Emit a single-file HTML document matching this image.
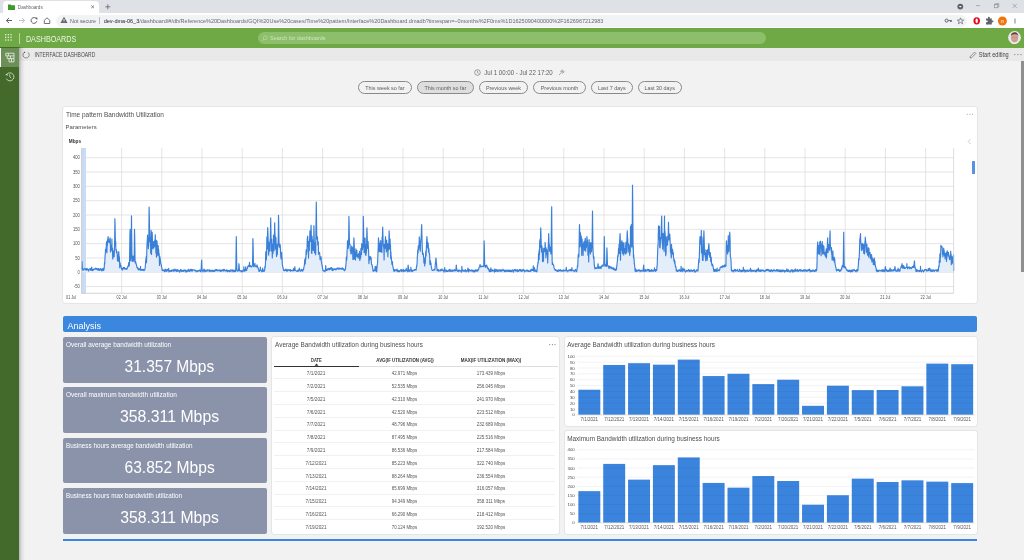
<!DOCTYPE html>
<html><head><meta charset="utf-8">
<style>
*{margin:0;padding:0;box-sizing:border-box}
html,body{width:1024px;height:560px;overflow:hidden;background:#f2f2f2;font-family:"Liberation Sans",sans-serif;color:#333}
.a{position:absolute}
#tabs{left:0;top:0;width:1024px;height:13px;background:#dee1e6}
#tab{left:3px;top:1px;width:96px;height:13px;background:#fff;border-radius:4px 4px 0 0}
#toolbar{left:0;top:13px;width:1024px;height:15px;background:#fff}
#omni{left:56px;top:14.5px;width:911px;height:12px;background:#f1f3f4;border-radius:6px}
#hdr{left:0;top:28px;width:1024px;height:19.6px;background:#6fa945}
#search{left:258px;top:31.5px;width:508px;height:12px;background:#8dbf6b;border-radius:6px}
#side{left:0;top:47.4px;width:19px;height:513px;background:#43692b}
#sel{left:1px;top:47.5px;width:18px;height:19px;background:#6b8f56}
#selbar{left:0;top:47.5px;width:1px;height:19px;background:#fff}
#sub{left:19px;top:47.6px;width:1005px;height:13.4px;background:#e9e9e9}
#shadow{left:19px;top:47.4px;width:6px;height:513px;background:linear-gradient(to right,rgba(0,0,0,.26),rgba(0,0,0,.08) 45%,rgba(0,0,0,0))}
.t{position:absolute;white-space:nowrap;line-height:1}
.btn{position:absolute;top:81px;height:12.7px;border:1px solid #8a8a8a;border-radius:7px;font-size:6px;color:#555;text-align:center;line-height:10.7px;white-space:nowrap}
.card{position:absolute;background:#fff;border-radius:2px;box-shadow:0 0 0 0.5px rgba(0,0,0,.08),0 0 1.5px rgba(0,0,0,.08)}
.gcard{position:absolute;left:63px;width:204px;height:45.6px;background:#8a93aa;border-radius:2px;color:#fff}
.gcard .l{position:absolute;left:2.5px;top:5px;font-size:5.6px;white-space:nowrap;line-height:1}
.gcard .v{position:absolute;left:0;width:204px;top:21px;text-align:center;font-size:15.5px;white-space:nowrap;line-height:1}
.row{position:absolute;left:274px;width:281px;height:12.8px;border-bottom:1px solid #f0f0f0;font-size:4.6px;color:#555}
.row span{position:absolute;top:4px;white-space:nowrap;line-height:1;transform:translateX(-50%)}
</style></head><body>
<div class="a" id="tabs"></div>
<div class="a" id="tab"></div>
<div class="a" id="toolbar"></div>
<div class="a" id="omni"></div>
<div class="a" id="hdr"></div>
<div class="a" id="search"></div>
<div class="a" id="side"></div>
<div class="a" id="sel"></div>
<div class="a" id="selbar"></div>
<div class="a" id="sub"></div>
<div class="a" id="shadow"></div>

<!-- tab contents -->
<svg class="a" style="left:8px;top:4px" width="7" height="6" viewBox="0 0 7 6"><path d="M0 0.5h2.6l0.8 0.8H7V6H0Z" fill="#3f9a2d"/></svg>

<!-- toolbar icons -->
<svg class="a" style="left:0;top:13px" width="60" height="15" viewBox="0 0 60 15">
 <path d="M12 7.5H6.5M9 5L6.3 7.5L9 10" stroke="#5f6368" stroke-width="1" fill="none"/>
 <path d="M19 7.5H24.5M22 5L24.7 7.5L22 10" stroke="#bdc1c6" stroke-width="1" fill="none"/>
 <path d="M36.6 6.2A2.9 2.9 0 1 0 36.8 8.2" stroke="#5f6368" stroke-width="1" fill="none"/><path d="M35 4.6h2.4v2.4z" fill="#5f6368"/>
 <path d="M44.3 7.3L47 4.8L49.8 7.3V10.5H44.3Z" stroke="#5f6368" stroke-width="0.9" fill="none"/>
</svg>
<svg class="a" style="left:60px;top:16px" width="8" height="8" viewBox="0 0 8 8"><path d="M4 0.8L7.5 7H0.5Z" fill="#5f6368"/><rect x="3.6" y="3" width="0.8" height="2" fill="#fff"/><rect x="3.6" y="5.5" width="0.8" height="0.7" fill="#fff"/></svg>
<div class="a" style="left:99px;top:17px;width:0.7px;height:7px;background:#bbb"></div>
<svg class="a" style="left:940px;top:16px" width="84" height="10" viewBox="0 0 84 10">
 <circle cx="6.6" cy="4.6" r="1.5" stroke="#5f6368" stroke-width="1" fill="none"/><path d="M8.1 4.6H11.8M10.6 4.6v1.4M11.6 4.6v1.2" stroke="#5f6368" stroke-width="0.9"/>
 <path d="M20.5 1.9L21.4 4.1H23.7L21.9 5.5L22.6 7.8L20.5 6.4L18.4 7.8L19.1 5.5L17.3 4.1H19.6Z" stroke="#5f6368" stroke-width="0.7" fill="none" stroke-linejoin="round"/>
 <ellipse cx="36.7" cy="4.8" rx="3.3" ry="3.6" fill="#e60a1e"/><ellipse cx="36.7" cy="4.8" rx="1.2" ry="2.4" fill="#fff"/>
 <path d="M46 2.4h2V1.6a0.9 0.9 0 0 1 1.8 0v0.8h2v2h0.8a0.9 0.9 0 0 1 0 1.8h-0.8v2.2h-5.8V6.2h0.8a0.9 0.9 0 0 0 0-1.8h-0.8Z" fill="#5f6368"/>
 <circle cx="62.4" cy="5" r="4.5" fill="#ef7410"/><text x="62.4" y="6.9" font-size="5.2" fill="#fff" text-anchor="middle" font-family="Liberation Sans">n</text>
 <rect x="74.6" y="2.5" width="0.8" height="5" fill="#5f6368"/>
</svg>
<!-- window controls -->
<svg class="a" style="left:950px;top:1px" width="74" height="12" viewBox="0 0 74 12">
 <circle cx="10.3" cy="5.6" r="2.9" fill="#5f6368"/><path d="M8.9 5L10.3 6.6L11.7 5Z" fill="#fff"/>
 <path d="M26 4.6h4" stroke="#888" stroke-width="0.6"/>
 <rect x="44.4" y="3.4" width="3.4" height="3.4" stroke="#888" stroke-width="0.6" fill="none"/><path d="M45.4 3.4V2.6H48.8V5.9H47.8" stroke="#888" stroke-width="0.6" fill="none"/>
 <path d="M62.7 2.9L66.7 6.9M66.7 2.9L62.7 6.9" stroke="#888" stroke-width="0.6"/>
</svg>

<!-- green header -->
<svg class="a" style="left:5px;top:34px" width="7" height="7" viewBox="0 0 7 7" fill="#dfeed3">
 <rect x="0" y="0" width="1.3" height="1.3"/><rect x="2.7" y="0" width="1.3" height="1.3"/><rect x="5.4" y="0" width="1.3" height="1.3"/>
 <rect x="0" y="2.7" width="1.3" height="1.3"/><rect x="2.7" y="2.7" width="1.3" height="1.3"/><rect x="5.4" y="2.7" width="1.3" height="1.3"/>
 <rect x="0" y="5.4" width="1.3" height="1.3"/><rect x="2.7" y="5.4" width="1.3" height="1.3"/><rect x="5.4" y="5.4" width="1.3" height="1.3"/>
</svg>
<div class="a" style="left:19px;top:32.5px;width:0.6px;height:11px;background:#b5d69e"></div>
<svg class="a" style="left:261px;top:34.5px" width="8" height="8" viewBox="0 0 8 8"><circle cx="4.2" cy="2.8" r="1.9" stroke="#c4ddb2" stroke-width="0.6" fill="none"/><path d="M2.85 4.15L0.9 6.1" stroke="#c4ddb2" stroke-width="0.7"/></svg>
<svg class="a" style="left:1008px;top:31.3px" width="13" height="13" viewBox="0 0 13 13">
 <defs><clipPath id="avc"><circle cx="6.5" cy="6.5" r="6.4"/></clipPath></defs>
 <g clip-path="url(#avc)">
 <rect width="13" height="13" fill="#e6e8ec"/>
 <path d="M1.5 13.5C2.5 11 4.5 10.5 6.5 10.5S10.5 11 11.5 13.5Z" fill="#f4f4f6"/>
 <ellipse cx="6.6" cy="6.9" rx="3.7" ry="4.6" fill="#d2a294"/>
 <path d="M2.9 5.6C2.7 2.2 4.6 1.2 6.6 1.2S10.5 2.2 10.3 5.6C9.9 3.9 8.8 3.2 6.6 3.2S3.3 3.9 2.9 5.6Z" fill="#6b4036"/>
 <path d="M4.6 6.6h1.2M7.5 6.6h1.2" stroke="#8a5f55" stroke-width="0.5"/>
 <path d="M5.6 9.4h2" stroke="#b57c70" stroke-width="0.4"/>
 </g>
</svg>

<!-- sidebar icons -->
<svg class="a" style="left:5px;top:52px" width="10" height="11" viewBox="0 0 10 11" fill="none" stroke="#eef3ea" stroke-width="0.8">
 <path d="M0.8 1.2H9V9.9H4V6.6H2.2V3.9H0.8Z M2.2 3.9H9 M4 6.6H9 M3.4 1.2V3.9 M5.5 3.9V6.6 M6.5 6.6V9.9"/>
</svg>
<svg class="a" style="left:5px;top:72px" width="10" height="10" viewBox="0 0 10 10" fill="none" stroke="#e9f0e4" stroke-width="0.75">
 <path d="M1.9 2.2A4 4 0 1 1 1.3 6.6"/><path d="M0.6 2.9L1.9 2.2L2.3 3.6" stroke-width="0.9"/><path d="M4.6 2.3L4.9 4.9L6.2 6.2"/>
</svg>

<!-- sub header -->
<svg class="a" style="left:21.5px;top:50.5px" width="8" height="8" viewBox="0 0 8 8"><path d="M5.65 1.22A3.1 3.1 0 1 1 2.55 1.22" stroke="#555" stroke-width="0.65" fill="none"/><circle cx="2.6" cy="1.3" r="0.65" fill="#444"/></svg>
<svg class="a" style="left:968.5px;top:50.5px" width="8" height="8" viewBox="0 0 8 8"><path d="M1 7L1.4 5.3L5.6 1.1L6.9 2.4L2.7 6.6Z" stroke="#555" stroke-width="0.6" fill="none"/></svg>

<!-- scrollbar -->
<div class="a" style="left:1021px;top:61px;width:3px;height:211px;background:#8f8f8f"></div>

<!-- time range -->
<svg class="a" style="left:473.5px;top:69px" width="7" height="7" viewBox="0 0 7 7"><circle cx="3.5" cy="3.5" r="2.8" stroke="#666" stroke-width="0.6" fill="none"/><path d="M3.5 1.8V3.6L4.7 4.4" stroke="#666" stroke-width="0.6" fill="none"/></svg>
<svg class="a" style="left:558px;top:68.5px" width="7" height="7" viewBox="0 0 7 7"><path d="M1 6L3 4M2.4 2.2L4.8 4.6M3.2 1.8L5.2 3.8M3.6 1.4L5.6 3.4L6.2 2.8L4.2 0.8Z" stroke="#666" stroke-width="0.55" fill="none"/></svg>

<div class="btn" style="left:358px;width:54px"></div>
<div class="btn" style="left:417px;width:57px;background:#dedede"></div>
<div class="btn" style="left:479px;width:49px"></div>
<div class="btn" style="left:533px;width:53px"></div>
<div class="btn" style="left:591px;width:41.5px"></div>
<div class="btn" style="left:638px;width:44px"></div>

<!-- big chart card -->
<div class="card" style="left:63px;top:106.5px;width:913.5px;height:196.5px"></div>
<svg class="a" style="left:967px;top:138px" width="5" height="7" viewBox="0 0 5 7"><path d="M3.5 1L1.2 3.5L3.5 6" stroke="#aaa" stroke-width="0.6" fill="none"/></svg>
<div class="a" style="left:972.2px;top:160.7px;width:2.8px;height:12.9px;background:#5592e2;border-radius:0.5px"></div>

<svg class="a" style="left:0;top:0" width="1024" height="560" viewBox="0 0 1024 560">
 <g stroke="#dcdcdc" stroke-width="0.75">
  <path d="M81.5 286.62H953.7"/>
<path d="M81.5 272.30H953.7"/>
<path d="M81.5 257.98H953.7"/>
<path d="M81.5 243.65H953.7"/>
<path d="M81.5 229.33H953.7"/>
<path d="M81.5 215.00H953.7"/>
<path d="M81.5 200.68H953.7"/>
<path d="M81.5 186.35H953.7"/>
<path d="M81.5 172.03H953.7"/>
<path d="M81.5 157.70H953.7"/>
 </g>
 <g stroke="#dadada" stroke-width="0.7">
  <path d="M121.60 148V293.2"/>
<path d="M161.80 148V293.2"/>
<path d="M202.00 148V293.2"/>
<path d="M242.20 148V293.2"/>
<path d="M282.40 148V293.2"/>
<path d="M322.60 148V293.2"/>
<path d="M362.80 148V293.2"/>
<path d="M403.00 148V293.2"/>
<path d="M443.20 148V293.2"/>
<path d="M483.40 148V293.2"/>
<path d="M523.60 148V293.2"/>
<path d="M563.80 148V293.2"/>
<path d="M604.00 148V293.2"/>
<path d="M644.20 148V293.2"/>
<path d="M684.40 148V293.2"/>
<path d="M724.60 148V293.2"/>
<path d="M764.80 148V293.2"/>
<path d="M805.00 148V293.2"/>
<path d="M845.20 148V293.2"/>
<path d="M885.40 148V293.2"/>
<path d="M925.60 148V293.2"/>
 </g>
 <rect x="81.4" y="148" width="4.6" height="145.5" fill="#c8dcf5"/>
 <path d="M81.3,269.3 L81.5,268.9 L81.7,266.3 L81.9,263.2 L82.1,261.7 L82.3,266.3 L82.5,270.0 L82.7,269.0 L82.9,270.1 L83.1,270.5 L83.3,269.5 L83.5,269.3 L83.7,269.0 L83.9,268.9 L84.1,268.8 L84.3,268.4 L84.5,269.1 L84.7,269.2 L84.9,269.5 L85.1,269.8 L85.3,269.9 L85.5,269.3 L85.7,269.2 L85.9,268.5 L86.1,269.0 L86.3,269.6 L86.5,270.2 L86.7,269.1 L86.9,268.3 L87.1,268.7 L87.3,268.7 L87.5,269.4 L87.7,269.8 L87.9,269.8 L88.1,270.3 L88.3,269.5 L88.5,270.4 L88.7,271.1 L88.9,270.5 L89.1,269.1 L89.3,269.1 L89.5,268.9 L89.7,268.8 L89.9,268.8 L90.1,268.6 L90.3,268.7 L90.5,268.6 L90.7,270.1 L90.9,270.3 L91.1,268.7 L91.3,268.9 L91.5,268.8 L91.7,267.1 L91.9,269.6 L92.1,270.7 L92.3,270.4 L92.5,270.3 L92.7,270.2 L92.9,269.4 L93.1,270.5 L93.3,269.9 L93.5,269.4 L93.7,269.0 L93.9,269.0 L94.1,269.2 L94.3,269.3 L94.5,269.4 L94.7,269.2 L94.9,269.0 L95.1,268.9 L95.3,268.4 L95.5,268.2 L95.7,269.2 L95.9,269.3 L96.1,269.4 L96.3,268.3 L96.5,268.3 L96.7,269.2 L96.9,268.6 L97.1,269.0 L97.3,269.4 L97.5,269.8 L97.7,269.4 L97.9,270.1 L98.1,269.4 L98.3,268.4 L98.5,268.6 L98.7,270.1 L98.9,270.2 L99.1,269.7 L99.3,269.6 L99.5,269.0 L99.7,270.5 L99.9,269.3 L100.1,269.6 L100.3,269.2 L100.5,269.1 L100.7,268.5 L100.9,269.9 L101.1,269.5 L101.3,270.1 L101.5,270.7 L101.7,270.2 L101.9,269.6 L102.1,269.0 L102.3,270.7 L102.5,269.0 L102.7,269.6 L102.9,268.8 L103.1,268.2 L103.3,268.2 L103.5,270.4 L103.7,270.1 L103.9,269.8 L104.1,268.8 L104.3,266.7 L104.5,262.5 L104.7,263.9 L104.9,259.8 L105.1,254.9 L105.3,254.5 L105.5,249.4 L105.7,251.8 L105.9,250.4 L106.1,249.8 L106.3,246.0 L106.5,241.8 L106.7,246.9 L106.9,252.8 L107.1,246.0 L107.3,240.7 L107.5,244.9 L107.7,239.6 L107.9,238.1 L108.1,236.5 L108.3,241.0 L108.5,239.1 L108.7,241.2 L108.9,242.3 L109.1,242.3 L109.3,241.6 L109.5,242.8 L109.7,240.7 L109.9,238.8 L110.1,237.9 L110.3,240.9 L110.5,252.0 L110.7,247.7 L110.9,245.1 L111.1,247.6 L111.3,250.1 L111.5,248.9 L111.7,248.9 L111.9,239.0 L112.1,251.0 L112.3,249.3 L112.5,248.1 L112.7,259.0 L112.9,258.7 L113.1,250.5 L113.3,255.4 L113.5,251.8 L113.7,252.2 L113.9,255.3 L114.1,256.8 L114.3,253.5 L114.5,244.9 L114.7,237.6 L114.9,218.7 L115.1,225.1 L115.3,237.8 L115.5,245.7 L115.7,241.2 L115.9,250.3 L116.1,249.5 L116.3,249.4 L116.5,252.7 L116.7,252.2 L116.9,252.8 L117.1,251.9 L117.3,256.5 L117.5,260.8 L117.7,255.4 L117.9,256.7 L118.1,257.3 L118.3,261.4 L118.5,254.5 L118.7,251.6 L118.9,253.8 L119.1,257.5 L119.3,256.5 L119.5,260.0 L119.7,267.8 L119.9,263.6 L120.1,262.7 L120.3,264.5 L120.5,266.5 L120.7,265.1 L120.9,265.8 L121.1,266.3 L121.3,268.1 L121.5,268.9 L121.7,269.2 L121.9,269.3 L122.1,268.5 L122.3,270.1 L122.5,268.2 L122.7,268.3 L122.9,269.7 L123.1,268.5 L123.3,267.9 L123.5,267.5 L123.7,268.2 L123.9,268.5 L124.1,267.5 L124.3,267.8 L124.5,267.5 L124.7,267.9 L124.9,269.1 L125.1,268.8 L125.3,269.0 L125.5,268.7 L125.7,268.6 L125.9,268.7 L126.1,269.1 L126.3,268.6 L126.5,269.3 L126.7,269.2 L126.9,269.2 L127.1,268.8 L127.3,268.0 L127.5,267.0 L127.7,266.6 L127.9,266.9 L128.1,266.7 L128.3,265.2 L128.5,266.5 L128.7,262.6 L128.9,263.9 L129.1,265.9 L129.3,265.5 L129.5,262.8 L129.7,249.4 L129.9,235.9 L130.1,229.3 L130.3,248.8 L130.5,260.6 L130.7,259.6 L130.9,256.6 L131.1,251.9 L131.3,233.9 L131.5,215.9 L131.7,234.0 L131.9,252.1 L132.1,261.4 L132.3,259.0 L132.5,259.3 L132.7,258.7 L132.9,261.0 L133.1,256.0 L133.3,257.1 L133.5,260.6 L133.7,261.2 L133.9,256.3 L134.1,260.7 L134.3,248.9 L134.5,229.3 L134.7,235.9 L134.9,249.1 L135.1,262.8 L135.3,262.4 L135.5,261.3 L135.7,261.9 L135.9,263.7 L136.1,263.4 L136.3,264.6 L136.5,264.9 L136.7,265.7 L136.9,267.4 L137.1,267.5 L137.3,267.2 L137.5,268.3 L137.7,268.0 L137.9,268.0 L138.1,268.2 L138.3,269.9 L138.5,269.3 L138.7,269.5 L138.9,268.8 L139.1,270.0 L139.3,268.8 L139.5,269.7 L139.7,269.1 L139.9,269.2 L140.1,268.9 L140.3,269.8 L140.5,266.4 L140.7,270.1 L140.9,270.4 L141.1,269.8 L141.3,269.6 L141.5,269.9 L141.7,269.7 L141.9,269.9 L142.1,270.2 L142.3,269.7 L142.5,269.5 L142.7,270.3 L142.9,269.6 L143.1,269.2 L143.3,269.5 L143.5,269.6 L143.7,270.0 L143.9,270.6 L144.1,270.6 L144.3,270.1 L144.5,269.5 L144.7,269.9 L144.9,269.1 L145.1,268.3 L145.3,266.5 L145.5,264.0 L145.7,260.3 L145.9,259.3 L146.1,258.5 L146.3,256.2 L146.5,262.7 L146.7,256.9 L146.9,247.5 L147.1,243.0 L147.3,240.9 L147.5,235.1 L147.7,240.4 L147.9,245.1 L148.1,243.8 L148.3,248.8 L148.5,246.1 L148.7,245.1 L148.9,229.4 L149.1,207.0 L149.3,214.2 L149.5,228.2 L149.7,241.8 L149.9,237.3 L150.1,239.3 L150.3,240.8 L150.5,241.1 L150.7,253.2 L150.9,235.5 L151.1,230.2 L151.3,241.0 L151.5,254.5 L151.7,238.3 L151.9,234.3 L152.1,232.2 L152.3,235.0 L152.5,243.2 L152.7,246.9 L152.9,248.9 L153.1,243.7 L153.3,241.5 L153.5,242.7 L153.7,241.8 L153.9,247.8 L154.1,242.5 L154.3,246.1 L154.5,246.6 L154.7,240.1 L154.9,242.5 L155.1,240.7 L155.3,234.7 L155.5,245.8 L155.7,244.4 L155.9,253.1 L156.1,240.2 L156.3,251.7 L156.5,257.2 L156.7,246.1 L156.9,240.8 L157.1,242.7 L157.3,246.9 L157.5,251.3 L157.7,254.0 L157.9,255.7 L158.1,245.6 L158.3,248.3 L158.5,249.3 L158.7,249.9 L158.9,255.0 L159.1,253.3 L159.3,256.4 L159.5,265.5 L159.7,261.3 L159.9,256.6 L160.1,260.4 L160.3,258.7 L160.5,262.4 L160.7,262.6 L160.9,263.4 L161.1,264.1 L161.3,265.1 L161.5,266.9 L161.7,267.1 L161.9,268.5 L162.1,270.1 L162.3,270.1 L162.5,270.5 L162.7,269.8 L162.9,270.8 L163.1,270.4 L163.3,270.6 L163.5,270.4 L163.7,270.0 L163.9,269.9 L164.1,270.3 L164.3,270.0 L164.5,271.7 L164.7,270.5 L164.9,270.4 L165.1,270.5 L165.3,269.0 L165.5,270.7 L165.7,270.1 L165.9,271.4 L166.1,270.6 L166.3,270.4 L166.5,269.7 L166.7,270.6 L166.9,271.3 L167.1,270.6 L167.3,270.5 L167.5,269.3 L167.7,269.8 L167.9,270.0 L168.1,270.2 L168.3,270.3 L168.5,270.8 L168.7,268.4 L168.9,271.9 L169.1,270.7 L169.3,271.0 L169.5,270.7 L169.7,270.8 L169.9,271.1 L170.1,271.0 L170.3,271.3 L170.5,270.5 L170.7,270.7 L170.9,271.4 L171.1,270.4 L171.3,270.6 L171.5,271.3 L171.7,271.2 L171.9,269.8 L172.1,270.3 L172.3,271.0 L172.5,270.6 L172.7,270.2 L172.9,270.1 L173.1,270.5 L173.3,270.2 L173.5,270.5 L173.7,271.5 L173.9,270.1 L174.1,269.1 L174.3,270.1 L174.5,269.5 L174.7,270.6 L174.9,271.0 L175.1,270.3 L175.3,270.0 L175.5,270.4 L175.7,269.5 L175.9,269.2 L176.1,269.6 L176.3,271.2 L176.5,271.3 L176.7,270.8 L176.9,271.4 L177.1,270.0 L177.3,270.0 L177.5,271.3 L177.7,269.6 L177.9,269.8 L178.1,269.9 L178.3,270.6 L178.5,270.9 L178.7,271.0 L178.9,270.7 L179.1,270.6 L179.3,271.5 L179.5,271.9 L179.7,272.2 L179.9,271.0 L180.1,270.7 L180.3,270.0 L180.5,270.0 L180.7,269.4 L180.9,270.1 L181.1,271.2 L181.3,271.4 L181.5,270.1 L181.7,270.4 L181.9,271.0 L182.1,271.2 L182.3,271.0 L182.5,270.3 L182.7,270.5 L182.9,271.5 L183.1,270.9 L183.3,271.4 L183.5,270.5 L183.7,270.1 L183.9,271.1 L184.1,271.0 L184.3,270.0 L184.5,270.2 L184.7,270.1 L184.9,269.8 L185.1,270.8 L185.3,270.0 L185.5,270.4 L185.7,271.5 L185.9,272.2 L186.1,270.7 L186.3,271.6 L186.5,271.0 L186.7,270.5 L186.9,271.7 L187.1,271.6 L187.3,271.4 L187.5,270.7 L187.7,270.0 L187.9,269.9 L188.1,270.6 L188.3,270.3 L188.5,271.2 L188.7,269.2 L188.9,271.0 L189.1,271.1 L189.3,270.5 L189.5,271.3 L189.7,271.4 L189.9,270.4 L190.1,270.1 L190.3,269.6 L190.5,270.8 L190.7,269.3 L190.9,270.5 L191.1,270.1 L191.3,270.7 L191.5,270.3 L191.7,269.3 L191.9,270.1 L192.1,271.4 L192.3,270.2 L192.5,269.7 L192.7,270.2 L192.9,269.8 L193.1,269.9 L193.3,270.0 L193.5,270.0 L193.7,269.9 L193.9,269.9 L194.1,270.2 L194.3,270.2 L194.5,270.6 L194.7,270.6 L194.9,269.9 L195.1,270.8 L195.3,270.6 L195.5,271.0 L195.7,270.5 L195.9,270.9 L196.1,271.2 L196.3,270.9 L196.5,270.9 L196.7,271.9 L196.9,271.0 L197.1,270.9 L197.3,271.3 L197.5,271.2 L197.7,271.5 L197.9,270.5 L198.1,271.1 L198.3,270.6 L198.5,271.0 L198.7,270.7 L198.9,271.0 L199.1,270.6 L199.3,270.2 L199.5,270.0 L199.7,270.5 L199.9,270.6 L200.1,270.7 L200.3,271.6 L200.5,271.5 L200.7,270.9 L200.9,269.5 L201.1,271.7 L201.3,266.5 L201.5,262.2 L201.7,260.0 L201.9,266.5 L202.1,270.0 L202.3,270.2 L202.5,270.1 L202.7,270.7 L202.9,271.9 L203.1,271.1 L203.3,271.3 L203.5,270.8 L203.7,270.0 L203.9,269.2 L204.1,269.6 L204.3,269.4 L204.5,270.5 L204.7,271.0 L204.9,271.8 L205.1,271.6 L205.3,271.3 L205.5,271.3 L205.7,270.1 L205.9,270.4 L206.1,270.9 L206.3,270.6 L206.5,270.4 L206.7,270.9 L206.9,271.4 L207.1,270.1 L207.3,270.4 L207.5,269.9 L207.7,270.1 L207.9,270.6 L208.1,270.5 L208.3,270.6 L208.5,270.8 L208.7,270.3 L208.9,270.3 L209.1,269.7 L209.3,269.9 L209.5,270.5 L209.7,271.3 L209.9,271.7 L210.1,271.0 L210.3,270.6 L210.5,271.1 L210.7,270.1 L210.9,270.5 L211.1,271.0 L211.3,271.3 L211.5,270.9 L211.7,270.7 L211.9,270.7 L212.1,270.4 L212.3,270.2 L212.5,271.1 L212.7,271.6 L212.9,271.0 L213.1,270.6 L213.3,270.6 L213.5,270.6 L213.7,271.5 L213.9,270.7 L214.1,270.3 L214.3,270.2 L214.5,270.5 L214.7,271.4 L214.9,270.9 L215.1,270.0 L215.3,270.8 L215.5,270.7 L215.7,270.4 L215.9,269.4 L216.1,270.1 L216.3,269.5 L216.5,270.7 L216.7,269.6 L216.9,269.6 L217.1,270.7 L217.3,270.0 L217.5,270.5 L217.7,270.2 L217.9,270.9 L218.1,270.8 L218.3,270.3 L218.5,270.2 L218.7,270.6 L218.9,270.1 L219.1,270.6 L219.3,269.8 L219.5,270.1 L219.7,270.4 L219.9,270.7 L220.1,270.2 L220.3,271.4 L220.5,270.0 L220.7,271.3 L220.9,270.8 L221.1,270.4 L221.3,270.2 L221.5,271.2 L221.7,270.9 L221.9,270.4 L222.1,270.4 L222.3,270.0 L222.5,270.4 L222.7,270.1 L222.9,271.0 L223.1,269.4 L223.3,270.3 L223.5,270.6 L223.7,270.5 L223.9,271.1 L224.1,270.5 L224.3,269.4 L224.5,270.2 L224.7,270.4 L224.9,270.5 L225.1,270.5 L225.3,270.5 L225.5,270.9 L225.7,270.5 L225.9,270.9 L226.1,270.5 L226.3,269.7 L226.5,270.4 L226.7,270.7 L226.9,270.4 L227.1,271.3 L227.3,271.8 L227.5,270.3 L227.7,270.1 L227.9,270.3 L228.1,271.1 L228.3,270.8 L228.5,271.3 L228.7,270.7 L228.9,270.9 L229.1,271.1 L229.3,270.3 L229.5,271.2 L229.7,271.7 L229.9,270.6 L230.1,271.7 L230.3,270.7 L230.5,270.9 L230.7,269.8 L230.9,270.1 L231.1,270.0 L231.3,270.1 L231.5,270.0 L231.7,270.4 L231.9,270.8 L232.1,271.9 L232.3,269.9 L232.5,270.7 L232.7,270.5 L232.9,270.4 L233.1,270.0 L233.3,270.1 L233.5,271.3 L233.7,271.1 L233.9,270.7 L234.1,270.7 L234.3,271.9 L234.5,271.0 L234.7,271.3 L234.9,270.1 L235.1,271.1 L235.3,271.1 L235.5,271.5 L235.7,271.1 L235.9,264.0 L236.1,250.2 L236.3,236.5 L236.5,250.2 L236.7,264.0 L236.9,270.3 L237.1,270.6 L237.3,271.1 L237.5,270.3 L237.7,270.8 L237.9,270.8 L238.1,270.9 L238.3,270.7 L238.5,270.8 L238.7,268.0 L238.9,263.7 L239.1,265.1 L239.3,268.0 L239.5,270.9 L239.7,270.3 L239.9,270.5 L240.1,270.6 L240.3,270.5 L240.5,270.7 L240.7,271.1 L240.9,270.9 L241.1,272.0 L241.3,270.9 L241.5,271.2 L241.7,270.6 L241.9,271.6 L242.1,271.3 L242.3,271.0 L242.5,271.4 L242.7,271.7 L242.9,271.2 L243.1,270.1 L243.3,271.1 L243.5,269.9 L243.7,270.3 L243.9,266.7 L244.1,270.4 L244.3,270.1 L244.5,271.1 L244.7,270.4 L244.9,269.5 L245.1,270.7 L245.3,269.8 L245.5,270.9 L245.7,266.9 L245.9,270.7 L246.1,270.6 L246.3,270.3 L246.5,270.4 L246.7,270.1 L246.9,269.1 L247.1,268.8 L247.3,267.8 L247.5,268.1 L247.7,266.7 L247.9,266.4 L248.1,265.9 L248.3,266.4 L248.5,266.0 L248.7,265.4 L248.9,265.0 L249.1,265.2 L249.3,266.3 L249.5,262.3 L249.7,266.5 L249.9,265.8 L250.1,266.2 L250.3,265.5 L250.5,266.2 L250.7,266.5 L250.9,266.5 L251.1,267.2 L251.3,266.9 L251.5,266.2 L251.7,266.0 L251.9,266.6 L252.1,266.5 L252.3,265.5 L252.5,265.5 L252.7,255.0 L252.9,238.5 L253.1,244.0 L253.3,255.0 L253.5,265.9 L253.7,266.4 L253.9,266.8 L254.1,266.3 L254.3,265.2 L254.5,264.6 L254.7,265.1 L254.9,263.3 L255.1,265.3 L255.3,266.2 L255.5,266.4 L255.7,266.6 L255.9,266.5 L256.1,266.7 L256.3,266.6 L256.5,266.9 L256.7,265.9 L256.9,264.8 L257.1,265.4 L257.3,266.9 L257.5,266.3 L257.7,267.1 L257.9,267.2 L258.1,268.8 L258.3,268.5 L258.5,269.2 L258.7,269.7 L258.9,271.2 L259.1,271.6 L259.3,271.5 L259.5,270.4 L259.7,271.1 L259.9,270.7 L260.1,270.5 L260.3,267.1 L260.5,269.4 L260.7,269.1 L260.9,270.0 L261.1,270.3 L261.3,270.5 L261.5,270.9 L261.7,271.0 L261.9,271.8 L262.1,271.6 L262.3,271.6 L262.5,271.0 L262.7,268.1 L262.9,270.7 L263.1,271.5 L263.3,270.9 L263.5,271.1 L263.7,270.2 L263.9,270.3 L264.1,270.6 L264.3,270.9 L264.5,271.2 L264.7,269.2 L264.9,266.4 L265.1,268.3 L265.3,265.9 L265.5,263.0 L265.7,253.2 L265.9,251.7 L266.1,254.9 L266.3,260.0 L266.5,256.7 L266.7,246.0 L266.9,236.9 L267.1,244.0 L267.3,249.1 L267.5,238.8 L267.7,227.6 L267.9,231.3 L268.1,238.6 L268.3,242.0 L268.5,253.4 L268.7,255.1 L268.9,247.2 L269.1,250.1 L269.3,242.6 L269.5,244.1 L269.7,251.1 L269.9,243.6 L270.1,239.6 L270.3,239.3 L270.5,228.5 L270.7,217.9 L270.9,228.4 L271.1,238.9 L271.3,251.0 L271.5,248.4 L271.7,239.2 L271.9,250.4 L272.1,251.1 L272.3,257.9 L272.5,250.2 L272.7,244.1 L272.9,253.6 L273.1,250.7 L273.3,243.6 L273.5,235.1 L273.7,237.4 L273.9,243.6 L274.1,250.7 L274.3,240.1 L274.5,231.5 L274.7,222.7 L274.9,231.5 L275.1,235.8 L275.3,240.1 L275.5,249.1 L275.7,238.0 L275.9,237.4 L276.1,242.0 L276.3,248.2 L276.5,256.6 L276.7,255.0 L276.9,244.5 L277.1,249.9 L277.3,254.6 L277.5,248.5 L277.7,246.3 L277.9,243.9 L278.1,242.9 L278.3,234.6 L278.5,215.3 L278.7,221.8 L278.9,235.0 L279.1,246.2 L279.3,247.0 L279.5,247.1 L279.7,244.0 L279.9,247.6 L280.1,244.5 L280.3,245.7 L280.5,250.0 L280.7,255.0 L280.9,257.9 L281.1,258.8 L281.3,258.7 L281.5,259.0 L281.7,252.3 L281.9,257.1 L282.1,259.3 L282.3,264.0 L282.5,265.8 L282.7,265.8 L282.9,268.0 L283.1,267.7 L283.3,268.6 L283.5,270.2 L283.7,270.5 L283.9,270.3 L284.1,270.1 L284.3,270.9 L284.5,270.0 L284.7,270.1 L284.9,270.0 L285.1,270.5 L285.3,269.7 L285.5,270.5 L285.7,269.8 L285.9,269.0 L286.1,269.6 L286.3,270.1 L286.5,269.5 L286.7,270.8 L286.9,270.9 L287.1,271.5 L287.3,270.3 L287.5,269.7 L287.7,270.5 L287.9,269.8 L288.1,270.5 L288.3,270.2 L288.5,270.2 L288.7,270.1 L288.9,269.5 L289.1,270.1 L289.3,270.1 L289.5,270.6 L289.7,270.3 L289.9,270.7 L290.1,269.6 L290.3,270.7 L290.5,271.2 L290.7,269.9 L290.9,270.1 L291.1,270.1 L291.3,270.7 L291.5,270.7 L291.7,270.9 L291.9,270.5 L292.1,270.7 L292.3,270.3 L292.5,270.3 L292.7,270.6 L292.9,269.9 L293.1,270.9 L293.3,270.8 L293.5,270.2 L293.7,268.4 L293.9,269.9 L294.1,270.7 L294.3,269.4 L294.5,270.6 L294.7,269.1 L294.9,266.7 L295.1,270.2 L295.3,270.2 L295.5,269.9 L295.7,270.6 L295.9,270.7 L296.1,270.7 L296.3,271.0 L296.5,271.2 L296.7,271.2 L296.9,271.5 L297.1,271.5 L297.3,270.8 L297.5,270.5 L297.7,270.6 L297.9,270.8 L298.1,270.0 L298.3,271.3 L298.5,270.3 L298.7,270.8 L298.9,270.2 L299.1,269.5 L299.3,268.1 L299.5,270.1 L299.7,270.7 L299.9,270.6 L300.1,270.3 L300.3,270.8 L300.5,270.7 L300.7,270.8 L300.9,271.4 L301.1,270.8 L301.3,269.2 L301.5,269.9 L301.7,270.0 L301.9,270.1 L302.1,269.7 L302.3,269.8 L302.5,270.9 L302.7,271.1 L302.9,269.9 L303.1,269.6 L303.3,269.8 L303.5,269.8 L303.7,268.4 L303.9,267.3 L304.1,266.3 L304.3,265.6 L304.5,263.2 L304.7,260.0 L304.9,259.0 L305.1,260.6 L305.3,263.9 L305.5,257.7 L305.7,260.0 L305.9,257.7 L306.1,250.0 L306.3,254.3 L306.5,254.3 L306.7,249.4 L306.9,251.9 L307.1,245.4 L307.3,237.7 L307.5,244.0 L307.7,236.1 L307.9,246.2 L308.1,243.2 L308.3,244.9 L308.5,258.3 L308.7,250.0 L308.9,241.4 L309.1,244.1 L309.3,250.5 L309.5,241.4 L309.7,237.8 L309.9,230.8 L310.1,233.0 L310.3,236.7 L310.5,241.3 L310.7,241.5 L310.9,231.1 L311.1,225.2 L311.3,233.2 L311.5,252.7 L311.7,252.7 L311.9,253.5 L312.1,236.4 L312.3,249.6 L312.5,239.5 L312.7,243.4 L312.9,248.1 L313.1,243.5 L313.3,250.5 L313.5,248.6 L313.7,243.5 L313.9,225.6 L314.1,231.9 L314.3,243.2 L314.5,253.0 L314.7,249.4 L314.9,249.3 L315.1,242.9 L315.3,245.1 L315.5,245.4 L315.7,254.8 L315.9,231.6 L316.1,216.5 L316.3,202.1 L316.5,217.0 L316.7,232.4 L316.9,239.1 L317.1,238.0 L317.3,237.1 L317.5,237.0 L317.7,245.0 L317.9,241.5 L318.1,243.2 L318.3,241.9 L318.5,254.2 L318.7,251.7 L318.9,253.5 L319.1,253.7 L319.3,252.3 L319.5,253.2 L319.7,253.0 L319.9,256.9 L320.1,259.7 L320.3,257.7 L320.5,259.3 L320.7,257.1 L320.9,257.6 L321.1,256.8 L321.3,261.8 L321.5,262.1 L321.7,263.1 L321.9,264.3 L322.1,265.8 L322.3,265.7 L322.5,268.0 L322.7,269.1 L322.9,270.6 L323.1,270.9 L323.3,270.9 L323.5,270.6 L323.7,270.6 L323.9,270.9 L324.1,270.7 L324.3,271.0 L324.5,271.1 L324.7,271.5 L324.9,271.8 L325.1,270.2 L325.3,270.8 L325.5,269.9 L325.7,265.5 L325.9,268.4 L326.1,270.6 L326.3,269.8 L326.5,269.3 L326.7,270.4 L326.9,270.3 L327.1,269.4 L327.3,269.8 L327.5,268.9 L327.7,268.8 L327.9,270.0 L328.1,269.2 L328.3,268.6 L328.5,269.0 L328.7,269.0 L328.9,268.3 L329.1,269.5 L329.3,268.8 L329.5,268.6 L329.7,269.9 L329.9,269.0 L330.1,268.0 L330.3,268.4 L330.5,269.0 L330.7,268.4 L330.9,267.8 L331.1,268.6 L331.3,269.1 L331.5,268.4 L331.7,267.6 L331.9,269.4 L332.1,270.3 L332.3,270.7 L332.5,269.3 L332.7,269.3 L332.9,268.7 L333.1,269.4 L333.3,269.5 L333.5,270.1 L333.7,269.6 L333.9,269.0 L334.1,269.4 L334.3,269.1 L334.5,269.5 L334.7,269.5 L334.9,268.6 L335.1,268.8 L335.3,269.0 L335.5,269.1 L335.7,269.9 L335.9,269.8 L336.1,269.8 L336.3,269.5 L336.5,268.5 L336.7,268.8 L336.9,268.4 L337.1,268.0 L337.3,268.3 L337.5,268.1 L337.7,268.5 L337.9,268.9 L338.1,269.3 L338.3,268.2 L338.5,268.6 L338.7,268.4 L338.9,269.0 L339.1,268.3 L339.3,267.9 L339.5,268.9 L339.7,269.0 L339.9,269.0 L340.1,268.5 L340.3,269.0 L340.5,269.1 L340.7,268.2 L340.9,268.2 L341.1,268.8 L341.3,268.8 L341.5,268.5 L341.7,268.8 L341.9,269.4 L342.1,268.7 L342.3,267.7 L342.5,268.2 L342.7,268.5 L342.9,268.8 L343.1,269.1 L343.3,269.4 L343.5,269.2 L343.7,268.7 L343.9,269.2 L344.1,270.5 L344.3,270.8 L344.5,270.2 L344.7,270.0 L344.9,270.1 L345.1,270.0 L345.3,270.0 L345.5,268.7 L345.7,266.9 L345.9,264.5 L346.1,263.2 L346.3,257.2 L346.5,260.2 L346.7,259.7 L346.9,256.9 L347.1,250.0 L347.3,249.2 L347.5,241.2 L347.7,241.5 L347.9,240.4 L348.1,248.0 L348.3,248.3 L348.5,246.7 L348.7,234.8 L348.9,216.4 L349.1,222.6 L349.3,235.0 L349.5,244.5 L349.7,244.0 L349.9,245.0 L350.1,244.5 L350.3,250.4 L350.5,250.3 L350.7,251.1 L350.9,253.7 L351.1,252.2 L351.3,254.0 L351.5,250.8 L351.7,246.1 L351.9,246.7 L352.1,248.3 L352.3,247.1 L352.5,249.9 L352.7,253.8 L352.9,259.6 L353.1,248.7 L353.3,249.1 L353.5,259.3 L353.7,246.3 L353.9,237.9 L354.1,240.8 L354.3,246.8 L354.5,253.0 L354.7,259.1 L354.9,257.9 L355.1,252.2 L355.3,256.6 L355.5,259.9 L355.7,256.5 L355.9,248.9 L356.1,256.0 L356.3,251.8 L356.5,253.5 L356.7,253.4 L356.9,250.4 L357.1,256.8 L357.3,256.6 L357.5,257.3 L357.7,254.9 L357.9,255.5 L358.1,255.4 L358.3,253.8 L358.5,256.5 L358.7,256.3 L358.9,258.5 L359.1,253.8 L359.3,253.8 L359.5,251.3 L359.7,259.7 L359.9,260.5 L360.1,258.6 L360.3,253.7 L360.5,256.0 L360.7,258.0 L360.9,248.3 L361.1,251.1 L361.3,251.1 L361.5,254.4 L361.7,243.5 L361.9,244.9 L362.1,248.7 L362.3,249.9 L362.5,249.3 L362.7,246.8 L362.9,247.3 L363.1,235.8 L363.3,216.4 L363.5,222.9 L363.7,235.6 L363.9,242.5 L364.1,252.4 L364.3,244.6 L364.5,244.8 L364.7,250.2 L364.9,238.5 L365.1,238.0 L365.3,254.3 L365.5,244.5 L365.7,249.2 L365.9,255.5 L366.1,246.5 L366.3,253.0 L366.5,250.6 L366.7,239.2 L366.9,227.9 L367.1,231.7 L367.3,239.7 L367.5,248.3 L367.7,245.3 L367.9,243.0 L368.1,241.6 L368.3,246.4 L368.5,249.2 L368.7,254.6 L368.9,263.6 L369.1,260.3 L369.3,259.7 L369.5,260.3 L369.7,257.8 L369.9,256.4 L370.1,259.3 L370.3,256.7 L370.5,257.8 L370.7,257.3 L370.9,257.2 L371.1,257.7 L371.3,261.8 L371.5,264.3 L371.7,264.5 L371.9,264.3 L372.1,265.2 L372.3,266.8 L372.5,267.4 L372.7,268.1 L372.9,270.5 L373.1,271.1 L373.3,271.3 L373.5,271.2 L373.7,270.4 L373.9,270.2 L374.1,270.0 L374.3,270.2 L374.5,270.7 L374.7,270.5 L374.9,270.8 L375.1,266.4 L375.3,270.5 L375.5,270.8 L375.7,270.9 L375.9,270.8 L376.1,266.6 L376.3,269.8 L376.5,271.3 L376.7,271.8 L376.9,269.6 L377.1,266.8 L377.3,264.3 L377.5,263.9 L377.7,259.9 L377.9,254.6 L378.1,250.6 L378.3,244.4 L378.5,237.9 L378.7,242.3 L378.9,240.8 L379.1,251.4 L379.3,249.7 L379.5,244.5 L379.7,243.5 L379.9,249.3 L380.1,251.7 L380.3,243.1 L380.5,251.7 L380.7,240.6 L380.9,243.9 L381.1,243.5 L381.3,251.7 L381.5,250.8 L381.7,243.8 L381.9,252.5 L382.1,237.1 L382.3,241.7 L382.5,234.3 L382.7,227.0 L382.9,234.3 L383.1,240.7 L383.3,245.6 L383.5,246.5 L383.7,247.0 L383.9,249.0 L384.1,260.0 L384.3,245.7 L384.5,244.4 L384.7,244.4 L384.9,248.5 L385.1,244.0 L385.3,240.3 L385.5,236.5 L385.7,240.3 L385.9,244.2 L386.1,247.3 L386.3,252.0 L386.5,249.9 L386.7,240.2 L386.9,249.7 L387.1,248.2 L387.3,250.3 L387.5,243.6 L387.7,250.7 L387.9,256.7 L388.1,248.3 L388.3,249.7 L388.5,250.1 L388.7,243.9 L388.9,241.3 L389.1,230.8 L389.3,234.3 L389.5,241.6 L389.7,249.1 L389.9,245.3 L390.1,239.0 L390.3,249.2 L390.5,244.6 L390.7,258.6 L390.9,251.8 L391.1,256.1 L391.3,256.9 L391.5,259.2 L391.7,261.5 L391.9,264.3 L392.1,263.9 L392.3,261.6 L392.5,262.3 L392.7,265.4 L392.9,266.8 L393.1,267.4 L393.3,268.6 L393.5,269.3 L393.7,270.5 L393.9,271.0 L394.1,271.5 L394.3,271.0 L394.5,270.2 L394.7,269.4 L394.9,269.9 L395.1,270.7 L395.3,270.6 L395.5,269.9 L395.7,270.6 L395.9,270.7 L396.1,270.1 L396.3,270.1 L396.5,270.0 L396.7,270.9 L396.9,269.4 L397.1,269.0 L397.3,269.8 L397.5,270.8 L397.7,271.6 L397.9,271.3 L398.1,270.4 L398.3,270.4 L398.5,270.8 L398.7,270.9 L398.9,271.8 L399.1,270.5 L399.3,271.7 L399.5,271.5 L399.7,270.9 L399.9,271.2 L400.1,270.7 L400.3,270.9 L400.5,269.8 L400.7,270.6 L400.9,270.0 L401.1,270.0 L401.3,269.6 L401.5,270.6 L401.7,271.6 L401.9,270.6 L402.1,270.3 L402.3,270.4 L402.5,271.0 L402.7,270.9 L402.9,270.0 L403.1,269.4 L403.3,269.7 L403.5,271.6 L403.7,270.5 L403.9,270.0 L404.1,270.0 L404.3,270.3 L404.5,271.0 L404.7,270.3 L404.9,271.4 L405.1,270.1 L405.3,270.6 L405.5,270.2 L405.7,270.1 L405.9,270.3 L406.1,271.0 L406.3,268.2 L406.5,270.8 L406.7,270.6 L406.9,270.3 L407.1,270.4 L407.3,270.6 L407.5,269.9 L407.7,271.8 L407.9,268.6 L408.1,265.1 L408.3,266.3 L408.5,268.6 L408.7,270.9 L408.9,270.6 L409.1,271.7 L409.3,271.3 L409.5,269.9 L409.7,270.7 L409.9,271.0 L410.1,270.3 L410.3,270.3 L410.5,271.0 L410.7,270.7 L410.9,267.2 L411.1,270.4 L411.3,271.2 L411.5,270.6 L411.7,270.1 L411.9,270.2 L412.1,271.7 L412.3,271.4 L412.5,271.1 L412.7,270.9 L412.9,270.1 L413.1,270.5 L413.3,270.4 L413.5,270.7 L413.7,270.7 L413.9,270.2 L414.1,270.5 L414.3,269.7 L414.5,270.0 L414.7,269.6 L414.9,269.9 L415.1,269.5 L415.3,269.3 L415.5,269.6 L415.7,270.0 L415.9,270.1 L416.1,270.1 L416.3,268.8 L416.5,266.2 L416.7,267.0 L416.9,264.4 L417.1,263.4 L417.3,257.4 L417.5,255.4 L417.7,250.1 L417.9,250.0 L418.1,252.8 L418.3,245.8 L418.5,249.6 L418.7,249.2 L418.9,246.5 L419.1,244.1 L419.3,236.9 L419.5,244.3 L419.7,241.4 L419.9,242.4 L420.1,249.6 L420.3,251.2 L420.5,246.6 L420.7,241.2 L420.9,239.7 L421.1,238.1 L421.3,234.7 L421.5,227.8 L421.7,224.5 L421.9,234.3 L422.1,241.7 L422.3,248.5 L422.5,254.3 L422.7,252.4 L422.9,253.8 L423.1,254.4 L423.3,253.6 L423.5,257.2 L423.7,258.0 L423.9,263.0 L424.1,260.5 L424.3,263.2 L424.5,259.5 L424.7,265.9 L424.9,262.3 L425.1,257.0 L425.3,263.3 L425.5,257.8 L425.7,253.3 L425.9,250.7 L426.1,256.0 L426.3,249.5 L426.5,244.8 L426.7,240.1 L426.9,236.5 L427.1,239.5 L427.3,243.2 L427.5,248.0 L427.7,244.7 L427.9,246.4 L428.1,242.7 L428.3,245.3 L428.5,251.4 L428.7,252.3 L428.9,248.6 L429.1,253.2 L429.3,252.9 L429.5,253.3 L429.7,256.5 L429.9,264.4 L430.1,260.9 L430.3,260.5 L430.5,261.5 L430.7,264.3 L430.9,262.8 L431.1,265.2 L431.3,267.1 L431.5,267.2 L431.7,268.6 L431.9,269.7 L432.1,270.1 L432.3,270.3 L432.5,270.5 L432.7,270.2 L432.9,270.2 L433.1,270.2 L433.3,270.3 L433.5,269.7 L433.7,270.0 L433.9,270.2 L434.1,270.2 L434.3,270.0 L434.5,269.9 L434.7,268.8 L434.9,269.7 L435.1,267.0 L435.3,264.0 L435.5,262.7 L435.7,261.0 L435.9,258.1 L436.1,258.6 L436.3,262.6 L436.5,263.3 L436.7,266.5 L436.9,268.4 L437.1,270.8 L437.3,270.7 L437.5,270.5 L437.7,269.3 L437.9,270.1 L438.1,270.1 L438.3,270.2 L438.5,271.1 L438.7,269.7 L438.9,270.1 L439.1,270.4 L439.3,270.6 L439.5,270.7 L439.7,270.9 L439.9,270.6 L440.1,271.1 L440.3,269.7 L440.5,269.9 L440.7,269.9 L440.9,269.8 L441.1,269.5 L441.3,270.6 L441.5,270.1 L441.7,270.1 L441.9,268.9 L442.1,270.1 L442.3,270.0 L442.5,269.7 L442.7,270.1 L442.9,270.5 L443.1,270.5 L443.3,271.2 L443.5,271.0 L443.7,270.1 L443.9,271.1 L444.1,272.1 L444.3,270.4 L444.5,270.8 L444.7,267.6 L444.9,270.2 L445.1,270.6 L445.3,270.6 L445.5,270.2 L445.7,270.2 L445.9,271.7 L446.1,271.3 L446.3,270.1 L446.5,270.4 L446.7,270.5 L446.9,271.3 L447.1,270.9 L447.3,271.3 L447.5,271.5 L447.7,271.5 L447.9,270.5 L448.1,270.9 L448.3,270.0 L448.5,270.7 L448.7,270.9 L448.9,270.8 L449.1,271.4 L449.3,270.0 L449.5,269.4 L449.7,271.2 L449.9,271.0 L450.1,270.4 L450.3,271.1 L450.5,269.9 L450.7,271.0 L450.9,270.2 L451.1,271.4 L451.3,270.9 L451.5,270.4 L451.7,271.1 L451.9,270.9 L452.1,269.8 L452.3,270.3 L452.5,270.2 L452.7,271.4 L452.9,271.3 L453.1,270.3 L453.3,270.8 L453.5,270.2 L453.7,270.6 L453.9,270.7 L454.1,270.7 L454.3,270.1 L454.5,269.7 L454.7,269.8 L454.9,271.2 L455.1,270.3 L455.3,269.9 L455.5,270.2 L455.7,270.6 L455.9,269.7 L456.1,267.4 L456.3,265.1 L456.5,267.4 L456.7,268.9 L456.9,270.3 L457.1,270.9 L457.3,271.2 L457.5,270.3 L457.7,270.5 L457.9,270.7 L458.1,271.7 L458.3,270.7 L458.5,270.1 L458.7,270.8 L458.9,270.3 L459.1,271.2 L459.3,270.0 L459.5,270.2 L459.7,270.4 L459.9,270.8 L460.1,270.5 L460.3,270.8 L460.5,270.8 L460.7,270.7 L460.9,270.8 L461.1,270.6 L461.3,272.2 L461.5,272.2 L461.7,270.8 L461.9,266.3 L462.1,270.5 L462.3,270.1 L462.5,270.0 L462.7,270.9 L462.9,270.2 L463.1,270.3 L463.3,270.2 L463.5,270.8 L463.7,271.2 L463.9,270.9 L464.1,271.2 L464.3,271.1 L464.5,270.1 L464.7,270.8 L464.9,271.2 L465.1,270.9 L465.3,270.9 L465.5,269.7 L465.7,270.0 L465.9,271.1 L466.1,271.9 L466.3,270.6 L466.5,270.7 L466.7,270.8 L466.9,270.9 L467.1,270.9 L467.3,270.5 L467.5,271.2 L467.7,269.7 L467.9,268.0 L468.1,268.6 L468.3,269.7 L468.5,270.3 L468.7,271.9 L468.9,271.1 L469.1,269.5 L469.3,269.4 L469.5,269.9 L469.7,270.4 L469.9,270.1 L470.1,270.7 L470.3,270.8 L470.5,270.5 L470.7,270.8 L470.9,270.8 L471.1,270.6 L471.3,270.5 L471.5,269.8 L471.7,270.4 L471.9,271.1 L472.1,270.6 L472.3,270.9 L472.5,270.0 L472.7,270.6 L472.9,270.6 L473.1,271.3 L473.3,272.0 L473.5,271.0 L473.7,270.4 L473.9,270.4 L474.1,270.3 L474.3,270.8 L474.5,271.9 L474.7,271.9 L474.9,271.1 L475.1,270.9 L475.3,270.7 L475.5,269.7 L475.7,270.3 L475.9,270.3 L476.1,271.4 L476.3,271.2 L476.5,270.1 L476.7,270.3 L476.9,270.0 L477.1,269.8 L477.3,270.5 L477.5,270.8 L477.7,271.2 L477.9,269.8 L478.1,269.7 L478.3,269.3 L478.5,269.9 L478.7,269.1 L478.9,268.2 L479.1,267.4 L479.3,267.2 L479.5,266.6 L479.7,266.6 L479.9,265.2 L480.1,264.5 L480.3,265.5 L480.5,266.8 L480.7,266.8 L480.9,266.2 L481.1,265.9 L481.3,266.6 L481.5,266.5 L481.7,266.7 L481.9,266.6 L482.1,266.5 L482.3,266.5 L482.5,266.2 L482.7,266.3 L482.9,266.1 L483.1,266.7 L483.3,266.4 L483.5,266.3 L483.7,266.5 L483.9,256.3 L484.1,240.8 L484.3,245.9 L484.5,256.3 L484.7,265.9 L484.9,265.1 L485.1,265.9 L485.3,265.9 L485.5,267.4 L485.7,266.4 L485.9,265.6 L486.1,265.3 L486.3,265.4 L486.5,265.1 L486.7,266.1 L486.9,265.6 L487.1,267.4 L487.3,266.7 L487.5,268.1 L487.7,267.5 L487.9,268.9 L488.1,268.1 L488.3,268.9 L488.5,268.3 L488.7,269.5 L488.9,270.0 L489.1,270.2 L489.3,271.7 L489.5,270.9 L489.7,271.5 L489.9,270.3 L490.1,269.5 L490.3,270.6 L490.5,271.2 L490.7,271.7 L490.9,267.9 L491.1,271.4 L491.3,270.1 L491.5,269.7 L491.7,270.8 L491.9,270.5 L492.1,270.1 L492.3,271.1 L492.5,270.9 L492.7,269.8 L492.9,270.2 L493.1,270.7 L493.3,270.5 L493.5,270.9 L493.7,270.9 L493.9,270.4 L494.1,270.1 L494.3,270.8 L494.5,272.2 L494.7,271.3 L494.9,268.8 L495.1,269.9 L495.3,271.4 L495.5,270.6 L495.7,270.0 L495.9,269.9 L496.1,271.3 L496.3,269.9 L496.5,269.6 L496.7,269.9 L496.9,270.9 L497.1,270.0 L497.3,271.2 L497.5,270.9 L497.7,271.7 L497.9,269.8 L498.1,270.6 L498.3,271.3 L498.5,270.1 L498.7,271.0 L498.9,270.9 L499.1,270.4 L499.3,270.1 L499.5,269.8 L499.7,271.0 L499.9,270.1 L500.1,270.4 L500.3,271.0 L500.5,269.9 L500.7,270.5 L500.9,271.6 L501.1,269.9 L501.3,270.4 L501.5,270.2 L501.7,270.3 L501.9,271.0 L502.1,270.5 L502.3,270.8 L502.5,270.7 L502.7,270.5 L502.9,269.1 L503.1,270.4 L503.3,270.1 L503.5,270.6 L503.7,270.2 L503.9,270.2 L504.1,270.0 L504.3,270.5 L504.5,271.6 L504.7,270.6 L504.9,270.7 L505.1,270.3 L505.3,271.3 L505.5,271.1 L505.7,271.6 L505.9,270.0 L506.1,270.7 L506.3,270.9 L506.5,270.4 L506.7,271.2 L506.9,270.8 L507.1,270.2 L507.3,270.4 L507.5,271.4 L507.7,270.5 L507.9,270.2 L508.1,271.0 L508.3,271.4 L508.5,270.0 L508.7,270.7 L508.9,270.4 L509.1,271.0 L509.3,271.4 L509.5,271.0 L509.7,270.4 L509.9,270.1 L510.1,271.5 L510.3,270.9 L510.5,271.3 L510.7,270.4 L510.9,270.3 L511.1,271.5 L511.3,270.9 L511.5,271.4 L511.7,270.9 L511.9,271.8 L512.1,270.4 L512.3,269.9 L512.5,270.4 L512.7,270.3 L512.9,270.5 L513.1,270.2 L513.3,271.1 L513.5,272.2 L513.7,271.2 L513.9,271.0 L514.1,269.9 L514.3,270.3 L514.5,269.9 L514.7,270.1 L514.9,269.4 L515.1,269.9 L515.3,270.7 L515.5,271.0 L515.7,270.5 L515.9,269.6 L516.1,270.0 L516.3,271.0 L516.5,270.1 L516.7,270.3 L516.9,271.1 L517.1,271.4 L517.3,271.6 L517.5,271.0 L517.7,269.7 L517.9,270.3 L518.1,270.3 L518.3,270.5 L518.5,271.4 L518.7,270.6 L518.9,270.8 L519.1,270.3 L519.3,270.2 L519.5,269.6 L519.7,269.9 L519.9,269.5 L520.1,271.0 L520.3,271.1 L520.5,269.5 L520.7,270.6 L520.9,270.2 L521.1,270.3 L521.3,270.6 L521.5,271.4 L521.7,270.4 L521.9,269.8 L522.1,270.0 L522.3,270.3 L522.5,270.3 L522.7,271.1 L522.9,270.2 L523.1,269.6 L523.3,269.4 L523.5,270.7 L523.7,270.4 L523.9,270.3 L524.1,270.4 L524.3,270.1 L524.5,270.8 L524.7,272.0 L524.9,271.1 L525.1,271.3 L525.3,270.8 L525.5,270.6 L525.7,270.6 L525.9,270.5 L526.1,270.7 L526.3,270.6 L526.5,270.1 L526.7,270.2 L526.9,271.3 L527.1,270.7 L527.3,270.2 L527.5,270.8 L527.7,270.4 L527.9,270.2 L528.1,271.0 L528.3,271.4 L528.5,270.9 L528.7,270.9 L528.9,271.1 L529.1,271.6 L529.3,271.2 L529.5,271.4 L529.7,271.0 L529.9,270.9 L530.1,270.6 L530.3,270.0 L530.5,271.0 L530.7,271.4 L530.9,269.9 L531.1,270.5 L531.3,270.5 L531.5,269.2 L531.7,269.4 L531.9,270.5 L532.1,270.5 L532.3,270.5 L532.5,269.6 L532.7,270.4 L532.9,270.2 L533.1,269.8 L533.3,265.8 L533.5,271.0 L533.7,270.4 L533.9,271.1 L534.1,270.7 L534.3,270.8 L534.5,267.5 L534.7,270.1 L534.9,269.9 L535.1,271.3 L535.3,271.0 L535.5,271.1 L535.7,270.0 L535.9,270.5 L536.1,270.7 L536.3,271.7 L536.5,271.3 L536.7,270.5 L536.9,271.8 L537.1,269.4 L537.3,267.4 L537.5,265.2 L537.7,265.2 L537.9,262.4 L538.1,263.2 L538.3,262.4 L538.5,254.2 L538.7,257.0 L538.9,251.8 L539.1,259.8 L539.3,249.3 L539.5,254.4 L539.7,241.0 L539.9,240.9 L540.1,239.1 L540.3,247.6 L540.5,238.2 L540.7,227.9 L540.9,231.6 L541.1,239.2 L541.3,247.4 L541.5,251.9 L541.7,251.3 L541.9,245.9 L542.1,249.5 L542.3,248.4 L542.5,261.5 L542.7,250.9 L542.9,257.1 L543.1,261.7 L543.3,254.9 L543.5,260.7 L543.7,248.2 L543.9,250.9 L544.1,251.9 L544.3,248.7 L544.5,251.4 L544.7,251.1 L544.9,250.3 L545.1,242.4 L545.3,245.0 L545.5,250.9 L545.7,250.2 L545.9,258.0 L546.1,247.7 L546.3,254.7 L546.5,254.2 L546.7,252.5 L546.9,249.7 L547.1,253.7 L547.3,254.6 L547.5,254.9 L547.7,263.0 L547.9,257.4 L548.1,249.9 L548.3,245.4 L548.5,240.2 L548.7,233.6 L548.9,240.1 L549.1,246.6 L549.3,244.1 L549.5,251.2 L549.7,248.2 L549.9,249.3 L550.1,249.0 L550.3,247.1 L550.5,250.0 L550.7,252.5 L550.9,254.0 L551.1,249.1 L551.3,236.0 L551.5,216.7 L551.7,206.7 L551.9,237.7 L552.1,259.4 L552.3,264.5 L552.5,262.6 L552.7,264.2 L552.9,263.9 L553.1,263.9 L553.3,265.1 L553.5,265.5 L553.7,265.2 L553.9,266.5 L554.1,267.9 L554.3,268.6 L554.5,268.8 L554.7,269.3 L554.9,269.5 L555.1,270.0 L555.3,270.5 L555.5,269.6 L555.7,270.4 L555.9,270.0 L556.1,270.4 L556.3,270.8 L556.5,270.6 L556.7,270.7 L556.9,270.0 L557.1,271.2 L557.3,270.4 L557.5,270.5 L557.7,271.0 L557.9,271.4 L558.1,270.7 L558.3,270.4 L558.5,271.0 L558.7,271.3 L558.9,269.7 L559.1,270.2 L559.3,271.0 L559.5,270.0 L559.7,270.4 L559.9,270.0 L560.1,270.4 L560.3,269.5 L560.5,270.2 L560.7,270.8 L560.9,271.1 L561.1,270.4 L561.3,270.4 L561.5,270.6 L561.7,270.6 L561.9,270.4 L562.1,271.4 L562.3,270.6 L562.5,271.0 L562.7,270.7 L562.9,270.5 L563.1,270.4 L563.3,269.8 L563.5,270.6 L563.7,270.6 L563.9,271.3 L564.1,270.7 L564.3,270.8 L564.5,270.6 L564.7,270.3 L564.9,270.1 L565.1,270.2 L565.3,270.5 L565.5,270.8 L565.7,270.4 L565.9,269.7 L566.1,269.6 L566.3,267.3 L566.5,270.6 L566.7,270.6 L566.9,271.0 L567.1,270.8 L567.3,270.9 L567.5,270.9 L567.7,270.8 L567.9,271.8 L568.1,270.8 L568.3,270.3 L568.5,270.1 L568.7,270.2 L568.9,270.2 L569.1,270.2 L569.3,269.9 L569.5,270.6 L569.7,270.2 L569.9,270.6 L570.1,269.9 L570.3,270.6 L570.5,270.4 L570.7,269.4 L570.9,270.6 L571.1,270.5 L571.3,271.0 L571.5,270.4 L571.7,270.8 L571.9,267.5 L572.1,270.6 L572.3,269.9 L572.5,270.1 L572.7,270.1 L572.9,270.2 L573.1,270.2 L573.3,270.3 L573.5,270.6 L573.7,271.1 L573.9,271.1 L574.1,271.4 L574.3,271.8 L574.5,270.5 L574.7,270.7 L574.9,270.6 L575.1,270.5 L575.3,269.4 L575.5,270.4 L575.7,269.9 L575.9,271.2 L576.1,270.5 L576.3,270.3 L576.5,270.1 L576.7,271.6 L576.9,269.8 L577.1,268.5 L577.3,267.2 L577.5,265.7 L577.7,266.6 L577.9,263.4 L578.1,256.7 L578.3,254.3 L578.5,257.0 L578.7,257.2 L578.9,256.5 L579.1,244.7 L579.3,233.8 L579.5,224.5 L579.7,232.2 L579.9,238.3 L580.1,246.9 L580.3,246.4 L580.5,232.9 L580.7,241.6 L580.9,241.3 L581.1,235.8 L581.3,236.5 L581.5,241.8 L581.7,255.3 L581.9,239.8 L582.1,239.1 L582.3,244.9 L582.5,245.1 L582.7,250.1 L582.9,251.7 L583.1,255.5 L583.3,246.4 L583.5,243.4 L583.7,244.4 L583.9,241.8 L584.1,242.2 L584.3,244.4 L584.5,250.2 L584.7,244.8 L584.9,239.9 L585.1,241.0 L585.3,238.3 L585.5,246.0 L585.7,251.3 L585.9,241.9 L586.1,247.8 L586.3,245.7 L586.5,247.2 L586.7,242.5 L586.9,236.5 L587.1,238.5 L587.3,242.5 L587.5,240.4 L587.7,243.4 L587.9,255.2 L588.1,254.2 L588.3,255.0 L588.5,253.3 L588.7,261.9 L588.9,249.2 L589.1,239.6 L589.3,245.6 L589.5,242.9 L589.7,242.7 L589.9,251.8 L590.1,242.9 L590.3,254.1 L590.5,252.6 L590.7,251.0 L590.9,242.7 L591.1,245.4 L591.3,247.5 L591.5,251.6 L591.7,248.7 L591.9,248.0 L592.1,241.2 L592.3,226.7 L592.5,211.0 L592.7,227.9 L592.9,245.9 L593.1,251.1 L593.3,255.5 L593.5,258.5 L593.7,256.3 L593.9,257.7 L594.1,261.3 L594.3,264.6 L594.5,266.6 L594.7,267.3 L594.9,268.8 L595.1,268.6 L595.3,268.4 L595.5,268.2 L595.7,268.4 L595.9,267.4 L596.1,268.4 L596.3,268.3 L596.5,268.0 L596.7,268.0 L596.9,268.2 L597.1,268.6 L597.3,267.7 L597.5,267.5 L597.7,266.5 L597.9,264.6 L598.1,263.7 L598.3,266.5 L598.5,268.3 L598.7,268.3 L598.9,268.0 L599.1,267.3 L599.3,266.7 L599.5,267.2 L599.7,268.1 L599.9,268.5 L600.1,267.8 L600.3,267.1 L600.5,267.0 L600.7,266.7 L600.9,267.2 L601.1,268.4 L601.3,267.7 L601.5,266.1 L601.7,266.2 L601.9,266.1 L602.1,265.1 L602.3,266.2 L602.5,265.5 L602.7,265.2 L602.9,265.6 L603.1,266.2 L603.3,265.1 L603.5,264.9 L603.7,265.1 L603.9,259.5 L604.1,248.0 L604.3,236.5 L604.5,248.0 L604.7,259.7 L604.9,266.2 L605.1,265.5 L605.3,264.3 L605.5,265.3 L605.7,265.9 L605.9,266.2 L606.1,265.9 L606.3,266.6 L606.5,265.0 L606.7,259.0 L606.9,247.9 L607.1,251.7 L607.3,259.2 L607.5,265.8 L607.7,265.9 L607.9,265.6 L608.1,266.1 L608.3,266.4 L608.5,266.9 L608.7,266.1 L608.9,268.3 L609.1,267.4 L609.3,268.3 L609.5,267.6 L609.7,267.1 L609.9,266.2 L610.1,267.4 L610.3,267.3 L610.5,267.4 L610.7,267.8 L610.9,267.5 L611.1,267.1 L611.3,268.7 L611.5,267.9 L611.7,267.2 L611.9,267.9 L612.1,267.8 L612.3,268.4 L612.5,268.6 L612.7,268.1 L612.9,268.7 L613.1,268.6 L613.3,269.4 L613.5,268.7 L613.7,268.8 L613.9,267.7 L614.1,268.8 L614.3,270.0 L614.5,269.8 L614.7,270.0 L614.9,270.1 L615.1,269.8 L615.3,269.0 L615.5,270.3 L615.7,269.0 L615.9,269.8 L616.1,269.5 L616.3,269.9 L616.5,269.3 L616.7,266.8 L616.9,265.7 L617.1,263.2 L617.3,261.4 L617.5,260.1 L617.7,255.6 L617.9,256.3 L618.1,256.3 L618.3,254.4 L618.5,248.7 L618.7,248.3 L618.9,248.4 L619.1,244.4 L619.3,253.5 L619.5,243.9 L619.7,240.2 L619.9,235.8 L620.1,233.6 L620.3,239.9 L620.5,260.2 L620.7,247.9 L620.9,246.6 L621.1,250.4 L621.3,242.4 L621.5,249.6 L621.7,241.9 L621.9,240.7 L622.1,241.7 L622.3,250.6 L622.5,253.7 L622.7,249.2 L622.9,243.1 L623.1,251.4 L623.3,248.3 L623.5,244.3 L623.7,255.1 L623.9,242.6 L624.1,247.7 L624.3,250.8 L624.5,248.4 L624.7,249.2 L624.9,252.9 L625.1,252.6 L625.3,250.7 L625.5,253.9 L625.7,244.9 L625.9,243.2 L626.1,242.1 L626.3,253.3 L626.5,251.4 L626.7,245.5 L626.9,240.3 L627.1,233.9 L627.3,230.8 L627.5,237.1 L627.7,238.4 L627.9,244.6 L628.1,252.3 L628.3,244.1 L628.5,243.7 L628.7,248.1 L628.9,249.7 L629.1,245.0 L629.3,247.8 L629.5,251.6 L629.7,255.3 L629.9,253.0 L630.1,251.5 L630.3,251.4 L630.5,226.7 L630.7,245.2 L630.9,237.1 L631.1,228.5 L631.3,224.5 L631.5,230.2 L631.7,247.2 L631.9,246.4 L632.1,239.6 L632.3,220.3 L632.5,185.2 L632.7,197.7 L632.9,223.8 L633.1,249.2 L633.3,246.2 L633.5,257.4 L633.7,254.5 L633.9,259.3 L634.1,258.7 L634.3,263.4 L634.5,264.4 L634.7,266.0 L634.9,268.8 L635.1,270.9 L635.3,271.3 L635.5,268.8 L635.7,270.9 L635.9,271.6 L636.1,271.3 L636.3,270.9 L636.5,270.5 L636.7,269.8 L636.9,270.5 L637.1,271.4 L637.3,270.7 L637.5,270.7 L637.7,270.4 L637.9,270.4 L638.1,270.1 L638.3,269.9 L638.5,270.9 L638.7,269.8 L638.9,270.0 L639.1,269.9 L639.3,270.1 L639.5,270.1 L639.7,270.7 L639.9,270.0 L640.1,271.8 L640.3,270.4 L640.5,270.9 L640.7,270.6 L640.9,270.5 L641.1,270.4 L641.3,270.9 L641.5,270.4 L641.7,270.7 L641.9,271.2 L642.1,270.8 L642.3,270.7 L642.5,271.1 L642.7,270.1 L642.9,270.9 L643.1,270.5 L643.3,268.6 L643.5,266.3 L643.7,265.1 L643.9,268.6 L644.1,271.6 L644.3,269.8 L644.5,270.2 L644.7,270.2 L644.9,269.9 L645.1,270.3 L645.3,271.3 L645.5,269.9 L645.7,269.6 L645.9,270.6 L646.1,271.2 L646.3,270.3 L646.5,270.9 L646.7,270.3 L646.9,270.9 L647.1,270.8 L647.3,270.2 L647.5,269.7 L647.7,269.3 L647.9,269.8 L648.1,269.9 L648.3,270.2 L648.5,269.3 L648.7,270.9 L648.9,269.6 L649.1,269.5 L649.3,270.2 L649.5,271.6 L649.7,270.3 L649.9,271.2 L650.1,270.6 L650.3,270.5 L650.5,270.8 L650.7,271.4 L650.9,270.5 L651.1,269.9 L651.3,271.3 L651.5,269.6 L651.7,270.3 L651.9,270.1 L652.1,270.5 L652.3,270.9 L652.5,271.2 L652.7,270.1 L652.9,270.5 L653.1,270.7 L653.3,271.2 L653.5,271.1 L653.7,271.1 L653.9,270.3 L654.1,269.8 L654.3,270.7 L654.5,267.8 L654.7,270.2 L654.9,270.5 L655.1,270.6 L655.3,270.9 L655.5,271.4 L655.7,269.5 L655.9,270.5 L656.1,270.8 L656.3,270.1 L656.5,270.2 L656.7,270.5 L656.9,267.4 L657.1,266.2 L657.3,262.7 L657.5,255.6 L657.7,251.2 L657.9,245.0 L658.1,245.6 L658.3,234.6 L658.5,225.9 L658.7,232.4 L658.9,229.4 L659.1,239.2 L659.3,231.5 L659.5,226.3 L659.7,247.3 L659.9,247.9 L660.1,247.6 L660.3,245.1 L660.5,237.7 L660.7,239.1 L660.9,237.8 L661.1,237.9 L661.3,229.2 L661.5,220.5 L661.7,216.1 L661.9,229.2 L662.1,239.9 L662.3,244.0 L662.5,241.5 L662.7,249.3 L662.9,235.9 L663.1,233.3 L663.3,237.8 L663.5,243.2 L663.7,243.6 L663.9,245.2 L664.1,251.6 L664.3,233.1 L664.5,216.0 L664.7,236.2 L664.9,230.8 L665.1,232.6 L665.3,236.0 L665.5,249.0 L665.7,255.7 L665.9,242.6 L666.1,254.0 L666.3,236.8 L666.5,242.9 L666.7,241.6 L666.9,241.8 L667.1,245.4 L667.3,244.2 L667.5,244.9 L667.7,236.1 L667.9,241.1 L668.1,238.9 L668.3,230.6 L668.5,222.2 L668.7,230.8 L668.9,239.6 L669.1,234.4 L669.3,234.7 L669.5,239.9 L669.7,234.0 L669.9,235.7 L670.1,241.1 L670.3,245.5 L670.5,252.2 L670.7,248.0 L670.9,249.8 L671.1,256.8 L671.3,258.0 L671.5,244.4 L671.7,247.9 L671.9,248.4 L672.1,250.3 L672.3,254.0 L672.5,252.1 L672.7,249.7 L672.9,254.4 L673.1,253.7 L673.3,252.6 L673.5,257.5 L673.7,257.9 L673.9,261.0 L674.1,259.2 L674.3,261.5 L674.5,259.7 L674.7,263.5 L674.9,261.0 L675.1,264.2 L675.3,265.6 L675.5,266.8 L675.7,266.2 L675.9,266.9 L676.1,268.5 L676.3,270.9 L676.5,269.4 L676.7,270.5 L676.9,271.1 L677.1,271.0 L677.3,271.4 L677.5,270.7 L677.7,271.5 L677.9,271.2 L678.1,270.4 L678.3,270.9 L678.5,270.2 L678.7,269.9 L678.9,270.8 L679.1,270.8 L679.3,270.3 L679.5,270.2 L679.7,269.6 L679.9,270.5 L680.1,271.0 L680.3,271.3 L680.5,271.3 L680.7,270.2 L680.9,270.4 L681.1,266.3 L681.3,269.8 L681.5,269.7 L681.7,270.7 L681.9,271.4 L682.1,270.0 L682.3,271.6 L682.5,270.5 L682.7,268.3 L682.9,268.0 L683.1,268.6 L683.3,269.7 L683.5,270.2 L683.7,270.0 L683.9,270.6 L684.1,271.2 L684.3,269.5 L684.5,269.2 L684.7,269.7 L684.9,270.3 L685.1,270.9 L685.3,271.4 L685.5,272.1 L685.7,271.7 L685.9,271.6 L686.1,271.4 L686.3,271.1 L686.5,270.5 L686.7,270.3 L686.9,270.4 L687.1,270.8 L687.3,271.2 L687.5,271.0 L687.7,270.2 L687.9,270.2 L688.1,270.4 L688.3,269.5 L688.5,270.7 L688.7,270.6 L688.9,270.4 L689.1,269.7 L689.3,271.6 L689.5,271.0 L689.7,270.5 L689.9,270.5 L690.1,270.9 L690.3,271.2 L690.5,270.4 L690.7,270.7 L690.9,271.2 L691.1,269.7 L691.3,270.2 L691.5,270.3 L691.7,270.7 L691.9,270.9 L692.1,271.2 L692.3,270.8 L692.5,270.8 L692.7,271.3 L692.9,271.6 L693.1,270.6 L693.3,270.2 L693.5,270.4 L693.7,269.8 L693.9,269.8 L694.1,270.4 L694.3,269.7 L694.5,270.5 L694.7,271.1 L694.9,272.2 L695.1,271.7 L695.3,271.6 L695.5,271.0 L695.7,271.8 L695.9,271.0 L696.1,270.5 L696.3,271.1 L696.5,270.2 L696.7,269.8 L696.9,270.1 L697.1,270.5 L697.3,270.2 L697.5,270.1 L697.7,270.5 L697.9,271.1 L698.1,268.7 L698.3,266.3 L698.5,263.2 L698.7,260.7 L698.9,258.9 L699.1,262.5 L699.3,257.2 L699.5,250.2 L699.7,243.2 L699.9,238.2 L700.1,236.5 L700.3,239.3 L700.5,242.7 L700.7,244.1 L700.9,239.2 L701.1,241.3 L701.3,230.4 L701.5,252.9 L701.7,252.7 L701.9,236.9 L702.1,239.9 L702.3,254.0 L702.5,260.5 L702.7,258.3 L702.9,258.1 L703.1,260.3 L703.3,254.2 L703.5,243.1 L703.7,237.0 L703.9,230.8 L704.1,237.3 L704.3,244.7 L704.5,254.6 L704.7,252.6 L704.9,251.8 L705.1,249.8 L705.3,257.3 L705.5,256.3 L705.7,260.8 L705.9,256.7 L706.1,256.0 L706.3,253.1 L706.5,255.9 L706.7,250.2 L706.9,255.0 L707.1,260.5 L707.3,259.0 L707.5,255.7 L707.7,249.7 L707.9,253.4 L708.1,254.7 L708.3,249.9 L708.5,247.9 L708.7,245.0 L708.9,243.7 L709.1,247.4 L709.3,252.3 L709.5,255.0 L709.7,257.2 L709.9,253.8 L710.1,255.6 L710.3,252.5 L710.5,254.9 L710.7,261.5 L710.9,258.7 L711.1,257.0 L711.3,258.1 L711.5,263.3 L711.7,263.6 L711.9,265.5 L712.1,264.6 L712.3,265.6 L712.5,264.0 L712.7,265.0 L712.9,265.4 L713.1,267.0 L713.3,267.8 L713.5,269.2 L713.7,270.4 L713.9,271.4 L714.1,271.0 L714.3,270.1 L714.5,269.7 L714.7,271.2 L714.9,271.4 L715.1,269.4 L715.3,270.4 L715.5,269.3 L715.7,269.4 L715.9,271.1 L716.1,270.7 L716.3,271.2 L716.5,271.3 L716.7,270.6 L716.9,270.0 L717.1,268.1 L717.3,270.5 L717.5,271.1 L717.7,270.7 L717.9,270.5 L718.1,270.7 L718.3,270.2 L718.5,270.4 L718.7,269.8 L718.9,269.8 L719.1,270.2 L719.3,270.7 L719.5,270.7 L719.7,269.9 L719.9,268.7 L720.1,267.7 L720.3,267.4 L720.5,267.3 L720.7,267.3 L720.9,266.8 L721.1,267.1 L721.3,266.6 L721.5,266.6 L721.7,267.3 L721.9,267.5 L722.1,267.6 L722.3,266.2 L722.5,266.3 L722.7,267.0 L722.9,265.5 L723.1,266.4 L723.3,266.7 L723.5,265.9 L723.7,266.3 L723.9,266.8 L724.1,267.0 L724.3,266.4 L724.5,265.9 L724.7,264.8 L724.9,266.1 L725.1,266.4 L725.3,265.5 L725.5,265.8 L725.7,266.3 L725.9,266.0 L726.1,254.7 L726.3,244.7 L726.5,240.8 L726.7,247.7 L726.9,250.5 L727.1,245.4 L727.3,249.9 L727.5,254.0 L727.7,253.7 L727.9,246.6 L728.1,244.8 L728.3,235.5 L728.5,251.6 L728.7,244.4 L728.9,250.9 L729.1,240.3 L729.3,239.0 L729.5,239.4 L729.7,232.2 L729.9,234.5 L730.1,240.2 L730.3,254.9 L730.5,257.2 L730.7,257.6 L730.9,259.2 L731.1,262.0 L731.3,267.7 L731.5,270.9 L731.7,271.0 L731.9,270.9 L732.1,271.0 L732.3,270.8 L732.5,270.3 L732.7,270.1 L732.9,271.2 L733.1,271.5 L733.3,271.9 L733.5,270.7 L733.7,271.0 L733.9,270.3 L734.1,270.6 L734.3,270.8 L734.5,269.3 L734.7,270.7 L734.9,270.4 L735.1,270.8 L735.3,269.5 L735.5,270.1 L735.7,270.7 L735.9,271.3 L736.1,270.4 L736.3,270.8 L736.5,270.5 L736.7,270.5 L736.9,270.3 L737.1,270.1 L737.3,269.4 L737.5,270.8 L737.7,270.5 L737.9,271.0 L738.1,270.8 L738.3,271.1 L738.5,271.5 L738.7,271.2 L738.9,271.0 L739.1,271.3 L739.3,270.4 L739.5,269.2 L739.7,269.9 L739.9,270.7 L740.1,270.6 L740.3,270.2 L740.5,271.1 L740.7,270.8 L740.9,270.7 L741.1,271.8 L741.3,271.5 L741.5,270.2 L741.7,270.8 L741.9,270.7 L742.1,271.6 L742.3,271.0 L742.5,271.4 L742.7,270.0 L742.9,270.8 L743.1,271.2 L743.3,267.2 L743.5,270.0 L743.7,270.0 L743.9,271.0 L744.1,270.0 L744.3,269.7 L744.5,270.1 L744.7,271.2 L744.9,271.5 L745.1,272.1 L745.3,271.7 L745.5,270.6 L745.7,270.2 L745.9,270.9 L746.1,271.0 L746.3,270.9 L746.5,271.3 L746.7,270.6 L746.9,270.2 L747.1,270.6 L747.3,271.2 L747.5,271.1 L747.7,271.1 L747.9,269.9 L748.1,270.7 L748.3,271.1 L748.5,271.3 L748.7,271.5 L748.9,270.9 L749.1,271.0 L749.3,270.3 L749.5,270.3 L749.7,269.9 L749.9,270.0 L750.1,270.9 L750.3,270.6 L750.5,268.2 L750.7,270.2 L750.9,270.8 L751.1,271.6 L751.3,270.0 L751.5,270.2 L751.7,270.8 L751.9,270.4 L752.1,271.1 L752.3,270.8 L752.5,270.3 L752.7,271.1 L752.9,270.3 L753.1,270.9 L753.3,271.4 L753.5,270.7 L753.7,270.5 L753.9,270.7 L754.1,270.5 L754.3,270.6 L754.5,270.2 L754.7,271.0 L754.9,270.9 L755.1,271.6 L755.3,271.4 L755.5,271.6 L755.7,271.3 L755.9,270.1 L756.1,270.7 L756.3,271.0 L756.5,271.7 L756.7,271.3 L756.9,269.6 L757.1,269.7 L757.3,270.5 L757.5,270.3 L757.7,270.7 L757.9,270.3 L758.1,269.1 L758.3,268.0 L758.5,269.1 L758.7,270.3 L758.9,271.3 L759.1,270.2 L759.3,269.9 L759.5,270.2 L759.7,271.3 L759.9,270.5 L760.1,271.1 L760.3,270.9 L760.5,270.6 L760.7,269.9 L760.9,271.5 L761.1,270.5 L761.3,270.6 L761.5,270.8 L761.7,270.9 L761.9,269.8 L762.1,269.9 L762.3,269.9 L762.5,270.3 L762.7,270.2 L762.9,270.8 L763.1,270.7 L763.3,270.6 L763.5,270.2 L763.7,270.4 L763.9,270.8 L764.1,271.6 L764.3,271.6 L764.5,271.2 L764.7,271.5 L764.9,271.3 L765.1,270.8 L765.3,271.1 L765.5,271.0 L765.7,269.8 L765.9,269.8 L766.1,269.8 L766.3,269.9 L766.5,270.7 L766.7,270.2 L766.9,269.3 L767.1,270.3 L767.3,270.5 L767.5,269.5 L767.7,269.4 L767.9,270.2 L768.1,269.4 L768.3,269.6 L768.5,270.5 L768.7,270.8 L768.9,270.0 L769.1,269.9 L769.3,270.9 L769.5,271.4 L769.7,270.3 L769.9,270.6 L770.1,270.9 L770.3,271.6 L770.5,271.6 L770.7,271.2 L770.9,269.8 L771.1,270.5 L771.3,270.3 L771.5,270.9 L771.7,269.7 L771.9,270.7 L772.1,270.5 L772.3,271.2 L772.5,270.5 L772.7,271.6 L772.9,270.8 L773.1,270.4 L773.3,270.6 L773.5,270.4 L773.7,270.3 L773.9,269.4 L774.1,270.3 L774.3,270.1 L774.5,270.9 L774.7,270.5 L774.9,270.6 L775.1,270.6 L775.3,270.6 L775.5,270.5 L775.7,271.1 L775.9,271.1 L776.1,270.2 L776.3,270.6 L776.5,269.8 L776.7,269.5 L776.9,269.9 L777.1,271.2 L777.3,270.4 L777.5,269.9 L777.7,270.0 L777.9,269.5 L778.1,270.8 L778.3,271.2 L778.5,271.3 L778.7,271.0 L778.9,270.3 L779.1,270.2 L779.3,271.0 L779.5,271.4 L779.7,271.5 L779.9,270.7 L780.1,270.0 L780.3,269.9 L780.5,270.8 L780.7,271.8 L780.9,271.5 L781.1,270.9 L781.3,271.6 L781.5,270.6 L781.7,270.2 L781.9,270.5 L782.1,269.9 L782.3,270.3 L782.5,271.4 L782.7,270.3 L782.9,270.4 L783.1,270.0 L783.3,270.8 L783.5,271.2 L783.7,270.4 L783.9,270.5 L784.1,270.4 L784.3,270.4 L784.5,271.0 L784.7,272.1 L784.9,271.2 L785.1,270.8 L785.3,270.8 L785.5,270.8 L785.7,271.2 L785.9,270.8 L786.1,270.4 L786.3,271.3 L786.5,269.7 L786.7,270.1 L786.9,268.9 L787.1,269.3 L787.3,270.1 L787.5,271.5 L787.7,271.3 L787.9,270.5 L788.1,270.9 L788.3,270.1 L788.5,269.8 L788.7,270.7 L788.9,271.3 L789.1,270.7 L789.3,271.1 L789.5,271.2 L789.7,271.2 L789.9,272.1 L790.1,271.0 L790.3,270.9 L790.5,271.3 L790.7,271.7 L790.9,270.8 L791.1,269.8 L791.3,270.6 L791.5,269.9 L791.7,269.9 L791.9,270.5 L792.1,271.1 L792.3,269.9 L792.5,270.1 L792.7,271.8 L792.9,272.2 L793.1,271.1 L793.3,271.4 L793.5,270.4 L793.7,270.7 L793.9,270.3 L794.1,270.7 L794.3,271.3 L794.5,271.2 L794.7,270.8 L794.9,270.4 L795.1,269.2 L795.3,268.9 L795.5,270.0 L795.7,270.3 L795.9,271.5 L796.1,270.4 L796.3,270.6 L796.5,270.9 L796.7,269.9 L796.9,270.8 L797.1,270.8 L797.3,269.9 L797.5,269.5 L797.7,270.5 L797.9,271.4 L798.1,270.8 L798.3,271.1 L798.5,270.7 L798.7,271.3 L798.9,270.4 L799.1,270.2 L799.3,269.6 L799.5,269.8 L799.7,269.9 L799.9,270.1 L800.1,271.0 L800.3,270.4 L800.5,270.5 L800.7,269.5 L800.9,271.1 L801.1,270.9 L801.3,270.8 L801.5,270.2 L801.7,270.7 L801.9,270.2 L802.1,271.0 L802.3,270.7 L802.5,271.3 L802.7,270.6 L802.9,270.6 L803.1,270.3 L803.3,270.2 L803.5,269.9 L803.7,271.2 L803.9,270.0 L804.1,269.8 L804.3,269.7 L804.5,270.6 L804.7,271.0 L804.9,271.3 L805.1,270.6 L805.3,270.0 L805.5,270.7 L805.7,269.9 L805.9,270.7 L806.1,270.5 L806.3,270.6 L806.5,271.3 L806.7,270.1 L806.9,271.0 L807.1,270.6 L807.3,270.6 L807.5,270.8 L807.7,271.1 L807.9,270.3 L808.1,269.7 L808.3,270.6 L808.5,269.9 L808.7,270.1 L808.9,269.8 L809.1,270.4 L809.3,269.9 L809.5,269.1 L809.7,270.5 L809.9,270.3 L810.1,272.0 L810.3,270.6 L810.5,270.3 L810.7,270.4 L810.9,270.2 L811.1,270.7 L811.3,271.3 L811.5,271.0 L811.7,271.2 L811.9,271.5 L812.1,270.7 L812.3,271.1 L812.5,271.0 L812.7,271.1 L812.9,269.8 L813.1,270.1 L813.3,270.8 L813.5,270.5 L813.7,270.3 L813.9,271.1 L814.1,270.5 L814.3,271.3 L814.5,271.2 L814.7,270.9 L814.9,271.5 L815.1,271.1 L815.3,270.6 L815.5,269.5 L815.7,269.5 L815.9,270.9 L816.1,270.6 L816.3,269.7 L816.5,270.8 L816.7,269.9 L816.9,266.7 L817.1,260.8 L817.3,248.2 L817.5,245.3 L817.7,242.1 L817.9,245.5 L818.1,253.8 L818.3,245.4 L818.5,248.8 L818.7,245.7 L818.9,246.2 L819.1,253.5 L819.3,249.8 L819.5,254.3 L819.7,242.0 L819.9,243.8 L820.1,245.2 L820.3,241.2 L820.5,241.4 L820.7,245.2 L820.9,250.8 L821.1,255.7 L821.3,246.4 L821.5,245.3 L821.7,244.2 L821.9,245.2 L822.1,246.2 L822.3,241.6 L822.5,252.2 L822.7,254.1 L822.9,249.2 L823.1,245.3 L823.3,249.2 L823.5,248.0 L823.7,253.7 L823.9,246.1 L824.1,251.8 L824.3,252.9 L824.5,252.6 L824.7,254.5 L824.9,253.5 L825.1,255.6 L825.3,252.1 L825.5,251.9 L825.7,256.6 L825.9,255.9 L826.1,249.1 L826.3,258.1 L826.5,256.7 L826.7,248.6 L826.9,253.2 L827.1,253.0 L827.3,246.7 L827.5,240.8 L827.7,237.9 L827.9,246.1 L828.1,252.5 L828.3,247.9 L828.5,247.8 L828.7,244.6 L828.9,246.9 L829.1,249.2 L829.3,247.7 L829.5,250.1 L829.7,241.9 L829.9,234.7 L830.1,230.8 L830.3,243.0 L830.5,247.5 L830.7,247.8 L830.9,248.9 L831.1,249.6 L831.3,251.7 L831.5,247.5 L831.7,254.4 L831.9,252.9 L832.1,259.9 L832.3,257.2 L832.5,256.0 L832.7,258.4 L832.9,250.9 L833.1,257.1 L833.3,260.3 L833.5,259.9 L833.7,259.7 L833.9,258.3 L834.1,257.1 L834.3,262.0 L834.5,258.1 L834.7,258.8 L834.9,261.9 L835.1,264.1 L835.3,265.0 L835.5,266.2 L835.7,267.2 L835.9,267.2 L836.1,268.7 L836.3,269.8 L836.5,270.8 L836.7,270.8 L836.9,270.2 L837.1,269.9 L837.3,269.7 L837.5,269.8 L837.7,270.1 L837.9,269.5 L838.1,270.5 L838.3,270.1 L838.5,269.2 L838.7,270.4 L838.9,270.2 L839.1,270.6 L839.3,270.6 L839.5,271.4 L839.7,270.1 L839.9,269.8 L840.1,270.5 L840.3,271.1 L840.5,270.2 L840.7,270.7 L840.9,270.4 L841.1,269.8 L841.3,269.2 L841.5,268.4 L841.7,269.1 L841.9,266.9 L842.1,266.0 L842.3,266.1 L842.5,265.3 L842.7,266.2 L842.9,266.4 L843.1,267.1 L843.3,260.2 L843.5,246.2 L843.7,232.2 L843.9,246.2 L844.1,260.2 L844.3,267.7 L844.5,267.1 L844.7,267.0 L844.9,266.6 L845.1,266.8 L845.3,266.8 L845.5,267.0 L845.7,268.0 L845.9,268.4 L846.1,268.3 L846.3,269.5 L846.5,270.1 L846.7,269.8 L846.9,269.8 L847.1,270.7 L847.3,270.6 L847.5,270.5 L847.7,270.1 L847.9,270.0 L848.1,271.5 L848.3,270.8 L848.5,270.6 L848.7,271.1 L848.9,271.5 L849.1,271.2 L849.3,271.4 L849.5,270.0 L849.7,270.1 L849.9,270.1 L850.1,270.4 L850.3,271.4 L850.5,272.0 L850.7,271.6 L850.9,271.5 L851.1,271.3 L851.3,270.4 L851.5,270.1 L851.7,270.9 L851.9,270.9 L852.1,271.8 L852.3,269.9 L852.5,270.4 L852.7,271.1 L852.9,271.0 L853.1,270.4 L853.3,270.1 L853.5,270.6 L853.7,269.5 L853.9,269.8 L854.1,270.3 L854.3,269.6 L854.5,270.6 L854.7,270.3 L854.9,270.3 L855.1,270.7 L855.3,270.8 L855.5,271.3 L855.7,270.8 L855.9,270.9 L856.1,271.9 L856.3,270.8 L856.5,270.1 L856.7,269.9 L856.9,269.5 L857.1,270.6 L857.3,271.0 L857.5,270.1 L857.7,270.3 L857.9,270.8 L858.1,267.2 L858.3,265.8 L858.5,262.1 L858.7,258.7 L858.9,260.1 L859.1,259.7 L859.3,255.1 L859.5,250.2 L859.7,243.1 L859.9,238.3 L860.1,239.1 L860.3,235.7 L860.5,233.6 L860.7,240.4 L860.9,243.7 L861.1,244.1 L861.3,245.1 L861.5,250.2 L861.7,247.6 L861.9,250.4 L862.1,249.1 L862.3,243.3 L862.5,244.4 L862.7,249.0 L862.9,248.4 L863.1,246.7 L863.3,247.2 L863.5,244.2 L863.7,253.3 L863.9,245.2 L864.1,251.6 L864.3,246.2 L864.5,253.9 L864.7,244.7 L864.9,242.2 L865.1,241.2 L865.3,237.1 L865.5,241.0 L865.7,240.9 L865.9,245.4 L866.1,248.4 L866.3,252.2 L866.5,249.7 L866.7,246.1 L866.9,244.4 L867.1,250.4 L867.3,251.5 L867.5,255.2 L867.7,255.0 L867.9,252.8 L868.1,250.1 L868.3,247.7 L868.5,252.7 L868.7,257.2 L868.9,248.2 L869.1,251.5 L869.3,254.3 L869.5,253.7 L869.7,254.5 L869.9,252.5 L870.1,252.6 L870.3,258.5 L870.5,258.2 L870.7,255.0 L870.9,257.0 L871.1,254.8 L871.3,259.7 L871.5,254.5 L871.7,256.1 L871.9,262.0 L872.1,257.3 L872.3,261.3 L872.5,259.9 L872.7,259.7 L872.9,259.4 L873.1,259.0 L873.3,264.7 L873.5,263.5 L873.7,264.5 L873.9,264.3 L874.1,263.2 L874.3,258.1 L874.5,261.8 L874.7,265.0 L874.9,260.9 L875.1,264.1 L875.3,265.2 L875.5,266.5 L875.7,266.7 L875.9,267.9 L876.1,267.9 L876.3,270.4 L876.5,271.1 L876.7,270.3 L876.9,269.7 L877.1,270.1 L877.3,271.6 L877.5,270.4 L877.7,271.1 L877.9,271.4 L878.1,270.7 L878.3,270.8 L878.5,271.3 L878.7,270.9 L878.9,270.2 L879.1,270.8 L879.3,270.2 L879.5,270.4 L879.7,270.5 L879.9,270.8 L880.1,270.8 L880.3,270.9 L880.5,271.0 L880.7,270.5 L880.9,270.3 L881.1,270.2 L881.3,271.0 L881.5,270.3 L881.7,270.4 L881.9,270.7 L882.1,269.8 L882.3,271.3 L882.5,270.6 L882.7,271.3 L882.9,269.9 L883.1,269.7 L883.3,270.5 L883.5,270.6 L883.7,270.3 L883.9,271.6 L884.1,270.9 L884.3,271.6 L884.5,270.3 L884.7,269.6 L884.9,270.5 L885.1,269.1 L885.3,266.6 L885.5,267.4 L885.7,269.1 L885.9,271.1 L886.1,270.9 L886.3,269.5 L886.5,269.9 L886.7,270.1 L886.9,270.2 L887.1,271.1 L887.3,271.4 L887.5,270.5 L887.7,270.3 L887.9,270.3 L888.1,270.2 L888.3,271.3 L888.5,270.4 L888.7,270.5 L888.9,271.5 L889.1,271.1 L889.3,270.0 L889.5,270.9 L889.7,269.7 L889.9,268.6 L890.1,268.0 L890.3,269.7 L890.5,271.0 L890.7,269.8 L890.9,271.3 L891.1,271.2 L891.3,269.6 L891.5,270.2 L891.7,270.2 L891.9,270.7 L892.1,270.4 L892.3,271.0 L892.5,270.4 L892.7,270.5 L892.9,270.7 L893.1,270.2 L893.3,269.5 L893.5,270.8 L893.7,270.9 L893.9,270.0 L894.1,269.5 L894.3,270.4 L894.5,270.2 L894.7,269.1 L894.9,266.6 L895.1,267.4 L895.3,269.1 L895.5,270.4 L895.7,271.0 L895.9,270.8 L896.1,271.1 L896.3,271.0 L896.5,270.9 L896.7,271.3 L896.9,270.2 L897.1,270.3 L897.3,269.7 L897.5,271.2 L897.7,271.1 L897.9,270.8 L898.1,268.2 L898.3,270.5 L898.5,270.8 L898.7,270.8 L898.9,270.2 L899.1,270.7 L899.3,269.9 L899.5,270.5 L899.7,271.5 L899.9,271.1 L900.1,269.2 L900.3,268.6 L900.5,268.0 L900.7,268.0 L900.9,267.7 L901.1,266.7 L901.3,265.9 L901.5,267.5 L901.7,266.1 L901.9,264.5 L902.1,263.7 L902.3,266.1 L902.5,267.5 L902.7,268.2 L902.9,266.9 L903.1,266.9 L903.3,265.5 L903.5,265.8 L903.7,266.4 L903.9,268.5 L904.1,267.9 L904.3,266.9 L904.5,267.8 L904.7,268.5 L904.9,267.6 L905.1,267.8 L905.3,268.3 L905.5,267.9 L905.7,267.9 L905.9,267.5 L906.1,267.5 L906.3,267.4 L906.5,267.1 L906.7,267.0 L906.9,263.7 L907.1,267.5 L907.3,267.5 L907.5,267.4 L907.7,268.8 L907.9,268.7 L908.1,268.0 L908.3,267.9 L908.5,267.1 L908.7,267.4 L908.9,267.1 L909.1,266.8 L909.3,267.1 L909.5,267.7 L909.7,268.7 L909.9,267.5 L910.1,267.7 L910.3,268.0 L910.5,267.6 L910.7,268.1 L910.9,268.1 L911.1,268.1 L911.3,268.8 L911.5,268.3 L911.7,267.9 L911.9,267.2 L912.1,267.4 L912.3,266.5 L912.5,266.5 L912.7,267.3 L912.9,267.2 L913.1,266.9 L913.3,267.5 L913.5,266.8 L913.7,265.1 L913.9,267.4 L914.1,265.0 L914.3,262.2 L914.5,260.8 L914.7,265.0 L914.9,267.5 L915.1,267.1 L915.3,268.1 L915.5,268.8 L915.7,268.9 L915.9,270.9 L916.1,271.5 L916.3,271.6 L916.5,271.5 L916.7,270.4 L916.9,269.3 L917.1,270.2 L917.3,270.5 L917.5,270.9 L917.7,271.1 L917.9,271.5 L918.1,270.3 L918.3,270.8 L918.5,270.8 L918.7,270.5 L918.9,270.5 L919.1,270.6 L919.3,270.7 L919.5,271.7 L919.7,270.9 L919.9,270.6 L920.1,270.3 L920.3,271.1 L920.5,266.4 L920.7,270.2 L920.9,270.3 L921.1,271.5 L921.3,270.7 L921.5,271.9 L921.7,271.0 L921.9,271.2 L922.1,270.6 L922.3,270.6 L922.5,269.9 L922.7,270.4 L922.9,270.4 L923.1,271.1 L923.3,271.1 L923.5,271.9 L923.7,271.1 L923.9,271.5 L924.1,270.7 L924.3,270.5 L924.5,269.7 L924.7,270.0 L924.9,270.1 L925.1,269.5 L925.3,270.1 L925.5,269.7 L925.7,269.6 L925.9,269.3 L926.1,269.9 L926.3,270.0 L926.5,270.6 L926.7,269.9 L926.9,271.1 L927.1,271.1 L927.3,270.8 L927.5,270.6 L927.7,270.4 L927.9,270.3 L928.1,270.4 L928.3,268.5 L928.5,268.9 L928.7,270.4 L928.9,270.8 L929.1,270.1 L929.3,269.3 L929.5,269.1 L929.7,268.0 L929.9,269.1 L930.1,270.2 L930.3,269.4 L930.5,270.9 L930.7,270.7 L930.9,271.3 L931.1,271.4 L931.3,271.0 L931.5,270.6 L931.7,269.8 L931.9,271.2 L932.1,270.6 L932.3,270.1 L932.5,270.0 L932.7,271.3 L932.9,270.9 L933.1,269.9 L933.3,270.6 L933.5,270.4 L933.7,270.2 L933.9,270.1 L934.1,271.5 L934.3,271.1 L934.5,271.1 L934.7,270.8 L934.9,270.2 L935.1,270.2 L935.3,270.1 L935.5,270.2 L935.7,270.2 L935.9,270.4 L936.1,269.7 L936.3,269.8 L936.5,270.8 L936.7,270.8 L936.9,271.3 L937.1,270.5 L937.3,270.5 L937.5,271.2 L937.7,269.3 L937.9,270.5 L938.1,271.1 L938.3,271.0 L938.5,268.9 L938.7,266.5 L938.9,265.7 L939.1,266.8 L939.3,260.5 L939.5,260.3 L939.7,259.6 L939.9,253.9 L940.1,262.4 L940.3,257.0 L940.5,257.5 L940.7,252.1 L940.9,245.4 L941.1,247.0 L941.3,245.9 L941.5,246.8 L941.7,247.0 L941.9,246.5 L942.1,247.1 L942.3,248.8 L942.5,254.3 L942.7,251.5 L942.9,256.9 L943.1,254.1 L943.3,254.9 L943.5,252.4 L943.7,248.2 L943.9,251.2 L944.1,250.1 L944.3,253.4 L944.5,256.0 L944.7,252.8 L944.9,254.5 L945.1,259.0 L945.3,256.4 L945.5,256.0 L945.7,254.0 L945.9,253.2 L946.1,257.0 L946.3,253.5 L946.5,261.4 L946.7,251.9 L946.9,258.4 L947.1,255.1 L947.3,250.9 L947.5,255.2 L947.7,255.0 L947.9,254.1 L948.1,253.7 L948.3,255.1 L948.5,252.3 L948.7,255.9 L948.9,257.2 L949.1,257.2 L949.3,256.8 L949.5,259.6 L949.7,259.2 L949.9,259.5 L950.1,255.0 L950.3,257.7 L950.5,258.3 L950.7,251.2 L950.9,254.8 L951.1,254.2 L951.3,264.7 L951.5,259.5 L951.7,257.0 L951.9,256.4 L952.1,257.3 L952.3,259.1 L952.5,262.9 L952.7,257.7 L952.9,259.6 L953.1,263.8 L953.3,256.7 L953.5,254.7 L953.7,270.9 L953.70,272.30 L81.30,272.30 Z" fill="#dfeaf9" fill-opacity="0.85"/>
 <path d="M81.3,269.3 L81.5,268.9 L81.7,266.3 L81.9,263.2 L82.1,261.7 L82.3,266.3 L82.5,270.0 L82.7,269.0 L82.9,270.1 L83.1,270.5 L83.3,269.5 L83.5,269.3 L83.7,269.0 L83.9,268.9 L84.1,268.8 L84.3,268.4 L84.5,269.1 L84.7,269.2 L84.9,269.5 L85.1,269.8 L85.3,269.9 L85.5,269.3 L85.7,269.2 L85.9,268.5 L86.1,269.0 L86.3,269.6 L86.5,270.2 L86.7,269.1 L86.9,268.3 L87.1,268.7 L87.3,268.7 L87.5,269.4 L87.7,269.8 L87.9,269.8 L88.1,270.3 L88.3,269.5 L88.5,270.4 L88.7,271.1 L88.9,270.5 L89.1,269.1 L89.3,269.1 L89.5,268.9 L89.7,268.8 L89.9,268.8 L90.1,268.6 L90.3,268.7 L90.5,268.6 L90.7,270.1 L90.9,270.3 L91.1,268.7 L91.3,268.9 L91.5,268.8 L91.7,267.1 L91.9,269.6 L92.1,270.7 L92.3,270.4 L92.5,270.3 L92.7,270.2 L92.9,269.4 L93.1,270.5 L93.3,269.9 L93.5,269.4 L93.7,269.0 L93.9,269.0 L94.1,269.2 L94.3,269.3 L94.5,269.4 L94.7,269.2 L94.9,269.0 L95.1,268.9 L95.3,268.4 L95.5,268.2 L95.7,269.2 L95.9,269.3 L96.1,269.4 L96.3,268.3 L96.5,268.3 L96.7,269.2 L96.9,268.6 L97.1,269.0 L97.3,269.4 L97.5,269.8 L97.7,269.4 L97.9,270.1 L98.1,269.4 L98.3,268.4 L98.5,268.6 L98.7,270.1 L98.9,270.2 L99.1,269.7 L99.3,269.6 L99.5,269.0 L99.7,270.5 L99.9,269.3 L100.1,269.6 L100.3,269.2 L100.5,269.1 L100.7,268.5 L100.9,269.9 L101.1,269.5 L101.3,270.1 L101.5,270.7 L101.7,270.2 L101.9,269.6 L102.1,269.0 L102.3,270.7 L102.5,269.0 L102.7,269.6 L102.9,268.8 L103.1,268.2 L103.3,268.2 L103.5,270.4 L103.7,270.1 L103.9,269.8 L104.1,268.8 L104.3,266.7 L104.5,262.5 L104.7,263.9 L104.9,259.8 L105.1,254.9 L105.3,254.5 L105.5,249.4 L105.7,251.8 L105.9,250.4 L106.1,249.8 L106.3,246.0 L106.5,241.8 L106.7,246.9 L106.9,252.8 L107.1,246.0 L107.3,240.7 L107.5,244.9 L107.7,239.6 L107.9,238.1 L108.1,236.5 L108.3,241.0 L108.5,239.1 L108.7,241.2 L108.9,242.3 L109.1,242.3 L109.3,241.6 L109.5,242.8 L109.7,240.7 L109.9,238.8 L110.1,237.9 L110.3,240.9 L110.5,252.0 L110.7,247.7 L110.9,245.1 L111.1,247.6 L111.3,250.1 L111.5,248.9 L111.7,248.9 L111.9,239.0 L112.1,251.0 L112.3,249.3 L112.5,248.1 L112.7,259.0 L112.9,258.7 L113.1,250.5 L113.3,255.4 L113.5,251.8 L113.7,252.2 L113.9,255.3 L114.1,256.8 L114.3,253.5 L114.5,244.9 L114.7,237.6 L114.9,218.7 L115.1,225.1 L115.3,237.8 L115.5,245.7 L115.7,241.2 L115.9,250.3 L116.1,249.5 L116.3,249.4 L116.5,252.7 L116.7,252.2 L116.9,252.8 L117.1,251.9 L117.3,256.5 L117.5,260.8 L117.7,255.4 L117.9,256.7 L118.1,257.3 L118.3,261.4 L118.5,254.5 L118.7,251.6 L118.9,253.8 L119.1,257.5 L119.3,256.5 L119.5,260.0 L119.7,267.8 L119.9,263.6 L120.1,262.7 L120.3,264.5 L120.5,266.5 L120.7,265.1 L120.9,265.8 L121.1,266.3 L121.3,268.1 L121.5,268.9 L121.7,269.2 L121.9,269.3 L122.1,268.5 L122.3,270.1 L122.5,268.2 L122.7,268.3 L122.9,269.7 L123.1,268.5 L123.3,267.9 L123.5,267.5 L123.7,268.2 L123.9,268.5 L124.1,267.5 L124.3,267.8 L124.5,267.5 L124.7,267.9 L124.9,269.1 L125.1,268.8 L125.3,269.0 L125.5,268.7 L125.7,268.6 L125.9,268.7 L126.1,269.1 L126.3,268.6 L126.5,269.3 L126.7,269.2 L126.9,269.2 L127.1,268.8 L127.3,268.0 L127.5,267.0 L127.7,266.6 L127.9,266.9 L128.1,266.7 L128.3,265.2 L128.5,266.5 L128.7,262.6 L128.9,263.9 L129.1,265.9 L129.3,265.5 L129.5,262.8 L129.7,249.4 L129.9,235.9 L130.1,229.3 L130.3,248.8 L130.5,260.6 L130.7,259.6 L130.9,256.6 L131.1,251.9 L131.3,233.9 L131.5,215.9 L131.7,234.0 L131.9,252.1 L132.1,261.4 L132.3,259.0 L132.5,259.3 L132.7,258.7 L132.9,261.0 L133.1,256.0 L133.3,257.1 L133.5,260.6 L133.7,261.2 L133.9,256.3 L134.1,260.7 L134.3,248.9 L134.5,229.3 L134.7,235.9 L134.9,249.1 L135.1,262.8 L135.3,262.4 L135.5,261.3 L135.7,261.9 L135.9,263.7 L136.1,263.4 L136.3,264.6 L136.5,264.9 L136.7,265.7 L136.9,267.4 L137.1,267.5 L137.3,267.2 L137.5,268.3 L137.7,268.0 L137.9,268.0 L138.1,268.2 L138.3,269.9 L138.5,269.3 L138.7,269.5 L138.9,268.8 L139.1,270.0 L139.3,268.8 L139.5,269.7 L139.7,269.1 L139.9,269.2 L140.1,268.9 L140.3,269.8 L140.5,266.4 L140.7,270.1 L140.9,270.4 L141.1,269.8 L141.3,269.6 L141.5,269.9 L141.7,269.7 L141.9,269.9 L142.1,270.2 L142.3,269.7 L142.5,269.5 L142.7,270.3 L142.9,269.6 L143.1,269.2 L143.3,269.5 L143.5,269.6 L143.7,270.0 L143.9,270.6 L144.1,270.6 L144.3,270.1 L144.5,269.5 L144.7,269.9 L144.9,269.1 L145.1,268.3 L145.3,266.5 L145.5,264.0 L145.7,260.3 L145.9,259.3 L146.1,258.5 L146.3,256.2 L146.5,262.7 L146.7,256.9 L146.9,247.5 L147.1,243.0 L147.3,240.9 L147.5,235.1 L147.7,240.4 L147.9,245.1 L148.1,243.8 L148.3,248.8 L148.5,246.1 L148.7,245.1 L148.9,229.4 L149.1,207.0 L149.3,214.2 L149.5,228.2 L149.7,241.8 L149.9,237.3 L150.1,239.3 L150.3,240.8 L150.5,241.1 L150.7,253.2 L150.9,235.5 L151.1,230.2 L151.3,241.0 L151.5,254.5 L151.7,238.3 L151.9,234.3 L152.1,232.2 L152.3,235.0 L152.5,243.2 L152.7,246.9 L152.9,248.9 L153.1,243.7 L153.3,241.5 L153.5,242.7 L153.7,241.8 L153.9,247.8 L154.1,242.5 L154.3,246.1 L154.5,246.6 L154.7,240.1 L154.9,242.5 L155.1,240.7 L155.3,234.7 L155.5,245.8 L155.7,244.4 L155.9,253.1 L156.1,240.2 L156.3,251.7 L156.5,257.2 L156.7,246.1 L156.9,240.8 L157.1,242.7 L157.3,246.9 L157.5,251.3 L157.7,254.0 L157.9,255.7 L158.1,245.6 L158.3,248.3 L158.5,249.3 L158.7,249.9 L158.9,255.0 L159.1,253.3 L159.3,256.4 L159.5,265.5 L159.7,261.3 L159.9,256.6 L160.1,260.4 L160.3,258.7 L160.5,262.4 L160.7,262.6 L160.9,263.4 L161.1,264.1 L161.3,265.1 L161.5,266.9 L161.7,267.1 L161.9,268.5 L162.1,270.1 L162.3,270.1 L162.5,270.5 L162.7,269.8 L162.9,270.8 L163.1,270.4 L163.3,270.6 L163.5,270.4 L163.7,270.0 L163.9,269.9 L164.1,270.3 L164.3,270.0 L164.5,271.7 L164.7,270.5 L164.9,270.4 L165.1,270.5 L165.3,269.0 L165.5,270.7 L165.7,270.1 L165.9,271.4 L166.1,270.6 L166.3,270.4 L166.5,269.7 L166.7,270.6 L166.9,271.3 L167.1,270.6 L167.3,270.5 L167.5,269.3 L167.7,269.8 L167.9,270.0 L168.1,270.2 L168.3,270.3 L168.5,270.8 L168.7,268.4 L168.9,271.9 L169.1,270.7 L169.3,271.0 L169.5,270.7 L169.7,270.8 L169.9,271.1 L170.1,271.0 L170.3,271.3 L170.5,270.5 L170.7,270.7 L170.9,271.4 L171.1,270.4 L171.3,270.6 L171.5,271.3 L171.7,271.2 L171.9,269.8 L172.1,270.3 L172.3,271.0 L172.5,270.6 L172.7,270.2 L172.9,270.1 L173.1,270.5 L173.3,270.2 L173.5,270.5 L173.7,271.5 L173.9,270.1 L174.1,269.1 L174.3,270.1 L174.5,269.5 L174.7,270.6 L174.9,271.0 L175.1,270.3 L175.3,270.0 L175.5,270.4 L175.7,269.5 L175.9,269.2 L176.1,269.6 L176.3,271.2 L176.5,271.3 L176.7,270.8 L176.9,271.4 L177.1,270.0 L177.3,270.0 L177.5,271.3 L177.7,269.6 L177.9,269.8 L178.1,269.9 L178.3,270.6 L178.5,270.9 L178.7,271.0 L178.9,270.7 L179.1,270.6 L179.3,271.5 L179.5,271.9 L179.7,272.2 L179.9,271.0 L180.1,270.7 L180.3,270.0 L180.5,270.0 L180.7,269.4 L180.9,270.1 L181.1,271.2 L181.3,271.4 L181.5,270.1 L181.7,270.4 L181.9,271.0 L182.1,271.2 L182.3,271.0 L182.5,270.3 L182.7,270.5 L182.9,271.5 L183.1,270.9 L183.3,271.4 L183.5,270.5 L183.7,270.1 L183.9,271.1 L184.1,271.0 L184.3,270.0 L184.5,270.2 L184.7,270.1 L184.9,269.8 L185.1,270.8 L185.3,270.0 L185.5,270.4 L185.7,271.5 L185.9,272.2 L186.1,270.7 L186.3,271.6 L186.5,271.0 L186.7,270.5 L186.9,271.7 L187.1,271.6 L187.3,271.4 L187.5,270.7 L187.7,270.0 L187.9,269.9 L188.1,270.6 L188.3,270.3 L188.5,271.2 L188.7,269.2 L188.9,271.0 L189.1,271.1 L189.3,270.5 L189.5,271.3 L189.7,271.4 L189.9,270.4 L190.1,270.1 L190.3,269.6 L190.5,270.8 L190.7,269.3 L190.9,270.5 L191.1,270.1 L191.3,270.7 L191.5,270.3 L191.7,269.3 L191.9,270.1 L192.1,271.4 L192.3,270.2 L192.5,269.7 L192.7,270.2 L192.9,269.8 L193.1,269.9 L193.3,270.0 L193.5,270.0 L193.7,269.9 L193.9,269.9 L194.1,270.2 L194.3,270.2 L194.5,270.6 L194.7,270.6 L194.9,269.9 L195.1,270.8 L195.3,270.6 L195.5,271.0 L195.7,270.5 L195.9,270.9 L196.1,271.2 L196.3,270.9 L196.5,270.9 L196.7,271.9 L196.9,271.0 L197.1,270.9 L197.3,271.3 L197.5,271.2 L197.7,271.5 L197.9,270.5 L198.1,271.1 L198.3,270.6 L198.5,271.0 L198.7,270.7 L198.9,271.0 L199.1,270.6 L199.3,270.2 L199.5,270.0 L199.7,270.5 L199.9,270.6 L200.1,270.7 L200.3,271.6 L200.5,271.5 L200.7,270.9 L200.9,269.5 L201.1,271.7 L201.3,266.5 L201.5,262.2 L201.7,260.0 L201.9,266.5 L202.1,270.0 L202.3,270.2 L202.5,270.1 L202.7,270.7 L202.9,271.9 L203.1,271.1 L203.3,271.3 L203.5,270.8 L203.7,270.0 L203.9,269.2 L204.1,269.6 L204.3,269.4 L204.5,270.5 L204.7,271.0 L204.9,271.8 L205.1,271.6 L205.3,271.3 L205.5,271.3 L205.7,270.1 L205.9,270.4 L206.1,270.9 L206.3,270.6 L206.5,270.4 L206.7,270.9 L206.9,271.4 L207.1,270.1 L207.3,270.4 L207.5,269.9 L207.7,270.1 L207.9,270.6 L208.1,270.5 L208.3,270.6 L208.5,270.8 L208.7,270.3 L208.9,270.3 L209.1,269.7 L209.3,269.9 L209.5,270.5 L209.7,271.3 L209.9,271.7 L210.1,271.0 L210.3,270.6 L210.5,271.1 L210.7,270.1 L210.9,270.5 L211.1,271.0 L211.3,271.3 L211.5,270.9 L211.7,270.7 L211.9,270.7 L212.1,270.4 L212.3,270.2 L212.5,271.1 L212.7,271.6 L212.9,271.0 L213.1,270.6 L213.3,270.6 L213.5,270.6 L213.7,271.5 L213.9,270.7 L214.1,270.3 L214.3,270.2 L214.5,270.5 L214.7,271.4 L214.9,270.9 L215.1,270.0 L215.3,270.8 L215.5,270.7 L215.7,270.4 L215.9,269.4 L216.1,270.1 L216.3,269.5 L216.5,270.7 L216.7,269.6 L216.9,269.6 L217.1,270.7 L217.3,270.0 L217.5,270.5 L217.7,270.2 L217.9,270.9 L218.1,270.8 L218.3,270.3 L218.5,270.2 L218.7,270.6 L218.9,270.1 L219.1,270.6 L219.3,269.8 L219.5,270.1 L219.7,270.4 L219.9,270.7 L220.1,270.2 L220.3,271.4 L220.5,270.0 L220.7,271.3 L220.9,270.8 L221.1,270.4 L221.3,270.2 L221.5,271.2 L221.7,270.9 L221.9,270.4 L222.1,270.4 L222.3,270.0 L222.5,270.4 L222.7,270.1 L222.9,271.0 L223.1,269.4 L223.3,270.3 L223.5,270.6 L223.7,270.5 L223.9,271.1 L224.1,270.5 L224.3,269.4 L224.5,270.2 L224.7,270.4 L224.9,270.5 L225.1,270.5 L225.3,270.5 L225.5,270.9 L225.7,270.5 L225.9,270.9 L226.1,270.5 L226.3,269.7 L226.5,270.4 L226.7,270.7 L226.9,270.4 L227.1,271.3 L227.3,271.8 L227.5,270.3 L227.7,270.1 L227.9,270.3 L228.1,271.1 L228.3,270.8 L228.5,271.3 L228.7,270.7 L228.9,270.9 L229.1,271.1 L229.3,270.3 L229.5,271.2 L229.7,271.7 L229.9,270.6 L230.1,271.7 L230.3,270.7 L230.5,270.9 L230.7,269.8 L230.9,270.1 L231.1,270.0 L231.3,270.1 L231.5,270.0 L231.7,270.4 L231.9,270.8 L232.1,271.9 L232.3,269.9 L232.5,270.7 L232.7,270.5 L232.9,270.4 L233.1,270.0 L233.3,270.1 L233.5,271.3 L233.7,271.1 L233.9,270.7 L234.1,270.7 L234.3,271.9 L234.5,271.0 L234.7,271.3 L234.9,270.1 L235.1,271.1 L235.3,271.1 L235.5,271.5 L235.7,271.1 L235.9,264.0 L236.1,250.2 L236.3,236.5 L236.5,250.2 L236.7,264.0 L236.9,270.3 L237.1,270.6 L237.3,271.1 L237.5,270.3 L237.7,270.8 L237.9,270.8 L238.1,270.9 L238.3,270.7 L238.5,270.8 L238.7,268.0 L238.9,263.7 L239.1,265.1 L239.3,268.0 L239.5,270.9 L239.7,270.3 L239.9,270.5 L240.1,270.6 L240.3,270.5 L240.5,270.7 L240.7,271.1 L240.9,270.9 L241.1,272.0 L241.3,270.9 L241.5,271.2 L241.7,270.6 L241.9,271.6 L242.1,271.3 L242.3,271.0 L242.5,271.4 L242.7,271.7 L242.9,271.2 L243.1,270.1 L243.3,271.1 L243.5,269.9 L243.7,270.3 L243.9,266.7 L244.1,270.4 L244.3,270.1 L244.5,271.1 L244.7,270.4 L244.9,269.5 L245.1,270.7 L245.3,269.8 L245.5,270.9 L245.7,266.9 L245.9,270.7 L246.1,270.6 L246.3,270.3 L246.5,270.4 L246.7,270.1 L246.9,269.1 L247.1,268.8 L247.3,267.8 L247.5,268.1 L247.7,266.7 L247.9,266.4 L248.1,265.9 L248.3,266.4 L248.5,266.0 L248.7,265.4 L248.9,265.0 L249.1,265.2 L249.3,266.3 L249.5,262.3 L249.7,266.5 L249.9,265.8 L250.1,266.2 L250.3,265.5 L250.5,266.2 L250.7,266.5 L250.9,266.5 L251.1,267.2 L251.3,266.9 L251.5,266.2 L251.7,266.0 L251.9,266.6 L252.1,266.5 L252.3,265.5 L252.5,265.5 L252.7,255.0 L252.9,238.5 L253.1,244.0 L253.3,255.0 L253.5,265.9 L253.7,266.4 L253.9,266.8 L254.1,266.3 L254.3,265.2 L254.5,264.6 L254.7,265.1 L254.9,263.3 L255.1,265.3 L255.3,266.2 L255.5,266.4 L255.7,266.6 L255.9,266.5 L256.1,266.7 L256.3,266.6 L256.5,266.9 L256.7,265.9 L256.9,264.8 L257.1,265.4 L257.3,266.9 L257.5,266.3 L257.7,267.1 L257.9,267.2 L258.1,268.8 L258.3,268.5 L258.5,269.2 L258.7,269.7 L258.9,271.2 L259.1,271.6 L259.3,271.5 L259.5,270.4 L259.7,271.1 L259.9,270.7 L260.1,270.5 L260.3,267.1 L260.5,269.4 L260.7,269.1 L260.9,270.0 L261.1,270.3 L261.3,270.5 L261.5,270.9 L261.7,271.0 L261.9,271.8 L262.1,271.6 L262.3,271.6 L262.5,271.0 L262.7,268.1 L262.9,270.7 L263.1,271.5 L263.3,270.9 L263.5,271.1 L263.7,270.2 L263.9,270.3 L264.1,270.6 L264.3,270.9 L264.5,271.2 L264.7,269.2 L264.9,266.4 L265.1,268.3 L265.3,265.9 L265.5,263.0 L265.7,253.2 L265.9,251.7 L266.1,254.9 L266.3,260.0 L266.5,256.7 L266.7,246.0 L266.9,236.9 L267.1,244.0 L267.3,249.1 L267.5,238.8 L267.7,227.6 L267.9,231.3 L268.1,238.6 L268.3,242.0 L268.5,253.4 L268.7,255.1 L268.9,247.2 L269.1,250.1 L269.3,242.6 L269.5,244.1 L269.7,251.1 L269.9,243.6 L270.1,239.6 L270.3,239.3 L270.5,228.5 L270.7,217.9 L270.9,228.4 L271.1,238.9 L271.3,251.0 L271.5,248.4 L271.7,239.2 L271.9,250.4 L272.1,251.1 L272.3,257.9 L272.5,250.2 L272.7,244.1 L272.9,253.6 L273.1,250.7 L273.3,243.6 L273.5,235.1 L273.7,237.4 L273.9,243.6 L274.1,250.7 L274.3,240.1 L274.5,231.5 L274.7,222.7 L274.9,231.5 L275.1,235.8 L275.3,240.1 L275.5,249.1 L275.7,238.0 L275.9,237.4 L276.1,242.0 L276.3,248.2 L276.5,256.6 L276.7,255.0 L276.9,244.5 L277.1,249.9 L277.3,254.6 L277.5,248.5 L277.7,246.3 L277.9,243.9 L278.1,242.9 L278.3,234.6 L278.5,215.3 L278.7,221.8 L278.9,235.0 L279.1,246.2 L279.3,247.0 L279.5,247.1 L279.7,244.0 L279.9,247.6 L280.1,244.5 L280.3,245.7 L280.5,250.0 L280.7,255.0 L280.9,257.9 L281.1,258.8 L281.3,258.7 L281.5,259.0 L281.7,252.3 L281.9,257.1 L282.1,259.3 L282.3,264.0 L282.5,265.8 L282.7,265.8 L282.9,268.0 L283.1,267.7 L283.3,268.6 L283.5,270.2 L283.7,270.5 L283.9,270.3 L284.1,270.1 L284.3,270.9 L284.5,270.0 L284.7,270.1 L284.9,270.0 L285.1,270.5 L285.3,269.7 L285.5,270.5 L285.7,269.8 L285.9,269.0 L286.1,269.6 L286.3,270.1 L286.5,269.5 L286.7,270.8 L286.9,270.9 L287.1,271.5 L287.3,270.3 L287.5,269.7 L287.7,270.5 L287.9,269.8 L288.1,270.5 L288.3,270.2 L288.5,270.2 L288.7,270.1 L288.9,269.5 L289.1,270.1 L289.3,270.1 L289.5,270.6 L289.7,270.3 L289.9,270.7 L290.1,269.6 L290.3,270.7 L290.5,271.2 L290.7,269.9 L290.9,270.1 L291.1,270.1 L291.3,270.7 L291.5,270.7 L291.7,270.9 L291.9,270.5 L292.1,270.7 L292.3,270.3 L292.5,270.3 L292.7,270.6 L292.9,269.9 L293.1,270.9 L293.3,270.8 L293.5,270.2 L293.7,268.4 L293.9,269.9 L294.1,270.7 L294.3,269.4 L294.5,270.6 L294.7,269.1 L294.9,266.7 L295.1,270.2 L295.3,270.2 L295.5,269.9 L295.7,270.6 L295.9,270.7 L296.1,270.7 L296.3,271.0 L296.5,271.2 L296.7,271.2 L296.9,271.5 L297.1,271.5 L297.3,270.8 L297.5,270.5 L297.7,270.6 L297.9,270.8 L298.1,270.0 L298.3,271.3 L298.5,270.3 L298.7,270.8 L298.9,270.2 L299.1,269.5 L299.3,268.1 L299.5,270.1 L299.7,270.7 L299.9,270.6 L300.1,270.3 L300.3,270.8 L300.5,270.7 L300.7,270.8 L300.9,271.4 L301.1,270.8 L301.3,269.2 L301.5,269.9 L301.7,270.0 L301.9,270.1 L302.1,269.7 L302.3,269.8 L302.5,270.9 L302.7,271.1 L302.9,269.9 L303.1,269.6 L303.3,269.8 L303.5,269.8 L303.7,268.4 L303.9,267.3 L304.1,266.3 L304.3,265.6 L304.5,263.2 L304.7,260.0 L304.9,259.0 L305.1,260.6 L305.3,263.9 L305.5,257.7 L305.7,260.0 L305.9,257.7 L306.1,250.0 L306.3,254.3 L306.5,254.3 L306.7,249.4 L306.9,251.9 L307.1,245.4 L307.3,237.7 L307.5,244.0 L307.7,236.1 L307.9,246.2 L308.1,243.2 L308.3,244.9 L308.5,258.3 L308.7,250.0 L308.9,241.4 L309.1,244.1 L309.3,250.5 L309.5,241.4 L309.7,237.8 L309.9,230.8 L310.1,233.0 L310.3,236.7 L310.5,241.3 L310.7,241.5 L310.9,231.1 L311.1,225.2 L311.3,233.2 L311.5,252.7 L311.7,252.7 L311.9,253.5 L312.1,236.4 L312.3,249.6 L312.5,239.5 L312.7,243.4 L312.9,248.1 L313.1,243.5 L313.3,250.5 L313.5,248.6 L313.7,243.5 L313.9,225.6 L314.1,231.9 L314.3,243.2 L314.5,253.0 L314.7,249.4 L314.9,249.3 L315.1,242.9 L315.3,245.1 L315.5,245.4 L315.7,254.8 L315.9,231.6 L316.1,216.5 L316.3,202.1 L316.5,217.0 L316.7,232.4 L316.9,239.1 L317.1,238.0 L317.3,237.1 L317.5,237.0 L317.7,245.0 L317.9,241.5 L318.1,243.2 L318.3,241.9 L318.5,254.2 L318.7,251.7 L318.9,253.5 L319.1,253.7 L319.3,252.3 L319.5,253.2 L319.7,253.0 L319.9,256.9 L320.1,259.7 L320.3,257.7 L320.5,259.3 L320.7,257.1 L320.9,257.6 L321.1,256.8 L321.3,261.8 L321.5,262.1 L321.7,263.1 L321.9,264.3 L322.1,265.8 L322.3,265.7 L322.5,268.0 L322.7,269.1 L322.9,270.6 L323.1,270.9 L323.3,270.9 L323.5,270.6 L323.7,270.6 L323.9,270.9 L324.1,270.7 L324.3,271.0 L324.5,271.1 L324.7,271.5 L324.9,271.8 L325.1,270.2 L325.3,270.8 L325.5,269.9 L325.7,265.5 L325.9,268.4 L326.1,270.6 L326.3,269.8 L326.5,269.3 L326.7,270.4 L326.9,270.3 L327.1,269.4 L327.3,269.8 L327.5,268.9 L327.7,268.8 L327.9,270.0 L328.1,269.2 L328.3,268.6 L328.5,269.0 L328.7,269.0 L328.9,268.3 L329.1,269.5 L329.3,268.8 L329.5,268.6 L329.7,269.9 L329.9,269.0 L330.1,268.0 L330.3,268.4 L330.5,269.0 L330.7,268.4 L330.9,267.8 L331.1,268.6 L331.3,269.1 L331.5,268.4 L331.7,267.6 L331.9,269.4 L332.1,270.3 L332.3,270.7 L332.5,269.3 L332.7,269.3 L332.9,268.7 L333.1,269.4 L333.3,269.5 L333.5,270.1 L333.7,269.6 L333.9,269.0 L334.1,269.4 L334.3,269.1 L334.5,269.5 L334.7,269.5 L334.9,268.6 L335.1,268.8 L335.3,269.0 L335.5,269.1 L335.7,269.9 L335.9,269.8 L336.1,269.8 L336.3,269.5 L336.5,268.5 L336.7,268.8 L336.9,268.4 L337.1,268.0 L337.3,268.3 L337.5,268.1 L337.7,268.5 L337.9,268.9 L338.1,269.3 L338.3,268.2 L338.5,268.6 L338.7,268.4 L338.9,269.0 L339.1,268.3 L339.3,267.9 L339.5,268.9 L339.7,269.0 L339.9,269.0 L340.1,268.5 L340.3,269.0 L340.5,269.1 L340.7,268.2 L340.9,268.2 L341.1,268.8 L341.3,268.8 L341.5,268.5 L341.7,268.8 L341.9,269.4 L342.1,268.7 L342.3,267.7 L342.5,268.2 L342.7,268.5 L342.9,268.8 L343.1,269.1 L343.3,269.4 L343.5,269.2 L343.7,268.7 L343.9,269.2 L344.1,270.5 L344.3,270.8 L344.5,270.2 L344.7,270.0 L344.9,270.1 L345.1,270.0 L345.3,270.0 L345.5,268.7 L345.7,266.9 L345.9,264.5 L346.1,263.2 L346.3,257.2 L346.5,260.2 L346.7,259.7 L346.9,256.9 L347.1,250.0 L347.3,249.2 L347.5,241.2 L347.7,241.5 L347.9,240.4 L348.1,248.0 L348.3,248.3 L348.5,246.7 L348.7,234.8 L348.9,216.4 L349.1,222.6 L349.3,235.0 L349.5,244.5 L349.7,244.0 L349.9,245.0 L350.1,244.5 L350.3,250.4 L350.5,250.3 L350.7,251.1 L350.9,253.7 L351.1,252.2 L351.3,254.0 L351.5,250.8 L351.7,246.1 L351.9,246.7 L352.1,248.3 L352.3,247.1 L352.5,249.9 L352.7,253.8 L352.9,259.6 L353.1,248.7 L353.3,249.1 L353.5,259.3 L353.7,246.3 L353.9,237.9 L354.1,240.8 L354.3,246.8 L354.5,253.0 L354.7,259.1 L354.9,257.9 L355.1,252.2 L355.3,256.6 L355.5,259.9 L355.7,256.5 L355.9,248.9 L356.1,256.0 L356.3,251.8 L356.5,253.5 L356.7,253.4 L356.9,250.4 L357.1,256.8 L357.3,256.6 L357.5,257.3 L357.7,254.9 L357.9,255.5 L358.1,255.4 L358.3,253.8 L358.5,256.5 L358.7,256.3 L358.9,258.5 L359.1,253.8 L359.3,253.8 L359.5,251.3 L359.7,259.7 L359.9,260.5 L360.1,258.6 L360.3,253.7 L360.5,256.0 L360.7,258.0 L360.9,248.3 L361.1,251.1 L361.3,251.1 L361.5,254.4 L361.7,243.5 L361.9,244.9 L362.1,248.7 L362.3,249.9 L362.5,249.3 L362.7,246.8 L362.9,247.3 L363.1,235.8 L363.3,216.4 L363.5,222.9 L363.7,235.6 L363.9,242.5 L364.1,252.4 L364.3,244.6 L364.5,244.8 L364.7,250.2 L364.9,238.5 L365.1,238.0 L365.3,254.3 L365.5,244.5 L365.7,249.2 L365.9,255.5 L366.1,246.5 L366.3,253.0 L366.5,250.6 L366.7,239.2 L366.9,227.9 L367.1,231.7 L367.3,239.7 L367.5,248.3 L367.7,245.3 L367.9,243.0 L368.1,241.6 L368.3,246.4 L368.5,249.2 L368.7,254.6 L368.9,263.6 L369.1,260.3 L369.3,259.7 L369.5,260.3 L369.7,257.8 L369.9,256.4 L370.1,259.3 L370.3,256.7 L370.5,257.8 L370.7,257.3 L370.9,257.2 L371.1,257.7 L371.3,261.8 L371.5,264.3 L371.7,264.5 L371.9,264.3 L372.1,265.2 L372.3,266.8 L372.5,267.4 L372.7,268.1 L372.9,270.5 L373.1,271.1 L373.3,271.3 L373.5,271.2 L373.7,270.4 L373.9,270.2 L374.1,270.0 L374.3,270.2 L374.5,270.7 L374.7,270.5 L374.9,270.8 L375.1,266.4 L375.3,270.5 L375.5,270.8 L375.7,270.9 L375.9,270.8 L376.1,266.6 L376.3,269.8 L376.5,271.3 L376.7,271.8 L376.9,269.6 L377.1,266.8 L377.3,264.3 L377.5,263.9 L377.7,259.9 L377.9,254.6 L378.1,250.6 L378.3,244.4 L378.5,237.9 L378.7,242.3 L378.9,240.8 L379.1,251.4 L379.3,249.7 L379.5,244.5 L379.7,243.5 L379.9,249.3 L380.1,251.7 L380.3,243.1 L380.5,251.7 L380.7,240.6 L380.9,243.9 L381.1,243.5 L381.3,251.7 L381.5,250.8 L381.7,243.8 L381.9,252.5 L382.1,237.1 L382.3,241.7 L382.5,234.3 L382.7,227.0 L382.9,234.3 L383.1,240.7 L383.3,245.6 L383.5,246.5 L383.7,247.0 L383.9,249.0 L384.1,260.0 L384.3,245.7 L384.5,244.4 L384.7,244.4 L384.9,248.5 L385.1,244.0 L385.3,240.3 L385.5,236.5 L385.7,240.3 L385.9,244.2 L386.1,247.3 L386.3,252.0 L386.5,249.9 L386.7,240.2 L386.9,249.7 L387.1,248.2 L387.3,250.3 L387.5,243.6 L387.7,250.7 L387.9,256.7 L388.1,248.3 L388.3,249.7 L388.5,250.1 L388.7,243.9 L388.9,241.3 L389.1,230.8 L389.3,234.3 L389.5,241.6 L389.7,249.1 L389.9,245.3 L390.1,239.0 L390.3,249.2 L390.5,244.6 L390.7,258.6 L390.9,251.8 L391.1,256.1 L391.3,256.9 L391.5,259.2 L391.7,261.5 L391.9,264.3 L392.1,263.9 L392.3,261.6 L392.5,262.3 L392.7,265.4 L392.9,266.8 L393.1,267.4 L393.3,268.6 L393.5,269.3 L393.7,270.5 L393.9,271.0 L394.1,271.5 L394.3,271.0 L394.5,270.2 L394.7,269.4 L394.9,269.9 L395.1,270.7 L395.3,270.6 L395.5,269.9 L395.7,270.6 L395.9,270.7 L396.1,270.1 L396.3,270.1 L396.5,270.0 L396.7,270.9 L396.9,269.4 L397.1,269.0 L397.3,269.8 L397.5,270.8 L397.7,271.6 L397.9,271.3 L398.1,270.4 L398.3,270.4 L398.5,270.8 L398.7,270.9 L398.9,271.8 L399.1,270.5 L399.3,271.7 L399.5,271.5 L399.7,270.9 L399.9,271.2 L400.1,270.7 L400.3,270.9 L400.5,269.8 L400.7,270.6 L400.9,270.0 L401.1,270.0 L401.3,269.6 L401.5,270.6 L401.7,271.6 L401.9,270.6 L402.1,270.3 L402.3,270.4 L402.5,271.0 L402.7,270.9 L402.9,270.0 L403.1,269.4 L403.3,269.7 L403.5,271.6 L403.7,270.5 L403.9,270.0 L404.1,270.0 L404.3,270.3 L404.5,271.0 L404.7,270.3 L404.9,271.4 L405.1,270.1 L405.3,270.6 L405.5,270.2 L405.7,270.1 L405.9,270.3 L406.1,271.0 L406.3,268.2 L406.5,270.8 L406.7,270.6 L406.9,270.3 L407.1,270.4 L407.3,270.6 L407.5,269.9 L407.7,271.8 L407.9,268.6 L408.1,265.1 L408.3,266.3 L408.5,268.6 L408.7,270.9 L408.9,270.6 L409.1,271.7 L409.3,271.3 L409.5,269.9 L409.7,270.7 L409.9,271.0 L410.1,270.3 L410.3,270.3 L410.5,271.0 L410.7,270.7 L410.9,267.2 L411.1,270.4 L411.3,271.2 L411.5,270.6 L411.7,270.1 L411.9,270.2 L412.1,271.7 L412.3,271.4 L412.5,271.1 L412.7,270.9 L412.9,270.1 L413.1,270.5 L413.3,270.4 L413.5,270.7 L413.7,270.7 L413.9,270.2 L414.1,270.5 L414.3,269.7 L414.5,270.0 L414.7,269.6 L414.9,269.9 L415.1,269.5 L415.3,269.3 L415.5,269.6 L415.7,270.0 L415.9,270.1 L416.1,270.1 L416.3,268.8 L416.5,266.2 L416.7,267.0 L416.9,264.4 L417.1,263.4 L417.3,257.4 L417.5,255.4 L417.7,250.1 L417.9,250.0 L418.1,252.8 L418.3,245.8 L418.5,249.6 L418.7,249.2 L418.9,246.5 L419.1,244.1 L419.3,236.9 L419.5,244.3 L419.7,241.4 L419.9,242.4 L420.1,249.6 L420.3,251.2 L420.5,246.6 L420.7,241.2 L420.9,239.7 L421.1,238.1 L421.3,234.7 L421.5,227.8 L421.7,224.5 L421.9,234.3 L422.1,241.7 L422.3,248.5 L422.5,254.3 L422.7,252.4 L422.9,253.8 L423.1,254.4 L423.3,253.6 L423.5,257.2 L423.7,258.0 L423.9,263.0 L424.1,260.5 L424.3,263.2 L424.5,259.5 L424.7,265.9 L424.9,262.3 L425.1,257.0 L425.3,263.3 L425.5,257.8 L425.7,253.3 L425.9,250.7 L426.1,256.0 L426.3,249.5 L426.5,244.8 L426.7,240.1 L426.9,236.5 L427.1,239.5 L427.3,243.2 L427.5,248.0 L427.7,244.7 L427.9,246.4 L428.1,242.7 L428.3,245.3 L428.5,251.4 L428.7,252.3 L428.9,248.6 L429.1,253.2 L429.3,252.9 L429.5,253.3 L429.7,256.5 L429.9,264.4 L430.1,260.9 L430.3,260.5 L430.5,261.5 L430.7,264.3 L430.9,262.8 L431.1,265.2 L431.3,267.1 L431.5,267.2 L431.7,268.6 L431.9,269.7 L432.1,270.1 L432.3,270.3 L432.5,270.5 L432.7,270.2 L432.9,270.2 L433.1,270.2 L433.3,270.3 L433.5,269.7 L433.7,270.0 L433.9,270.2 L434.1,270.2 L434.3,270.0 L434.5,269.9 L434.7,268.8 L434.9,269.7 L435.1,267.0 L435.3,264.0 L435.5,262.7 L435.7,261.0 L435.9,258.1 L436.1,258.6 L436.3,262.6 L436.5,263.3 L436.7,266.5 L436.9,268.4 L437.1,270.8 L437.3,270.7 L437.5,270.5 L437.7,269.3 L437.9,270.1 L438.1,270.1 L438.3,270.2 L438.5,271.1 L438.7,269.7 L438.9,270.1 L439.1,270.4 L439.3,270.6 L439.5,270.7 L439.7,270.9 L439.9,270.6 L440.1,271.1 L440.3,269.7 L440.5,269.9 L440.7,269.9 L440.9,269.8 L441.1,269.5 L441.3,270.6 L441.5,270.1 L441.7,270.1 L441.9,268.9 L442.1,270.1 L442.3,270.0 L442.5,269.7 L442.7,270.1 L442.9,270.5 L443.1,270.5 L443.3,271.2 L443.5,271.0 L443.7,270.1 L443.9,271.1 L444.1,272.1 L444.3,270.4 L444.5,270.8 L444.7,267.6 L444.9,270.2 L445.1,270.6 L445.3,270.6 L445.5,270.2 L445.7,270.2 L445.9,271.7 L446.1,271.3 L446.3,270.1 L446.5,270.4 L446.7,270.5 L446.9,271.3 L447.1,270.9 L447.3,271.3 L447.5,271.5 L447.7,271.5 L447.9,270.5 L448.1,270.9 L448.3,270.0 L448.5,270.7 L448.7,270.9 L448.9,270.8 L449.1,271.4 L449.3,270.0 L449.5,269.4 L449.7,271.2 L449.9,271.0 L450.1,270.4 L450.3,271.1 L450.5,269.9 L450.7,271.0 L450.9,270.2 L451.1,271.4 L451.3,270.9 L451.5,270.4 L451.7,271.1 L451.9,270.9 L452.1,269.8 L452.3,270.3 L452.5,270.2 L452.7,271.4 L452.9,271.3 L453.1,270.3 L453.3,270.8 L453.5,270.2 L453.7,270.6 L453.9,270.7 L454.1,270.7 L454.3,270.1 L454.5,269.7 L454.7,269.8 L454.9,271.2 L455.1,270.3 L455.3,269.9 L455.5,270.2 L455.7,270.6 L455.9,269.7 L456.1,267.4 L456.3,265.1 L456.5,267.4 L456.7,268.9 L456.9,270.3 L457.1,270.9 L457.3,271.2 L457.5,270.3 L457.7,270.5 L457.9,270.7 L458.1,271.7 L458.3,270.7 L458.5,270.1 L458.7,270.8 L458.9,270.3 L459.1,271.2 L459.3,270.0 L459.5,270.2 L459.7,270.4 L459.9,270.8 L460.1,270.5 L460.3,270.8 L460.5,270.8 L460.7,270.7 L460.9,270.8 L461.1,270.6 L461.3,272.2 L461.5,272.2 L461.7,270.8 L461.9,266.3 L462.1,270.5 L462.3,270.1 L462.5,270.0 L462.7,270.9 L462.9,270.2 L463.1,270.3 L463.3,270.2 L463.5,270.8 L463.7,271.2 L463.9,270.9 L464.1,271.2 L464.3,271.1 L464.5,270.1 L464.7,270.8 L464.9,271.2 L465.1,270.9 L465.3,270.9 L465.5,269.7 L465.7,270.0 L465.9,271.1 L466.1,271.9 L466.3,270.6 L466.5,270.7 L466.7,270.8 L466.9,270.9 L467.1,270.9 L467.3,270.5 L467.5,271.2 L467.7,269.7 L467.9,268.0 L468.1,268.6 L468.3,269.7 L468.5,270.3 L468.7,271.9 L468.9,271.1 L469.1,269.5 L469.3,269.4 L469.5,269.9 L469.7,270.4 L469.9,270.1 L470.1,270.7 L470.3,270.8 L470.5,270.5 L470.7,270.8 L470.9,270.8 L471.1,270.6 L471.3,270.5 L471.5,269.8 L471.7,270.4 L471.9,271.1 L472.1,270.6 L472.3,270.9 L472.5,270.0 L472.7,270.6 L472.9,270.6 L473.1,271.3 L473.3,272.0 L473.5,271.0 L473.7,270.4 L473.9,270.4 L474.1,270.3 L474.3,270.8 L474.5,271.9 L474.7,271.9 L474.9,271.1 L475.1,270.9 L475.3,270.7 L475.5,269.7 L475.7,270.3 L475.9,270.3 L476.1,271.4 L476.3,271.2 L476.5,270.1 L476.7,270.3 L476.9,270.0 L477.1,269.8 L477.3,270.5 L477.5,270.8 L477.7,271.2 L477.9,269.8 L478.1,269.7 L478.3,269.3 L478.5,269.9 L478.7,269.1 L478.9,268.2 L479.1,267.4 L479.3,267.2 L479.5,266.6 L479.7,266.6 L479.9,265.2 L480.1,264.5 L480.3,265.5 L480.5,266.8 L480.7,266.8 L480.9,266.2 L481.1,265.9 L481.3,266.6 L481.5,266.5 L481.7,266.7 L481.9,266.6 L482.1,266.5 L482.3,266.5 L482.5,266.2 L482.7,266.3 L482.9,266.1 L483.1,266.7 L483.3,266.4 L483.5,266.3 L483.7,266.5 L483.9,256.3 L484.1,240.8 L484.3,245.9 L484.5,256.3 L484.7,265.9 L484.9,265.1 L485.1,265.9 L485.3,265.9 L485.5,267.4 L485.7,266.4 L485.9,265.6 L486.1,265.3 L486.3,265.4 L486.5,265.1 L486.7,266.1 L486.9,265.6 L487.1,267.4 L487.3,266.7 L487.5,268.1 L487.7,267.5 L487.9,268.9 L488.1,268.1 L488.3,268.9 L488.5,268.3 L488.7,269.5 L488.9,270.0 L489.1,270.2 L489.3,271.7 L489.5,270.9 L489.7,271.5 L489.9,270.3 L490.1,269.5 L490.3,270.6 L490.5,271.2 L490.7,271.7 L490.9,267.9 L491.1,271.4 L491.3,270.1 L491.5,269.7 L491.7,270.8 L491.9,270.5 L492.1,270.1 L492.3,271.1 L492.5,270.9 L492.7,269.8 L492.9,270.2 L493.1,270.7 L493.3,270.5 L493.5,270.9 L493.7,270.9 L493.9,270.4 L494.1,270.1 L494.3,270.8 L494.5,272.2 L494.7,271.3 L494.9,268.8 L495.1,269.9 L495.3,271.4 L495.5,270.6 L495.7,270.0 L495.9,269.9 L496.1,271.3 L496.3,269.9 L496.5,269.6 L496.7,269.9 L496.9,270.9 L497.1,270.0 L497.3,271.2 L497.5,270.9 L497.7,271.7 L497.9,269.8 L498.1,270.6 L498.3,271.3 L498.5,270.1 L498.7,271.0 L498.9,270.9 L499.1,270.4 L499.3,270.1 L499.5,269.8 L499.7,271.0 L499.9,270.1 L500.1,270.4 L500.3,271.0 L500.5,269.9 L500.7,270.5 L500.9,271.6 L501.1,269.9 L501.3,270.4 L501.5,270.2 L501.7,270.3 L501.9,271.0 L502.1,270.5 L502.3,270.8 L502.5,270.7 L502.7,270.5 L502.9,269.1 L503.1,270.4 L503.3,270.1 L503.5,270.6 L503.7,270.2 L503.9,270.2 L504.1,270.0 L504.3,270.5 L504.5,271.6 L504.7,270.6 L504.9,270.7 L505.1,270.3 L505.3,271.3 L505.5,271.1 L505.7,271.6 L505.9,270.0 L506.1,270.7 L506.3,270.9 L506.5,270.4 L506.7,271.2 L506.9,270.8 L507.1,270.2 L507.3,270.4 L507.5,271.4 L507.7,270.5 L507.9,270.2 L508.1,271.0 L508.3,271.4 L508.5,270.0 L508.7,270.7 L508.9,270.4 L509.1,271.0 L509.3,271.4 L509.5,271.0 L509.7,270.4 L509.9,270.1 L510.1,271.5 L510.3,270.9 L510.5,271.3 L510.7,270.4 L510.9,270.3 L511.1,271.5 L511.3,270.9 L511.5,271.4 L511.7,270.9 L511.9,271.8 L512.1,270.4 L512.3,269.9 L512.5,270.4 L512.7,270.3 L512.9,270.5 L513.1,270.2 L513.3,271.1 L513.5,272.2 L513.7,271.2 L513.9,271.0 L514.1,269.9 L514.3,270.3 L514.5,269.9 L514.7,270.1 L514.9,269.4 L515.1,269.9 L515.3,270.7 L515.5,271.0 L515.7,270.5 L515.9,269.6 L516.1,270.0 L516.3,271.0 L516.5,270.1 L516.7,270.3 L516.9,271.1 L517.1,271.4 L517.3,271.6 L517.5,271.0 L517.7,269.7 L517.9,270.3 L518.1,270.3 L518.3,270.5 L518.5,271.4 L518.7,270.6 L518.9,270.8 L519.1,270.3 L519.3,270.2 L519.5,269.6 L519.7,269.9 L519.9,269.5 L520.1,271.0 L520.3,271.1 L520.5,269.5 L520.7,270.6 L520.9,270.2 L521.1,270.3 L521.3,270.6 L521.5,271.4 L521.7,270.4 L521.9,269.8 L522.1,270.0 L522.3,270.3 L522.5,270.3 L522.7,271.1 L522.9,270.2 L523.1,269.6 L523.3,269.4 L523.5,270.7 L523.7,270.4 L523.9,270.3 L524.1,270.4 L524.3,270.1 L524.5,270.8 L524.7,272.0 L524.9,271.1 L525.1,271.3 L525.3,270.8 L525.5,270.6 L525.7,270.6 L525.9,270.5 L526.1,270.7 L526.3,270.6 L526.5,270.1 L526.7,270.2 L526.9,271.3 L527.1,270.7 L527.3,270.2 L527.5,270.8 L527.7,270.4 L527.9,270.2 L528.1,271.0 L528.3,271.4 L528.5,270.9 L528.7,270.9 L528.9,271.1 L529.1,271.6 L529.3,271.2 L529.5,271.4 L529.7,271.0 L529.9,270.9 L530.1,270.6 L530.3,270.0 L530.5,271.0 L530.7,271.4 L530.9,269.9 L531.1,270.5 L531.3,270.5 L531.5,269.2 L531.7,269.4 L531.9,270.5 L532.1,270.5 L532.3,270.5 L532.5,269.6 L532.7,270.4 L532.9,270.2 L533.1,269.8 L533.3,265.8 L533.5,271.0 L533.7,270.4 L533.9,271.1 L534.1,270.7 L534.3,270.8 L534.5,267.5 L534.7,270.1 L534.9,269.9 L535.1,271.3 L535.3,271.0 L535.5,271.1 L535.7,270.0 L535.9,270.5 L536.1,270.7 L536.3,271.7 L536.5,271.3 L536.7,270.5 L536.9,271.8 L537.1,269.4 L537.3,267.4 L537.5,265.2 L537.7,265.2 L537.9,262.4 L538.1,263.2 L538.3,262.4 L538.5,254.2 L538.7,257.0 L538.9,251.8 L539.1,259.8 L539.3,249.3 L539.5,254.4 L539.7,241.0 L539.9,240.9 L540.1,239.1 L540.3,247.6 L540.5,238.2 L540.7,227.9 L540.9,231.6 L541.1,239.2 L541.3,247.4 L541.5,251.9 L541.7,251.3 L541.9,245.9 L542.1,249.5 L542.3,248.4 L542.5,261.5 L542.7,250.9 L542.9,257.1 L543.1,261.7 L543.3,254.9 L543.5,260.7 L543.7,248.2 L543.9,250.9 L544.1,251.9 L544.3,248.7 L544.5,251.4 L544.7,251.1 L544.9,250.3 L545.1,242.4 L545.3,245.0 L545.5,250.9 L545.7,250.2 L545.9,258.0 L546.1,247.7 L546.3,254.7 L546.5,254.2 L546.7,252.5 L546.9,249.7 L547.1,253.7 L547.3,254.6 L547.5,254.9 L547.7,263.0 L547.9,257.4 L548.1,249.9 L548.3,245.4 L548.5,240.2 L548.7,233.6 L548.9,240.1 L549.1,246.6 L549.3,244.1 L549.5,251.2 L549.7,248.2 L549.9,249.3 L550.1,249.0 L550.3,247.1 L550.5,250.0 L550.7,252.5 L550.9,254.0 L551.1,249.1 L551.3,236.0 L551.5,216.7 L551.7,206.7 L551.9,237.7 L552.1,259.4 L552.3,264.5 L552.5,262.6 L552.7,264.2 L552.9,263.9 L553.1,263.9 L553.3,265.1 L553.5,265.5 L553.7,265.2 L553.9,266.5 L554.1,267.9 L554.3,268.6 L554.5,268.8 L554.7,269.3 L554.9,269.5 L555.1,270.0 L555.3,270.5 L555.5,269.6 L555.7,270.4 L555.9,270.0 L556.1,270.4 L556.3,270.8 L556.5,270.6 L556.7,270.7 L556.9,270.0 L557.1,271.2 L557.3,270.4 L557.5,270.5 L557.7,271.0 L557.9,271.4 L558.1,270.7 L558.3,270.4 L558.5,271.0 L558.7,271.3 L558.9,269.7 L559.1,270.2 L559.3,271.0 L559.5,270.0 L559.7,270.4 L559.9,270.0 L560.1,270.4 L560.3,269.5 L560.5,270.2 L560.7,270.8 L560.9,271.1 L561.1,270.4 L561.3,270.4 L561.5,270.6 L561.7,270.6 L561.9,270.4 L562.1,271.4 L562.3,270.6 L562.5,271.0 L562.7,270.7 L562.9,270.5 L563.1,270.4 L563.3,269.8 L563.5,270.6 L563.7,270.6 L563.9,271.3 L564.1,270.7 L564.3,270.8 L564.5,270.6 L564.7,270.3 L564.9,270.1 L565.1,270.2 L565.3,270.5 L565.5,270.8 L565.7,270.4 L565.9,269.7 L566.1,269.6 L566.3,267.3 L566.5,270.6 L566.7,270.6 L566.9,271.0 L567.1,270.8 L567.3,270.9 L567.5,270.9 L567.7,270.8 L567.9,271.8 L568.1,270.8 L568.3,270.3 L568.5,270.1 L568.7,270.2 L568.9,270.2 L569.1,270.2 L569.3,269.9 L569.5,270.6 L569.7,270.2 L569.9,270.6 L570.1,269.9 L570.3,270.6 L570.5,270.4 L570.7,269.4 L570.9,270.6 L571.1,270.5 L571.3,271.0 L571.5,270.4 L571.7,270.8 L571.9,267.5 L572.1,270.6 L572.3,269.9 L572.5,270.1 L572.7,270.1 L572.9,270.2 L573.1,270.2 L573.3,270.3 L573.5,270.6 L573.7,271.1 L573.9,271.1 L574.1,271.4 L574.3,271.8 L574.5,270.5 L574.7,270.7 L574.9,270.6 L575.1,270.5 L575.3,269.4 L575.5,270.4 L575.7,269.9 L575.9,271.2 L576.1,270.5 L576.3,270.3 L576.5,270.1 L576.7,271.6 L576.9,269.8 L577.1,268.5 L577.3,267.2 L577.5,265.7 L577.7,266.6 L577.9,263.4 L578.1,256.7 L578.3,254.3 L578.5,257.0 L578.7,257.2 L578.9,256.5 L579.1,244.7 L579.3,233.8 L579.5,224.5 L579.7,232.2 L579.9,238.3 L580.1,246.9 L580.3,246.4 L580.5,232.9 L580.7,241.6 L580.9,241.3 L581.1,235.8 L581.3,236.5 L581.5,241.8 L581.7,255.3 L581.9,239.8 L582.1,239.1 L582.3,244.9 L582.5,245.1 L582.7,250.1 L582.9,251.7 L583.1,255.5 L583.3,246.4 L583.5,243.4 L583.7,244.4 L583.9,241.8 L584.1,242.2 L584.3,244.4 L584.5,250.2 L584.7,244.8 L584.9,239.9 L585.1,241.0 L585.3,238.3 L585.5,246.0 L585.7,251.3 L585.9,241.9 L586.1,247.8 L586.3,245.7 L586.5,247.2 L586.7,242.5 L586.9,236.5 L587.1,238.5 L587.3,242.5 L587.5,240.4 L587.7,243.4 L587.9,255.2 L588.1,254.2 L588.3,255.0 L588.5,253.3 L588.7,261.9 L588.9,249.2 L589.1,239.6 L589.3,245.6 L589.5,242.9 L589.7,242.7 L589.9,251.8 L590.1,242.9 L590.3,254.1 L590.5,252.6 L590.7,251.0 L590.9,242.7 L591.1,245.4 L591.3,247.5 L591.5,251.6 L591.7,248.7 L591.9,248.0 L592.1,241.2 L592.3,226.7 L592.5,211.0 L592.7,227.9 L592.9,245.9 L593.1,251.1 L593.3,255.5 L593.5,258.5 L593.7,256.3 L593.9,257.7 L594.1,261.3 L594.3,264.6 L594.5,266.6 L594.7,267.3 L594.9,268.8 L595.1,268.6 L595.3,268.4 L595.5,268.2 L595.7,268.4 L595.9,267.4 L596.1,268.4 L596.3,268.3 L596.5,268.0 L596.7,268.0 L596.9,268.2 L597.1,268.6 L597.3,267.7 L597.5,267.5 L597.7,266.5 L597.9,264.6 L598.1,263.7 L598.3,266.5 L598.5,268.3 L598.7,268.3 L598.9,268.0 L599.1,267.3 L599.3,266.7 L599.5,267.2 L599.7,268.1 L599.9,268.5 L600.1,267.8 L600.3,267.1 L600.5,267.0 L600.7,266.7 L600.9,267.2 L601.1,268.4 L601.3,267.7 L601.5,266.1 L601.7,266.2 L601.9,266.1 L602.1,265.1 L602.3,266.2 L602.5,265.5 L602.7,265.2 L602.9,265.6 L603.1,266.2 L603.3,265.1 L603.5,264.9 L603.7,265.1 L603.9,259.5 L604.1,248.0 L604.3,236.5 L604.5,248.0 L604.7,259.7 L604.9,266.2 L605.1,265.5 L605.3,264.3 L605.5,265.3 L605.7,265.9 L605.9,266.2 L606.1,265.9 L606.3,266.6 L606.5,265.0 L606.7,259.0 L606.9,247.9 L607.1,251.7 L607.3,259.2 L607.5,265.8 L607.7,265.9 L607.9,265.6 L608.1,266.1 L608.3,266.4 L608.5,266.9 L608.7,266.1 L608.9,268.3 L609.1,267.4 L609.3,268.3 L609.5,267.6 L609.7,267.1 L609.9,266.2 L610.1,267.4 L610.3,267.3 L610.5,267.4 L610.7,267.8 L610.9,267.5 L611.1,267.1 L611.3,268.7 L611.5,267.9 L611.7,267.2 L611.9,267.9 L612.1,267.8 L612.3,268.4 L612.5,268.6 L612.7,268.1 L612.9,268.7 L613.1,268.6 L613.3,269.4 L613.5,268.7 L613.7,268.8 L613.9,267.7 L614.1,268.8 L614.3,270.0 L614.5,269.8 L614.7,270.0 L614.9,270.1 L615.1,269.8 L615.3,269.0 L615.5,270.3 L615.7,269.0 L615.9,269.8 L616.1,269.5 L616.3,269.9 L616.5,269.3 L616.7,266.8 L616.9,265.7 L617.1,263.2 L617.3,261.4 L617.5,260.1 L617.7,255.6 L617.9,256.3 L618.1,256.3 L618.3,254.4 L618.5,248.7 L618.7,248.3 L618.9,248.4 L619.1,244.4 L619.3,253.5 L619.5,243.9 L619.7,240.2 L619.9,235.8 L620.1,233.6 L620.3,239.9 L620.5,260.2 L620.7,247.9 L620.9,246.6 L621.1,250.4 L621.3,242.4 L621.5,249.6 L621.7,241.9 L621.9,240.7 L622.1,241.7 L622.3,250.6 L622.5,253.7 L622.7,249.2 L622.9,243.1 L623.1,251.4 L623.3,248.3 L623.5,244.3 L623.7,255.1 L623.9,242.6 L624.1,247.7 L624.3,250.8 L624.5,248.4 L624.7,249.2 L624.9,252.9 L625.1,252.6 L625.3,250.7 L625.5,253.9 L625.7,244.9 L625.9,243.2 L626.1,242.1 L626.3,253.3 L626.5,251.4 L626.7,245.5 L626.9,240.3 L627.1,233.9 L627.3,230.8 L627.5,237.1 L627.7,238.4 L627.9,244.6 L628.1,252.3 L628.3,244.1 L628.5,243.7 L628.7,248.1 L628.9,249.7 L629.1,245.0 L629.3,247.8 L629.5,251.6 L629.7,255.3 L629.9,253.0 L630.1,251.5 L630.3,251.4 L630.5,226.7 L630.7,245.2 L630.9,237.1 L631.1,228.5 L631.3,224.5 L631.5,230.2 L631.7,247.2 L631.9,246.4 L632.1,239.6 L632.3,220.3 L632.5,185.2 L632.7,197.7 L632.9,223.8 L633.1,249.2 L633.3,246.2 L633.5,257.4 L633.7,254.5 L633.9,259.3 L634.1,258.7 L634.3,263.4 L634.5,264.4 L634.7,266.0 L634.9,268.8 L635.1,270.9 L635.3,271.3 L635.5,268.8 L635.7,270.9 L635.9,271.6 L636.1,271.3 L636.3,270.9 L636.5,270.5 L636.7,269.8 L636.9,270.5 L637.1,271.4 L637.3,270.7 L637.5,270.7 L637.7,270.4 L637.9,270.4 L638.1,270.1 L638.3,269.9 L638.5,270.9 L638.7,269.8 L638.9,270.0 L639.1,269.9 L639.3,270.1 L639.5,270.1 L639.7,270.7 L639.9,270.0 L640.1,271.8 L640.3,270.4 L640.5,270.9 L640.7,270.6 L640.9,270.5 L641.1,270.4 L641.3,270.9 L641.5,270.4 L641.7,270.7 L641.9,271.2 L642.1,270.8 L642.3,270.7 L642.5,271.1 L642.7,270.1 L642.9,270.9 L643.1,270.5 L643.3,268.6 L643.5,266.3 L643.7,265.1 L643.9,268.6 L644.1,271.6 L644.3,269.8 L644.5,270.2 L644.7,270.2 L644.9,269.9 L645.1,270.3 L645.3,271.3 L645.5,269.9 L645.7,269.6 L645.9,270.6 L646.1,271.2 L646.3,270.3 L646.5,270.9 L646.7,270.3 L646.9,270.9 L647.1,270.8 L647.3,270.2 L647.5,269.7 L647.7,269.3 L647.9,269.8 L648.1,269.9 L648.3,270.2 L648.5,269.3 L648.7,270.9 L648.9,269.6 L649.1,269.5 L649.3,270.2 L649.5,271.6 L649.7,270.3 L649.9,271.2 L650.1,270.6 L650.3,270.5 L650.5,270.8 L650.7,271.4 L650.9,270.5 L651.1,269.9 L651.3,271.3 L651.5,269.6 L651.7,270.3 L651.9,270.1 L652.1,270.5 L652.3,270.9 L652.5,271.2 L652.7,270.1 L652.9,270.5 L653.1,270.7 L653.3,271.2 L653.5,271.1 L653.7,271.1 L653.9,270.3 L654.1,269.8 L654.3,270.7 L654.5,267.8 L654.7,270.2 L654.9,270.5 L655.1,270.6 L655.3,270.9 L655.5,271.4 L655.7,269.5 L655.9,270.5 L656.1,270.8 L656.3,270.1 L656.5,270.2 L656.7,270.5 L656.9,267.4 L657.1,266.2 L657.3,262.7 L657.5,255.6 L657.7,251.2 L657.9,245.0 L658.1,245.6 L658.3,234.6 L658.5,225.9 L658.7,232.4 L658.9,229.4 L659.1,239.2 L659.3,231.5 L659.5,226.3 L659.7,247.3 L659.9,247.9 L660.1,247.6 L660.3,245.1 L660.5,237.7 L660.7,239.1 L660.9,237.8 L661.1,237.9 L661.3,229.2 L661.5,220.5 L661.7,216.1 L661.9,229.2 L662.1,239.9 L662.3,244.0 L662.5,241.5 L662.7,249.3 L662.9,235.9 L663.1,233.3 L663.3,237.8 L663.5,243.2 L663.7,243.6 L663.9,245.2 L664.1,251.6 L664.3,233.1 L664.5,216.0 L664.7,236.2 L664.9,230.8 L665.1,232.6 L665.3,236.0 L665.5,249.0 L665.7,255.7 L665.9,242.6 L666.1,254.0 L666.3,236.8 L666.5,242.9 L666.7,241.6 L666.9,241.8 L667.1,245.4 L667.3,244.2 L667.5,244.9 L667.7,236.1 L667.9,241.1 L668.1,238.9 L668.3,230.6 L668.5,222.2 L668.7,230.8 L668.9,239.6 L669.1,234.4 L669.3,234.7 L669.5,239.9 L669.7,234.0 L669.9,235.7 L670.1,241.1 L670.3,245.5 L670.5,252.2 L670.7,248.0 L670.9,249.8 L671.1,256.8 L671.3,258.0 L671.5,244.4 L671.7,247.9 L671.9,248.4 L672.1,250.3 L672.3,254.0 L672.5,252.1 L672.7,249.7 L672.9,254.4 L673.1,253.7 L673.3,252.6 L673.5,257.5 L673.7,257.9 L673.9,261.0 L674.1,259.2 L674.3,261.5 L674.5,259.7 L674.7,263.5 L674.9,261.0 L675.1,264.2 L675.3,265.6 L675.5,266.8 L675.7,266.2 L675.9,266.9 L676.1,268.5 L676.3,270.9 L676.5,269.4 L676.7,270.5 L676.9,271.1 L677.1,271.0 L677.3,271.4 L677.5,270.7 L677.7,271.5 L677.9,271.2 L678.1,270.4 L678.3,270.9 L678.5,270.2 L678.7,269.9 L678.9,270.8 L679.1,270.8 L679.3,270.3 L679.5,270.2 L679.7,269.6 L679.9,270.5 L680.1,271.0 L680.3,271.3 L680.5,271.3 L680.7,270.2 L680.9,270.4 L681.1,266.3 L681.3,269.8 L681.5,269.7 L681.7,270.7 L681.9,271.4 L682.1,270.0 L682.3,271.6 L682.5,270.5 L682.7,268.3 L682.9,268.0 L683.1,268.6 L683.3,269.7 L683.5,270.2 L683.7,270.0 L683.9,270.6 L684.1,271.2 L684.3,269.5 L684.5,269.2 L684.7,269.7 L684.9,270.3 L685.1,270.9 L685.3,271.4 L685.5,272.1 L685.7,271.7 L685.9,271.6 L686.1,271.4 L686.3,271.1 L686.5,270.5 L686.7,270.3 L686.9,270.4 L687.1,270.8 L687.3,271.2 L687.5,271.0 L687.7,270.2 L687.9,270.2 L688.1,270.4 L688.3,269.5 L688.5,270.7 L688.7,270.6 L688.9,270.4 L689.1,269.7 L689.3,271.6 L689.5,271.0 L689.7,270.5 L689.9,270.5 L690.1,270.9 L690.3,271.2 L690.5,270.4 L690.7,270.7 L690.9,271.2 L691.1,269.7 L691.3,270.2 L691.5,270.3 L691.7,270.7 L691.9,270.9 L692.1,271.2 L692.3,270.8 L692.5,270.8 L692.7,271.3 L692.9,271.6 L693.1,270.6 L693.3,270.2 L693.5,270.4 L693.7,269.8 L693.9,269.8 L694.1,270.4 L694.3,269.7 L694.5,270.5 L694.7,271.1 L694.9,272.2 L695.1,271.7 L695.3,271.6 L695.5,271.0 L695.7,271.8 L695.9,271.0 L696.1,270.5 L696.3,271.1 L696.5,270.2 L696.7,269.8 L696.9,270.1 L697.1,270.5 L697.3,270.2 L697.5,270.1 L697.7,270.5 L697.9,271.1 L698.1,268.7 L698.3,266.3 L698.5,263.2 L698.7,260.7 L698.9,258.9 L699.1,262.5 L699.3,257.2 L699.5,250.2 L699.7,243.2 L699.9,238.2 L700.1,236.5 L700.3,239.3 L700.5,242.7 L700.7,244.1 L700.9,239.2 L701.1,241.3 L701.3,230.4 L701.5,252.9 L701.7,252.7 L701.9,236.9 L702.1,239.9 L702.3,254.0 L702.5,260.5 L702.7,258.3 L702.9,258.1 L703.1,260.3 L703.3,254.2 L703.5,243.1 L703.7,237.0 L703.9,230.8 L704.1,237.3 L704.3,244.7 L704.5,254.6 L704.7,252.6 L704.9,251.8 L705.1,249.8 L705.3,257.3 L705.5,256.3 L705.7,260.8 L705.9,256.7 L706.1,256.0 L706.3,253.1 L706.5,255.9 L706.7,250.2 L706.9,255.0 L707.1,260.5 L707.3,259.0 L707.5,255.7 L707.7,249.7 L707.9,253.4 L708.1,254.7 L708.3,249.9 L708.5,247.9 L708.7,245.0 L708.9,243.7 L709.1,247.4 L709.3,252.3 L709.5,255.0 L709.7,257.2 L709.9,253.8 L710.1,255.6 L710.3,252.5 L710.5,254.9 L710.7,261.5 L710.9,258.7 L711.1,257.0 L711.3,258.1 L711.5,263.3 L711.7,263.6 L711.9,265.5 L712.1,264.6 L712.3,265.6 L712.5,264.0 L712.7,265.0 L712.9,265.4 L713.1,267.0 L713.3,267.8 L713.5,269.2 L713.7,270.4 L713.9,271.4 L714.1,271.0 L714.3,270.1 L714.5,269.7 L714.7,271.2 L714.9,271.4 L715.1,269.4 L715.3,270.4 L715.5,269.3 L715.7,269.4 L715.9,271.1 L716.1,270.7 L716.3,271.2 L716.5,271.3 L716.7,270.6 L716.9,270.0 L717.1,268.1 L717.3,270.5 L717.5,271.1 L717.7,270.7 L717.9,270.5 L718.1,270.7 L718.3,270.2 L718.5,270.4 L718.7,269.8 L718.9,269.8 L719.1,270.2 L719.3,270.7 L719.5,270.7 L719.7,269.9 L719.9,268.7 L720.1,267.7 L720.3,267.4 L720.5,267.3 L720.7,267.3 L720.9,266.8 L721.1,267.1 L721.3,266.6 L721.5,266.6 L721.7,267.3 L721.9,267.5 L722.1,267.6 L722.3,266.2 L722.5,266.3 L722.7,267.0 L722.9,265.5 L723.1,266.4 L723.3,266.7 L723.5,265.9 L723.7,266.3 L723.9,266.8 L724.1,267.0 L724.3,266.4 L724.5,265.9 L724.7,264.8 L724.9,266.1 L725.1,266.4 L725.3,265.5 L725.5,265.8 L725.7,266.3 L725.9,266.0 L726.1,254.7 L726.3,244.7 L726.5,240.8 L726.7,247.7 L726.9,250.5 L727.1,245.4 L727.3,249.9 L727.5,254.0 L727.7,253.7 L727.9,246.6 L728.1,244.8 L728.3,235.5 L728.5,251.6 L728.7,244.4 L728.9,250.9 L729.1,240.3 L729.3,239.0 L729.5,239.4 L729.7,232.2 L729.9,234.5 L730.1,240.2 L730.3,254.9 L730.5,257.2 L730.7,257.6 L730.9,259.2 L731.1,262.0 L731.3,267.7 L731.5,270.9 L731.7,271.0 L731.9,270.9 L732.1,271.0 L732.3,270.8 L732.5,270.3 L732.7,270.1 L732.9,271.2 L733.1,271.5 L733.3,271.9 L733.5,270.7 L733.7,271.0 L733.9,270.3 L734.1,270.6 L734.3,270.8 L734.5,269.3 L734.7,270.7 L734.9,270.4 L735.1,270.8 L735.3,269.5 L735.5,270.1 L735.7,270.7 L735.9,271.3 L736.1,270.4 L736.3,270.8 L736.5,270.5 L736.7,270.5 L736.9,270.3 L737.1,270.1 L737.3,269.4 L737.5,270.8 L737.7,270.5 L737.9,271.0 L738.1,270.8 L738.3,271.1 L738.5,271.5 L738.7,271.2 L738.9,271.0 L739.1,271.3 L739.3,270.4 L739.5,269.2 L739.7,269.9 L739.9,270.7 L740.1,270.6 L740.3,270.2 L740.5,271.1 L740.7,270.8 L740.9,270.7 L741.1,271.8 L741.3,271.5 L741.5,270.2 L741.7,270.8 L741.9,270.7 L742.1,271.6 L742.3,271.0 L742.5,271.4 L742.7,270.0 L742.9,270.8 L743.1,271.2 L743.3,267.2 L743.5,270.0 L743.7,270.0 L743.9,271.0 L744.1,270.0 L744.3,269.7 L744.5,270.1 L744.7,271.2 L744.9,271.5 L745.1,272.1 L745.3,271.7 L745.5,270.6 L745.7,270.2 L745.9,270.9 L746.1,271.0 L746.3,270.9 L746.5,271.3 L746.7,270.6 L746.9,270.2 L747.1,270.6 L747.3,271.2 L747.5,271.1 L747.7,271.1 L747.9,269.9 L748.1,270.7 L748.3,271.1 L748.5,271.3 L748.7,271.5 L748.9,270.9 L749.1,271.0 L749.3,270.3 L749.5,270.3 L749.7,269.9 L749.9,270.0 L750.1,270.9 L750.3,270.6 L750.5,268.2 L750.7,270.2 L750.9,270.8 L751.1,271.6 L751.3,270.0 L751.5,270.2 L751.7,270.8 L751.9,270.4 L752.1,271.1 L752.3,270.8 L752.5,270.3 L752.7,271.1 L752.9,270.3 L753.1,270.9 L753.3,271.4 L753.5,270.7 L753.7,270.5 L753.9,270.7 L754.1,270.5 L754.3,270.6 L754.5,270.2 L754.7,271.0 L754.9,270.9 L755.1,271.6 L755.3,271.4 L755.5,271.6 L755.7,271.3 L755.9,270.1 L756.1,270.7 L756.3,271.0 L756.5,271.7 L756.7,271.3 L756.9,269.6 L757.1,269.7 L757.3,270.5 L757.5,270.3 L757.7,270.7 L757.9,270.3 L758.1,269.1 L758.3,268.0 L758.5,269.1 L758.7,270.3 L758.9,271.3 L759.1,270.2 L759.3,269.9 L759.5,270.2 L759.7,271.3 L759.9,270.5 L760.1,271.1 L760.3,270.9 L760.5,270.6 L760.7,269.9 L760.9,271.5 L761.1,270.5 L761.3,270.6 L761.5,270.8 L761.7,270.9 L761.9,269.8 L762.1,269.9 L762.3,269.9 L762.5,270.3 L762.7,270.2 L762.9,270.8 L763.1,270.7 L763.3,270.6 L763.5,270.2 L763.7,270.4 L763.9,270.8 L764.1,271.6 L764.3,271.6 L764.5,271.2 L764.7,271.5 L764.9,271.3 L765.1,270.8 L765.3,271.1 L765.5,271.0 L765.7,269.8 L765.9,269.8 L766.1,269.8 L766.3,269.9 L766.5,270.7 L766.7,270.2 L766.9,269.3 L767.1,270.3 L767.3,270.5 L767.5,269.5 L767.7,269.4 L767.9,270.2 L768.1,269.4 L768.3,269.6 L768.5,270.5 L768.7,270.8 L768.9,270.0 L769.1,269.9 L769.3,270.9 L769.5,271.4 L769.7,270.3 L769.9,270.6 L770.1,270.9 L770.3,271.6 L770.5,271.6 L770.7,271.2 L770.9,269.8 L771.1,270.5 L771.3,270.3 L771.5,270.9 L771.7,269.7 L771.9,270.7 L772.1,270.5 L772.3,271.2 L772.5,270.5 L772.7,271.6 L772.9,270.8 L773.1,270.4 L773.3,270.6 L773.5,270.4 L773.7,270.3 L773.9,269.4 L774.1,270.3 L774.3,270.1 L774.5,270.9 L774.7,270.5 L774.9,270.6 L775.1,270.6 L775.3,270.6 L775.5,270.5 L775.7,271.1 L775.9,271.1 L776.1,270.2 L776.3,270.6 L776.5,269.8 L776.7,269.5 L776.9,269.9 L777.1,271.2 L777.3,270.4 L777.5,269.9 L777.7,270.0 L777.9,269.5 L778.1,270.8 L778.3,271.2 L778.5,271.3 L778.7,271.0 L778.9,270.3 L779.1,270.2 L779.3,271.0 L779.5,271.4 L779.7,271.5 L779.9,270.7 L780.1,270.0 L780.3,269.9 L780.5,270.8 L780.7,271.8 L780.9,271.5 L781.1,270.9 L781.3,271.6 L781.5,270.6 L781.7,270.2 L781.9,270.5 L782.1,269.9 L782.3,270.3 L782.5,271.4 L782.7,270.3 L782.9,270.4 L783.1,270.0 L783.3,270.8 L783.5,271.2 L783.7,270.4 L783.9,270.5 L784.1,270.4 L784.3,270.4 L784.5,271.0 L784.7,272.1 L784.9,271.2 L785.1,270.8 L785.3,270.8 L785.5,270.8 L785.7,271.2 L785.9,270.8 L786.1,270.4 L786.3,271.3 L786.5,269.7 L786.7,270.1 L786.9,268.9 L787.1,269.3 L787.3,270.1 L787.5,271.5 L787.7,271.3 L787.9,270.5 L788.1,270.9 L788.3,270.1 L788.5,269.8 L788.7,270.7 L788.9,271.3 L789.1,270.7 L789.3,271.1 L789.5,271.2 L789.7,271.2 L789.9,272.1 L790.1,271.0 L790.3,270.9 L790.5,271.3 L790.7,271.7 L790.9,270.8 L791.1,269.8 L791.3,270.6 L791.5,269.9 L791.7,269.9 L791.9,270.5 L792.1,271.1 L792.3,269.9 L792.5,270.1 L792.7,271.8 L792.9,272.2 L793.1,271.1 L793.3,271.4 L793.5,270.4 L793.7,270.7 L793.9,270.3 L794.1,270.7 L794.3,271.3 L794.5,271.2 L794.7,270.8 L794.9,270.4 L795.1,269.2 L795.3,268.9 L795.5,270.0 L795.7,270.3 L795.9,271.5 L796.1,270.4 L796.3,270.6 L796.5,270.9 L796.7,269.9 L796.9,270.8 L797.1,270.8 L797.3,269.9 L797.5,269.5 L797.7,270.5 L797.9,271.4 L798.1,270.8 L798.3,271.1 L798.5,270.7 L798.7,271.3 L798.9,270.4 L799.1,270.2 L799.3,269.6 L799.5,269.8 L799.7,269.9 L799.9,270.1 L800.1,271.0 L800.3,270.4 L800.5,270.5 L800.7,269.5 L800.9,271.1 L801.1,270.9 L801.3,270.8 L801.5,270.2 L801.7,270.7 L801.9,270.2 L802.1,271.0 L802.3,270.7 L802.5,271.3 L802.7,270.6 L802.9,270.6 L803.1,270.3 L803.3,270.2 L803.5,269.9 L803.7,271.2 L803.9,270.0 L804.1,269.8 L804.3,269.7 L804.5,270.6 L804.7,271.0 L804.9,271.3 L805.1,270.6 L805.3,270.0 L805.5,270.7 L805.7,269.9 L805.9,270.7 L806.1,270.5 L806.3,270.6 L806.5,271.3 L806.7,270.1 L806.9,271.0 L807.1,270.6 L807.3,270.6 L807.5,270.8 L807.7,271.1 L807.9,270.3 L808.1,269.7 L808.3,270.6 L808.5,269.9 L808.7,270.1 L808.9,269.8 L809.1,270.4 L809.3,269.9 L809.5,269.1 L809.7,270.5 L809.9,270.3 L810.1,272.0 L810.3,270.6 L810.5,270.3 L810.7,270.4 L810.9,270.2 L811.1,270.7 L811.3,271.3 L811.5,271.0 L811.7,271.2 L811.9,271.5 L812.1,270.7 L812.3,271.1 L812.5,271.0 L812.7,271.1 L812.9,269.8 L813.1,270.1 L813.3,270.8 L813.5,270.5 L813.7,270.3 L813.9,271.1 L814.1,270.5 L814.3,271.3 L814.5,271.2 L814.7,270.9 L814.9,271.5 L815.1,271.1 L815.3,270.6 L815.5,269.5 L815.7,269.5 L815.9,270.9 L816.1,270.6 L816.3,269.7 L816.5,270.8 L816.7,269.9 L816.9,266.7 L817.1,260.8 L817.3,248.2 L817.5,245.3 L817.7,242.1 L817.9,245.5 L818.1,253.8 L818.3,245.4 L818.5,248.8 L818.7,245.7 L818.9,246.2 L819.1,253.5 L819.3,249.8 L819.5,254.3 L819.7,242.0 L819.9,243.8 L820.1,245.2 L820.3,241.2 L820.5,241.4 L820.7,245.2 L820.9,250.8 L821.1,255.7 L821.3,246.4 L821.5,245.3 L821.7,244.2 L821.9,245.2 L822.1,246.2 L822.3,241.6 L822.5,252.2 L822.7,254.1 L822.9,249.2 L823.1,245.3 L823.3,249.2 L823.5,248.0 L823.7,253.7 L823.9,246.1 L824.1,251.8 L824.3,252.9 L824.5,252.6 L824.7,254.5 L824.9,253.5 L825.1,255.6 L825.3,252.1 L825.5,251.9 L825.7,256.6 L825.9,255.9 L826.1,249.1 L826.3,258.1 L826.5,256.7 L826.7,248.6 L826.9,253.2 L827.1,253.0 L827.3,246.7 L827.5,240.8 L827.7,237.9 L827.9,246.1 L828.1,252.5 L828.3,247.9 L828.5,247.8 L828.7,244.6 L828.9,246.9 L829.1,249.2 L829.3,247.7 L829.5,250.1 L829.7,241.9 L829.9,234.7 L830.1,230.8 L830.3,243.0 L830.5,247.5 L830.7,247.8 L830.9,248.9 L831.1,249.6 L831.3,251.7 L831.5,247.5 L831.7,254.4 L831.9,252.9 L832.1,259.9 L832.3,257.2 L832.5,256.0 L832.7,258.4 L832.9,250.9 L833.1,257.1 L833.3,260.3 L833.5,259.9 L833.7,259.7 L833.9,258.3 L834.1,257.1 L834.3,262.0 L834.5,258.1 L834.7,258.8 L834.9,261.9 L835.1,264.1 L835.3,265.0 L835.5,266.2 L835.7,267.2 L835.9,267.2 L836.1,268.7 L836.3,269.8 L836.5,270.8 L836.7,270.8 L836.9,270.2 L837.1,269.9 L837.3,269.7 L837.5,269.8 L837.7,270.1 L837.9,269.5 L838.1,270.5 L838.3,270.1 L838.5,269.2 L838.7,270.4 L838.9,270.2 L839.1,270.6 L839.3,270.6 L839.5,271.4 L839.7,270.1 L839.9,269.8 L840.1,270.5 L840.3,271.1 L840.5,270.2 L840.7,270.7 L840.9,270.4 L841.1,269.8 L841.3,269.2 L841.5,268.4 L841.7,269.1 L841.9,266.9 L842.1,266.0 L842.3,266.1 L842.5,265.3 L842.7,266.2 L842.9,266.4 L843.1,267.1 L843.3,260.2 L843.5,246.2 L843.7,232.2 L843.9,246.2 L844.1,260.2 L844.3,267.7 L844.5,267.1 L844.7,267.0 L844.9,266.6 L845.1,266.8 L845.3,266.8 L845.5,267.0 L845.7,268.0 L845.9,268.4 L846.1,268.3 L846.3,269.5 L846.5,270.1 L846.7,269.8 L846.9,269.8 L847.1,270.7 L847.3,270.6 L847.5,270.5 L847.7,270.1 L847.9,270.0 L848.1,271.5 L848.3,270.8 L848.5,270.6 L848.7,271.1 L848.9,271.5 L849.1,271.2 L849.3,271.4 L849.5,270.0 L849.7,270.1 L849.9,270.1 L850.1,270.4 L850.3,271.4 L850.5,272.0 L850.7,271.6 L850.9,271.5 L851.1,271.3 L851.3,270.4 L851.5,270.1 L851.7,270.9 L851.9,270.9 L852.1,271.8 L852.3,269.9 L852.5,270.4 L852.7,271.1 L852.9,271.0 L853.1,270.4 L853.3,270.1 L853.5,270.6 L853.7,269.5 L853.9,269.8 L854.1,270.3 L854.3,269.6 L854.5,270.6 L854.7,270.3 L854.9,270.3 L855.1,270.7 L855.3,270.8 L855.5,271.3 L855.7,270.8 L855.9,270.9 L856.1,271.9 L856.3,270.8 L856.5,270.1 L856.7,269.9 L856.9,269.5 L857.1,270.6 L857.3,271.0 L857.5,270.1 L857.7,270.3 L857.9,270.8 L858.1,267.2 L858.3,265.8 L858.5,262.1 L858.7,258.7 L858.9,260.1 L859.1,259.7 L859.3,255.1 L859.5,250.2 L859.7,243.1 L859.9,238.3 L860.1,239.1 L860.3,235.7 L860.5,233.6 L860.7,240.4 L860.9,243.7 L861.1,244.1 L861.3,245.1 L861.5,250.2 L861.7,247.6 L861.9,250.4 L862.1,249.1 L862.3,243.3 L862.5,244.4 L862.7,249.0 L862.9,248.4 L863.1,246.7 L863.3,247.2 L863.5,244.2 L863.7,253.3 L863.9,245.2 L864.1,251.6 L864.3,246.2 L864.5,253.9 L864.7,244.7 L864.9,242.2 L865.1,241.2 L865.3,237.1 L865.5,241.0 L865.7,240.9 L865.9,245.4 L866.1,248.4 L866.3,252.2 L866.5,249.7 L866.7,246.1 L866.9,244.4 L867.1,250.4 L867.3,251.5 L867.5,255.2 L867.7,255.0 L867.9,252.8 L868.1,250.1 L868.3,247.7 L868.5,252.7 L868.7,257.2 L868.9,248.2 L869.1,251.5 L869.3,254.3 L869.5,253.7 L869.7,254.5 L869.9,252.5 L870.1,252.6 L870.3,258.5 L870.5,258.2 L870.7,255.0 L870.9,257.0 L871.1,254.8 L871.3,259.7 L871.5,254.5 L871.7,256.1 L871.9,262.0 L872.1,257.3 L872.3,261.3 L872.5,259.9 L872.7,259.7 L872.9,259.4 L873.1,259.0 L873.3,264.7 L873.5,263.5 L873.7,264.5 L873.9,264.3 L874.1,263.2 L874.3,258.1 L874.5,261.8 L874.7,265.0 L874.9,260.9 L875.1,264.1 L875.3,265.2 L875.5,266.5 L875.7,266.7 L875.9,267.9 L876.1,267.9 L876.3,270.4 L876.5,271.1 L876.7,270.3 L876.9,269.7 L877.1,270.1 L877.3,271.6 L877.5,270.4 L877.7,271.1 L877.9,271.4 L878.1,270.7 L878.3,270.8 L878.5,271.3 L878.7,270.9 L878.9,270.2 L879.1,270.8 L879.3,270.2 L879.5,270.4 L879.7,270.5 L879.9,270.8 L880.1,270.8 L880.3,270.9 L880.5,271.0 L880.7,270.5 L880.9,270.3 L881.1,270.2 L881.3,271.0 L881.5,270.3 L881.7,270.4 L881.9,270.7 L882.1,269.8 L882.3,271.3 L882.5,270.6 L882.7,271.3 L882.9,269.9 L883.1,269.7 L883.3,270.5 L883.5,270.6 L883.7,270.3 L883.9,271.6 L884.1,270.9 L884.3,271.6 L884.5,270.3 L884.7,269.6 L884.9,270.5 L885.1,269.1 L885.3,266.6 L885.5,267.4 L885.7,269.1 L885.9,271.1 L886.1,270.9 L886.3,269.5 L886.5,269.9 L886.7,270.1 L886.9,270.2 L887.1,271.1 L887.3,271.4 L887.5,270.5 L887.7,270.3 L887.9,270.3 L888.1,270.2 L888.3,271.3 L888.5,270.4 L888.7,270.5 L888.9,271.5 L889.1,271.1 L889.3,270.0 L889.5,270.9 L889.7,269.7 L889.9,268.6 L890.1,268.0 L890.3,269.7 L890.5,271.0 L890.7,269.8 L890.9,271.3 L891.1,271.2 L891.3,269.6 L891.5,270.2 L891.7,270.2 L891.9,270.7 L892.1,270.4 L892.3,271.0 L892.5,270.4 L892.7,270.5 L892.9,270.7 L893.1,270.2 L893.3,269.5 L893.5,270.8 L893.7,270.9 L893.9,270.0 L894.1,269.5 L894.3,270.4 L894.5,270.2 L894.7,269.1 L894.9,266.6 L895.1,267.4 L895.3,269.1 L895.5,270.4 L895.7,271.0 L895.9,270.8 L896.1,271.1 L896.3,271.0 L896.5,270.9 L896.7,271.3 L896.9,270.2 L897.1,270.3 L897.3,269.7 L897.5,271.2 L897.7,271.1 L897.9,270.8 L898.1,268.2 L898.3,270.5 L898.5,270.8 L898.7,270.8 L898.9,270.2 L899.1,270.7 L899.3,269.9 L899.5,270.5 L899.7,271.5 L899.9,271.1 L900.1,269.2 L900.3,268.6 L900.5,268.0 L900.7,268.0 L900.9,267.7 L901.1,266.7 L901.3,265.9 L901.5,267.5 L901.7,266.1 L901.9,264.5 L902.1,263.7 L902.3,266.1 L902.5,267.5 L902.7,268.2 L902.9,266.9 L903.1,266.9 L903.3,265.5 L903.5,265.8 L903.7,266.4 L903.9,268.5 L904.1,267.9 L904.3,266.9 L904.5,267.8 L904.7,268.5 L904.9,267.6 L905.1,267.8 L905.3,268.3 L905.5,267.9 L905.7,267.9 L905.9,267.5 L906.1,267.5 L906.3,267.4 L906.5,267.1 L906.7,267.0 L906.9,263.7 L907.1,267.5 L907.3,267.5 L907.5,267.4 L907.7,268.8 L907.9,268.7 L908.1,268.0 L908.3,267.9 L908.5,267.1 L908.7,267.4 L908.9,267.1 L909.1,266.8 L909.3,267.1 L909.5,267.7 L909.7,268.7 L909.9,267.5 L910.1,267.7 L910.3,268.0 L910.5,267.6 L910.7,268.1 L910.9,268.1 L911.1,268.1 L911.3,268.8 L911.5,268.3 L911.7,267.9 L911.9,267.2 L912.1,267.4 L912.3,266.5 L912.5,266.5 L912.7,267.3 L912.9,267.2 L913.1,266.9 L913.3,267.5 L913.5,266.8 L913.7,265.1 L913.9,267.4 L914.1,265.0 L914.3,262.2 L914.5,260.8 L914.7,265.0 L914.9,267.5 L915.1,267.1 L915.3,268.1 L915.5,268.8 L915.7,268.9 L915.9,270.9 L916.1,271.5 L916.3,271.6 L916.5,271.5 L916.7,270.4 L916.9,269.3 L917.1,270.2 L917.3,270.5 L917.5,270.9 L917.7,271.1 L917.9,271.5 L918.1,270.3 L918.3,270.8 L918.5,270.8 L918.7,270.5 L918.9,270.5 L919.1,270.6 L919.3,270.7 L919.5,271.7 L919.7,270.9 L919.9,270.6 L920.1,270.3 L920.3,271.1 L920.5,266.4 L920.7,270.2 L920.9,270.3 L921.1,271.5 L921.3,270.7 L921.5,271.9 L921.7,271.0 L921.9,271.2 L922.1,270.6 L922.3,270.6 L922.5,269.9 L922.7,270.4 L922.9,270.4 L923.1,271.1 L923.3,271.1 L923.5,271.9 L923.7,271.1 L923.9,271.5 L924.1,270.7 L924.3,270.5 L924.5,269.7 L924.7,270.0 L924.9,270.1 L925.1,269.5 L925.3,270.1 L925.5,269.7 L925.7,269.6 L925.9,269.3 L926.1,269.9 L926.3,270.0 L926.5,270.6 L926.7,269.9 L926.9,271.1 L927.1,271.1 L927.3,270.8 L927.5,270.6 L927.7,270.4 L927.9,270.3 L928.1,270.4 L928.3,268.5 L928.5,268.9 L928.7,270.4 L928.9,270.8 L929.1,270.1 L929.3,269.3 L929.5,269.1 L929.7,268.0 L929.9,269.1 L930.1,270.2 L930.3,269.4 L930.5,270.9 L930.7,270.7 L930.9,271.3 L931.1,271.4 L931.3,271.0 L931.5,270.6 L931.7,269.8 L931.9,271.2 L932.1,270.6 L932.3,270.1 L932.5,270.0 L932.7,271.3 L932.9,270.9 L933.1,269.9 L933.3,270.6 L933.5,270.4 L933.7,270.2 L933.9,270.1 L934.1,271.5 L934.3,271.1 L934.5,271.1 L934.7,270.8 L934.9,270.2 L935.1,270.2 L935.3,270.1 L935.5,270.2 L935.7,270.2 L935.9,270.4 L936.1,269.7 L936.3,269.8 L936.5,270.8 L936.7,270.8 L936.9,271.3 L937.1,270.5 L937.3,270.5 L937.5,271.2 L937.7,269.3 L937.9,270.5 L938.1,271.1 L938.3,271.0 L938.5,268.9 L938.7,266.5 L938.9,265.7 L939.1,266.8 L939.3,260.5 L939.5,260.3 L939.7,259.6 L939.9,253.9 L940.1,262.4 L940.3,257.0 L940.5,257.5 L940.7,252.1 L940.9,245.4 L941.1,247.0 L941.3,245.9 L941.5,246.8 L941.7,247.0 L941.9,246.5 L942.1,247.1 L942.3,248.8 L942.5,254.3 L942.7,251.5 L942.9,256.9 L943.1,254.1 L943.3,254.9 L943.5,252.4 L943.7,248.2 L943.9,251.2 L944.1,250.1 L944.3,253.4 L944.5,256.0 L944.7,252.8 L944.9,254.5 L945.1,259.0 L945.3,256.4 L945.5,256.0 L945.7,254.0 L945.9,253.2 L946.1,257.0 L946.3,253.5 L946.5,261.4 L946.7,251.9 L946.9,258.4 L947.1,255.1 L947.3,250.9 L947.5,255.2 L947.7,255.0 L947.9,254.1 L948.1,253.7 L948.3,255.1 L948.5,252.3 L948.7,255.9 L948.9,257.2 L949.1,257.2 L949.3,256.8 L949.5,259.6 L949.7,259.2 L949.9,259.5 L950.1,255.0 L950.3,257.7 L950.5,258.3 L950.7,251.2 L950.9,254.8 L951.1,254.2 L951.3,264.7 L951.5,259.5 L951.7,257.0 L951.9,256.4 L952.1,257.3 L952.3,259.1 L952.5,262.9 L952.7,257.7 L952.9,259.6 L953.1,263.8 L953.3,256.7 L953.5,254.7 L953.7,270.9" stroke="#3b80d8" stroke-width="1.15" fill="none" stroke-linejoin="round"/>
 <path d="M81.6 148V293.3H953.7" stroke="#c8c8c8" stroke-width="0.8" fill="none"/><path d="M953.6 148V293.3" stroke="#d0d0d0" stroke-width="0.7"/>
</svg>

<!-- analysis -->
<div class="a" style="left:63px;top:315.5px;width:913.5px;height:16.6px;background:#3b86de;border-radius:2px"></div>

<div class="gcard" style="top:337px"></div>
<div class="gcard" style="top:387.4px"></div>
<div class="gcard" style="top:437.8px"></div>
<div class="gcard" style="top:488.2px"></div>

<!-- table card -->
<div class="card" style="left:272px;top:337px;width:287px;height:197px"></div>
<div class="a" style="left:274px;top:366px;width:283.5px;height:0.8px;background:#dddddd"></div>
<div class="a" style="left:274px;top:365.6px;width:85px;height:1.2px;background:#333"></div>
<svg class="a" style="left:314px;top:363px" width="5" height="3" viewBox="0 0 5 3"><path d="M0.5 2.8L2.5 0.5L4.5 2.8Z" fill="#333"/></svg>
<div class="a" style="left:274px;top:378.30px;width:281px;height:0.7px;background:#f1f1f1"></div>
<div class="a" style="left:274px;top:391.10px;width:281px;height:0.7px;background:#f1f1f1"></div>
<div class="a" style="left:274px;top:403.90px;width:281px;height:0.7px;background:#f1f1f1"></div>
<div class="a" style="left:274px;top:416.70px;width:281px;height:0.7px;background:#f1f1f1"></div>
<div class="a" style="left:274px;top:429.50px;width:281px;height:0.7px;background:#f1f1f1"></div>
<div class="a" style="left:274px;top:442.30px;width:281px;height:0.7px;background:#f1f1f1"></div>
<div class="a" style="left:274px;top:455.10px;width:281px;height:0.7px;background:#f1f1f1"></div>
<div class="a" style="left:274px;top:467.90px;width:281px;height:0.7px;background:#f1f1f1"></div>
<div class="a" style="left:274px;top:480.70px;width:281px;height:0.7px;background:#f1f1f1"></div>
<div class="a" style="left:274px;top:493.50px;width:281px;height:0.7px;background:#f1f1f1"></div>
<div class="a" style="left:274px;top:506.30px;width:281px;height:0.7px;background:#f1f1f1"></div>
<div class="a" style="left:274px;top:519.10px;width:281px;height:0.7px;background:#f1f1f1"></div>

<!-- bar charts -->
<div class="card" style="left:564.5px;top:337px;width:412.5px;height:88.5px"></div>
<div class="card" style="left:564.5px;top:431px;width:412.5px;height:102.5px"></div>
<svg class="a" style="left:0;top:0" width="1024" height="560" viewBox="0 0 1024 560">
 <rect x="578.35" y="389.72" width="21.96" height="25.18" fill="#3b84dd"/>
<rect x="603.21" y="364.96" width="21.96" height="49.94" fill="#3b84dd"/>
<rect x="628.06" y="363.18" width="21.96" height="51.72" fill="#3b84dd"/>
<rect x="652.92" y="364.68" width="21.96" height="50.22" fill="#3b84dd"/>
<rect x="677.78" y="359.61" width="21.96" height="55.29" fill="#3b84dd"/>
<rect x="702.63" y="376.05" width="21.96" height="38.85" fill="#3b84dd"/>
<rect x="727.49" y="373.81" width="21.96" height="41.09" fill="#3b84dd"/>
<rect x="752.34" y="384.11" width="21.96" height="30.79" fill="#3b84dd"/>
<rect x="777.20" y="379.74" width="21.96" height="35.16" fill="#3b84dd"/>
<rect x="802.06" y="405.82" width="21.96" height="9.08" fill="#3b84dd"/>
<rect x="826.91" y="385.72" width="21.96" height="29.18" fill="#3b84dd"/>
<rect x="851.77" y="390.11" width="21.96" height="24.79" fill="#3b84dd"/>
<rect x="876.62" y="389.98" width="21.96" height="24.92" fill="#3b84dd"/>
<rect x="901.48" y="386.31" width="21.96" height="28.59" fill="#3b84dd"/>
<rect x="926.34" y="363.63" width="21.96" height="51.27" fill="#3b84dd"/>
<rect x="951.19" y="364.19" width="21.96" height="50.71" fill="#3b84dd"/>
<g stroke="rgba(0,0,0,0.09)" stroke-width="0.6">
<path d="M576.9 409.04H974.6"/>
<path d="M576.9 403.18H974.6"/>
<path d="M576.9 397.32H974.6"/>
<path d="M576.9 391.46H974.6"/>
<path d="M576.9 385.60H974.6"/>
<path d="M576.9 379.74H974.6"/>
<path d="M576.9 373.88H974.6"/>
<path d="M576.9 368.02H974.6"/>
<path d="M576.9 362.16H974.6"/>
<path d="M576.9 356.30H974.6"/>
</g>
<path d="M576.9 414.90H974.6" stroke="#cccccc" stroke-width="0.6"/>
<rect x="578.35" y="491.15" width="21.96" height="31.65" fill="#3b84dd"/>
<rect x="603.21" y="463.90" width="21.96" height="58.90" fill="#3b84dd"/>
<rect x="628.06" y="479.63" width="21.96" height="43.17" fill="#3b84dd"/>
<rect x="652.92" y="465.12" width="21.96" height="57.68" fill="#3b84dd"/>
<rect x="677.78" y="457.41" width="21.96" height="65.39" fill="#3b84dd"/>
<rect x="702.63" y="482.94" width="21.96" height="39.86" fill="#3b84dd"/>
<rect x="727.49" y="487.67" width="21.96" height="35.13" fill="#3b84dd"/>
<rect x="752.34" y="476.07" width="21.96" height="46.73" fill="#3b84dd"/>
<rect x="777.20" y="481.01" width="21.96" height="41.79" fill="#3b84dd"/>
<rect x="802.06" y="504.73" width="21.96" height="18.07" fill="#3b84dd"/>
<rect x="826.91" y="495.24" width="21.96" height="27.56" fill="#3b84dd"/>
<rect x="851.77" y="478.64" width="21.96" height="44.16" fill="#3b84dd"/>
<rect x="876.62" y="482.01" width="21.96" height="40.79" fill="#3b84dd"/>
<rect x="901.48" y="480.33" width="21.96" height="42.47" fill="#3b84dd"/>
<rect x="926.34" y="481.64" width="21.96" height="41.16" fill="#3b84dd"/>
<rect x="951.19" y="483.09" width="21.96" height="39.71" fill="#3b84dd"/>
<g stroke="rgba(0,0,0,0.09)" stroke-width="0.6">
<path d="M576.9 513.67H974.6"/>
<path d="M576.9 504.55H974.6"/>
<path d="M576.9 495.42H974.6"/>
<path d="M576.9 486.30H974.6"/>
<path d="M576.9 477.17H974.6"/>
<path d="M576.9 468.05H974.6"/>
<path d="M576.9 458.92H974.6"/>
<path d="M576.9 449.80H974.6"/>
</g>
<path d="M576.9 522.80H974.6" stroke="#cccccc" stroke-width="0.6"/>
</svg>

<div class="a" style="left:63px;top:538.6px;width:913.5px;height:2.4px;background:#3b86de"></div>
<svg class="a" style="left:0;top:0" width="1024" height="560" viewBox="0 0 1024 560">
 <path d="M91.2 5.4L94 8.2M94 5.4L91.2 8.2" stroke="#5f6368" stroke-width="0.75"/>
 <path d="M107.8 4.3V9.3M105.3 6.8H110.3" stroke="#5f6368" stroke-width="0.8"/>
 <g fill="#666"><circle cx="1014.8" cy="54.6" r="0.55"/><circle cx="1017.9" cy="54.6" r="0.55"/><circle cx="1021" cy="54.6" r="0.55"/></g>
 <g fill="#999"><circle cx="967.3" cy="114.2" r="0.55"/><circle cx="969.9" cy="114.2" r="0.55"/><circle cx="972.5" cy="114.2" r="0.55"/></g>
 <g fill="#777"><circle cx="549.8" cy="344.6" r="0.55"/><circle cx="552.4" cy="344.6" r="0.55"/><circle cx="555" cy="344.6" r="0.55"/></g>
</svg>
<svg class="a" style="left:0;top:0;will-change:transform" width="1024" height="560" viewBox="0 0 1024 560" font-family="Liberation Sans">
<text transform="translate(17.80,8.80) scale(0.818,1)" font-size="5.67" fill="#5f6368">Dashboards</text>
<text transform="translate(70.10,22.85) scale(0.902,1)" font-size="5.96" fill="#5f6368">Not secure</text>
<text transform="translate(103.70,22.85) scale(0.926,1)" font-size="5.96" fill="#5f6368"><tspan fill="#202124">dev-dma-06_3</tspan><tspan fill="#676b70">/dashboard/#/db/Reference%20Dashboards/GQI%20Use%20cases/Time%20pattern/Interface%20Dashboard.dmadb?timespan=~0months%2F0ms%1D1625090400000%2F1626967212983</tspan></text>
<text transform="translate(25.90,41.90) scale(0.763,1)" font-size="9.45" fill="#eaf4e3">DASHBOARDS</text>
<text transform="translate(270.00,40.00) scale(0.902,1)" font-size="6.10" fill="#cfe4c0">Search for dashboards</text>
<text transform="translate(34.50,56.50) scale(0.729,1)" font-size="6.83" fill="#4a4a4a">INTERFACE DASHBOARD</text>
<text transform="translate(978.75,57.00) scale(0.806,1)" font-size="6.98" fill="#444">Start editing</text>
<text transform="translate(484.20,74.70) scale(0.904,1)" font-size="6.76" fill="#5e5e5e">Jul 1 00:00 - Jul 22 17:20</text>
<text transform="translate(365.28,90.20) scale(0.867,1)" font-size="6.25" fill="#5e5e5e">This week so far</text>
<text transform="translate(424.47,90.20) scale(0.867,1)" font-size="6.25" fill="#5e5e5e">This month so far</text>
<text transform="translate(485.93,90.20) scale(0.867,1)" font-size="6.25" fill="#5e5e5e">Previous week</text>
<text transform="translate(540.73,90.20) scale(0.867,1)" font-size="6.25" fill="#5e5e5e">Previous month</text>
<text transform="translate(597.99,90.20) scale(0.867,1)" font-size="6.25" fill="#5e5e5e">Last 7 days</text>
<text transform="translate(644.39,90.20) scale(0.867,1)" font-size="6.25" fill="#5e5e5e">Last 30 days</text>
<text transform="translate(66.10,116.70) scale(0.948,1)" font-size="6.83" fill="#4d4d4d">Time pattern Bandwidth Utilization</text>
<text transform="translate(65.60,129.40) scale(0.986,1)" font-size="6.10" fill="#4d4d4d">Parameters</text>
<text transform="translate(68.80,143.10) scale(0.853,1)" font-size="5.52" fill="#333" font-weight="bold">Mbps</text>
<text transform="translate(73.83,288.38) scale(0.850,1)" font-size="4.94" fill="#555">-50</text>
<text transform="translate(77.56,274.05) scale(0.850,1)" font-size="4.94" fill="#555">0</text>
<text transform="translate(75.23,259.73) scale(0.850,1)" font-size="4.94" fill="#555">50</text>
<text transform="translate(72.89,245.40) scale(0.850,1)" font-size="4.94" fill="#555">100</text>
<text transform="translate(72.89,231.08) scale(0.850,1)" font-size="4.94" fill="#555">150</text>
<text transform="translate(72.89,216.75) scale(0.850,1)" font-size="4.94" fill="#555">200</text>
<text transform="translate(72.89,202.43) scale(0.850,1)" font-size="4.94" fill="#555">250</text>
<text transform="translate(72.89,188.10) scale(0.850,1)" font-size="4.94" fill="#555">300</text>
<text transform="translate(72.89,173.78) scale(0.850,1)" font-size="4.94" fill="#555">350</text>
<text transform="translate(72.89,159.45) scale(0.850,1)" font-size="4.94" fill="#555">400</text>
<text transform="translate(66.07,298.80) scale(0.810,1)" font-size="4.65" fill="#555">01 Jul</text>
<text transform="translate(116.57,298.80) scale(0.810,1)" font-size="4.65" fill="#555">02 Jul</text>
<text transform="translate(156.77,298.80) scale(0.810,1)" font-size="4.65" fill="#555">03 Jul</text>
<text transform="translate(196.97,298.80) scale(0.810,1)" font-size="4.65" fill="#555">04 Jul</text>
<text transform="translate(237.17,298.80) scale(0.810,1)" font-size="4.65" fill="#555">05 Jul</text>
<text transform="translate(277.37,298.80) scale(0.810,1)" font-size="4.65" fill="#555">06 Jul</text>
<text transform="translate(317.57,298.80) scale(0.810,1)" font-size="4.65" fill="#555">07 Jul</text>
<text transform="translate(357.77,298.80) scale(0.810,1)" font-size="4.65" fill="#555">08 Jul</text>
<text transform="translate(397.97,298.80) scale(0.810,1)" font-size="4.65" fill="#555">09 Jul</text>
<text transform="translate(438.17,298.80) scale(0.810,1)" font-size="4.65" fill="#555">10 Jul</text>
<text transform="translate(478.51,298.80) scale(0.810,1)" font-size="4.65" fill="#555">11 Jul</text>
<text transform="translate(518.57,298.80) scale(0.810,1)" font-size="4.65" fill="#555">12 Jul</text>
<text transform="translate(558.77,298.80) scale(0.810,1)" font-size="4.65" fill="#555">13 Jul</text>
<text transform="translate(598.97,298.80) scale(0.810,1)" font-size="4.65" fill="#555">14 Jul</text>
<text transform="translate(639.17,298.80) scale(0.810,1)" font-size="4.65" fill="#555">15 Jul</text>
<text transform="translate(679.37,298.80) scale(0.810,1)" font-size="4.65" fill="#555">16 Jul</text>
<text transform="translate(719.57,298.80) scale(0.810,1)" font-size="4.65" fill="#555">17 Jul</text>
<text transform="translate(759.77,298.80) scale(0.810,1)" font-size="4.65" fill="#555">18 Jul</text>
<text transform="translate(799.97,298.80) scale(0.810,1)" font-size="4.65" fill="#555">19 Jul</text>
<text transform="translate(840.17,298.80) scale(0.810,1)" font-size="4.65" fill="#555">20 Jul</text>
<text transform="translate(880.37,298.80) scale(0.810,1)" font-size="4.65" fill="#555">21 Jul</text>
<text transform="translate(920.57,298.80) scale(0.810,1)" font-size="4.65" fill="#555">22 Jul</text>
<text transform="translate(67.40,328.80) scale(0.941,1)" font-size="9.59" fill="#ffffff">Analysis</text>
<text transform="translate(66.00,346.90) scale(0.985,1)" font-size="6.54" fill="#ffffff">Overall average bandwidth utilization</text>
<text transform="translate(124.60,372.00) scale(0.953,1)" font-size="16.28" fill="#ffffff">31.357 Mbps</text>
<text transform="translate(66.00,397.30) scale(0.995,1)" font-size="6.54" fill="#ffffff">Overall maximum bandwidth utilization</text>
<text transform="translate(120.00,422.40) scale(0.973,1)" font-size="16.28" fill="#ffffff">358.311 Mbps</text>
<text transform="translate(66.00,447.70) scale(0.969,1)" font-size="6.54" fill="#ffffff">Business hours average bandwidth utilization</text>
<text transform="translate(124.50,472.80) scale(0.959,1)" font-size="16.28" fill="#ffffff">63.852 Mbps</text>
<text transform="translate(66.00,498.10) scale(0.972,1)" font-size="6.54" fill="#ffffff">Business hours max bandwidth utilization</text>
<text transform="translate(120.30,523.20) scale(0.968,1)" font-size="16.28" fill="#ffffff">358.311 Mbps</text>
<text transform="translate(275.10,347.00) scale(0.956,1)" font-size="6.69" fill="#4d4d4d">Average Bandwidth utilization during business hours</text>
<text transform="translate(311.00,361.90) scale(0.861,1)" font-size="4.65" fill="#333" font-weight="bold">DATE</text>
<text transform="translate(376.30,361.90) scale(0.946,1)" font-size="4.65" fill="#333" font-weight="bold">AVG(IF UTILIZATION (AVG))</text>
<text transform="translate(460.70,361.90) scale(0.976,1)" font-size="4.65" fill="#333" font-weight="bold">MAX(IF UTILIZATION (MAX))</text>
<text transform="translate(306.86,375.10) scale(0.840,1)" font-size="5.65" fill="#555">7/1/2021</text>
<text transform="translate(391.76,375.10) scale(0.780,1)" font-size="5.65" fill="#555">42.971 Mbps</text>
<text transform="translate(476.68,375.10) scale(0.800,1)" font-size="5.65" fill="#555">173.439 Mbps</text>
<text transform="translate(306.86,387.90) scale(0.840,1)" font-size="5.65" fill="#555">7/2/2021</text>
<text transform="translate(391.76,387.90) scale(0.780,1)" font-size="5.65" fill="#555">52.535 Mbps</text>
<text transform="translate(476.68,387.90) scale(0.800,1)" font-size="5.65" fill="#555">256.045 Mbps</text>
<text transform="translate(306.86,400.70) scale(0.840,1)" font-size="5.65" fill="#555">7/5/2021</text>
<text transform="translate(391.76,400.70) scale(0.780,1)" font-size="5.65" fill="#555">42.310 Mbps</text>
<text transform="translate(476.68,400.70) scale(0.800,1)" font-size="5.65" fill="#555">241.970 Mbps</text>
<text transform="translate(306.86,413.50) scale(0.840,1)" font-size="5.65" fill="#555">7/6/2021</text>
<text transform="translate(391.76,413.50) scale(0.780,1)" font-size="5.65" fill="#555">42.520 Mbps</text>
<text transform="translate(476.68,413.50) scale(0.800,1)" font-size="5.65" fill="#555">223.512 Mbps</text>
<text transform="translate(306.86,426.30) scale(0.840,1)" font-size="5.65" fill="#555">7/7/2021</text>
<text transform="translate(391.76,426.30) scale(0.780,1)" font-size="5.65" fill="#555">48.796 Mbps</text>
<text transform="translate(476.68,426.30) scale(0.800,1)" font-size="5.65" fill="#555">232.689 Mbps</text>
<text transform="translate(306.86,439.10) scale(0.840,1)" font-size="5.65" fill="#555">7/8/2021</text>
<text transform="translate(391.76,439.10) scale(0.780,1)" font-size="5.65" fill="#555">87.495 Mbps</text>
<text transform="translate(476.68,439.10) scale(0.800,1)" font-size="5.65" fill="#555">225.516 Mbps</text>
<text transform="translate(306.86,451.90) scale(0.840,1)" font-size="5.65" fill="#555">7/9/2021</text>
<text transform="translate(391.76,451.90) scale(0.780,1)" font-size="5.65" fill="#555">86.536 Mbps</text>
<text transform="translate(476.68,451.90) scale(0.800,1)" font-size="5.65" fill="#555">217.584 Mbps</text>
<text transform="translate(305.54,464.70) scale(0.840,1)" font-size="5.65" fill="#555">7/12/2021</text>
<text transform="translate(391.76,464.70) scale(0.780,1)" font-size="5.65" fill="#555">85.223 Mbps</text>
<text transform="translate(476.68,464.70) scale(0.800,1)" font-size="5.65" fill="#555">322.740 Mbps</text>
<text transform="translate(305.54,477.50) scale(0.840,1)" font-size="5.65" fill="#555">7/13/2021</text>
<text transform="translate(391.76,477.50) scale(0.780,1)" font-size="5.65" fill="#555">88.264 Mbps</text>
<text transform="translate(476.68,477.50) scale(0.800,1)" font-size="5.65" fill="#555">236.554 Mbps</text>
<text transform="translate(305.54,490.30) scale(0.840,1)" font-size="5.65" fill="#555">7/14/2021</text>
<text transform="translate(391.76,490.30) scale(0.780,1)" font-size="5.65" fill="#555">85.699 Mbps</text>
<text transform="translate(476.68,490.30) scale(0.800,1)" font-size="5.65" fill="#555">316.057 Mbps</text>
<text transform="translate(305.54,503.10) scale(0.840,1)" font-size="5.65" fill="#555">7/15/2021</text>
<text transform="translate(391.76,503.10) scale(0.780,1)" font-size="5.65" fill="#555">94.349 Mbps</text>
<text transform="translate(476.84,503.10) scale(0.800,1)" font-size="5.65" fill="#555">358.311 Mbps</text>
<text transform="translate(305.54,515.90) scale(0.840,1)" font-size="5.65" fill="#555">7/16/2021</text>
<text transform="translate(391.76,515.90) scale(0.780,1)" font-size="5.65" fill="#555">66.290 Mbps</text>
<text transform="translate(476.68,515.90) scale(0.800,1)" font-size="5.65" fill="#555">218.412 Mbps</text>
<text transform="translate(305.54,528.70) scale(0.840,1)" font-size="5.65" fill="#555">7/19/2021</text>
<text transform="translate(391.76,528.70) scale(0.780,1)" font-size="5.65" fill="#555">70.124 Mbps</text>
<text transform="translate(476.68,528.70) scale(0.800,1)" font-size="5.65" fill="#555">192.520 Mbps</text>
<text transform="translate(567.20,346.90) scale(0.955,1)" font-size="6.69" fill="#4d4d4d">Average Bandwidth utilization during business hours</text>
<text transform="translate(567.20,440.60) scale(0.961,1)" font-size="6.69" fill="#4d4d4d">Maximum Bandwidth utilization during business hours</text>
<text transform="translate(572.37,416.45) scale(1.000,1)" font-size="4.38" fill="#4a4a4a">0</text>
<text transform="translate(569.93,410.59) scale(1.000,1)" font-size="4.38" fill="#4a4a4a">10</text>
<text transform="translate(569.93,404.73) scale(1.000,1)" font-size="4.38" fill="#4a4a4a">20</text>
<text transform="translate(569.93,398.87) scale(1.000,1)" font-size="4.38" fill="#4a4a4a">30</text>
<text transform="translate(569.93,393.01) scale(1.000,1)" font-size="4.38" fill="#4a4a4a">40</text>
<text transform="translate(569.93,387.15) scale(1.000,1)" font-size="4.38" fill="#4a4a4a">50</text>
<text transform="translate(569.93,381.29) scale(1.000,1)" font-size="4.38" fill="#4a4a4a">60</text>
<text transform="translate(569.93,375.43) scale(1.000,1)" font-size="4.38" fill="#4a4a4a">70</text>
<text transform="translate(569.93,369.57) scale(1.000,1)" font-size="4.38" fill="#4a4a4a">80</text>
<text transform="translate(569.93,363.71) scale(1.000,1)" font-size="4.38" fill="#4a4a4a">90</text>
<text transform="translate(567.50,357.85) scale(1.000,1)" font-size="4.38" fill="#4a4a4a">100</text>
<text transform="translate(580.53,421.20) scale(1.000,1)" font-size="4.52" fill="#555">7/1/2021</text>
<text transform="translate(604.13,421.20) scale(1.000,1)" font-size="4.52" fill="#555">7/12/2021</text>
<text transform="translate(628.99,421.20) scale(1.000,1)" font-size="4.52" fill="#555">7/13/2021</text>
<text transform="translate(653.84,421.20) scale(1.000,1)" font-size="4.52" fill="#555">7/14/2021</text>
<text transform="translate(678.70,421.20) scale(1.000,1)" font-size="4.52" fill="#555">7/15/2021</text>
<text transform="translate(703.56,421.20) scale(1.000,1)" font-size="4.52" fill="#555">7/16/2021</text>
<text transform="translate(728.41,421.20) scale(1.000,1)" font-size="4.52" fill="#555">7/19/2021</text>
<text transform="translate(754.52,421.20) scale(1.000,1)" font-size="4.52" fill="#555">7/2/2021</text>
<text transform="translate(778.12,421.20) scale(1.000,1)" font-size="4.52" fill="#555">7/20/2021</text>
<text transform="translate(802.98,421.20) scale(1.000,1)" font-size="4.52" fill="#555">7/21/2021</text>
<text transform="translate(827.84,421.20) scale(1.000,1)" font-size="4.52" fill="#555">7/22/2021</text>
<text transform="translate(853.95,421.20) scale(1.000,1)" font-size="4.52" fill="#555">7/5/2021</text>
<text transform="translate(878.81,421.20) scale(1.000,1)" font-size="4.52" fill="#555">7/6/2021</text>
<text transform="translate(903.66,421.20) scale(1.000,1)" font-size="4.52" fill="#555">7/7/2021</text>
<text transform="translate(928.52,421.20) scale(1.000,1)" font-size="4.52" fill="#555">7/8/2021</text>
<text transform="translate(953.37,421.20) scale(1.000,1)" font-size="4.52" fill="#555">7/9/2021</text>
<text transform="translate(572.37,524.35) scale(1.000,1)" font-size="4.38" fill="#4a4a4a">0</text>
<text transform="translate(569.93,515.22) scale(1.000,1)" font-size="4.38" fill="#4a4a4a">50</text>
<text transform="translate(567.50,506.10) scale(1.000,1)" font-size="4.38" fill="#4a4a4a">100</text>
<text transform="translate(567.50,496.97) scale(1.000,1)" font-size="4.38" fill="#4a4a4a">150</text>
<text transform="translate(567.50,487.85) scale(1.000,1)" font-size="4.38" fill="#4a4a4a">200</text>
<text transform="translate(567.50,478.72) scale(1.000,1)" font-size="4.38" fill="#4a4a4a">250</text>
<text transform="translate(567.50,469.60) scale(1.000,1)" font-size="4.38" fill="#4a4a4a">300</text>
<text transform="translate(567.50,460.47) scale(1.000,1)" font-size="4.38" fill="#4a4a4a">350</text>
<text transform="translate(567.50,451.35) scale(1.000,1)" font-size="4.38" fill="#4a4a4a">400</text>
<text transform="translate(580.53,529.20) scale(1.000,1)" font-size="4.52" fill="#555">7/1/2021</text>
<text transform="translate(604.13,529.20) scale(1.000,1)" font-size="4.52" fill="#555">7/12/2021</text>
<text transform="translate(628.99,529.20) scale(1.000,1)" font-size="4.52" fill="#555">7/13/2021</text>
<text transform="translate(653.84,529.20) scale(1.000,1)" font-size="4.52" fill="#555">7/14/2021</text>
<text transform="translate(678.70,529.20) scale(1.000,1)" font-size="4.52" fill="#555">7/15/2021</text>
<text transform="translate(703.56,529.20) scale(1.000,1)" font-size="4.52" fill="#555">7/16/2021</text>
<text transform="translate(728.41,529.20) scale(1.000,1)" font-size="4.52" fill="#555">7/19/2021</text>
<text transform="translate(754.52,529.20) scale(1.000,1)" font-size="4.52" fill="#555">7/2/2021</text>
<text transform="translate(778.12,529.20) scale(1.000,1)" font-size="4.52" fill="#555">7/20/2021</text>
<text transform="translate(802.98,529.20) scale(1.000,1)" font-size="4.52" fill="#555">7/21/2021</text>
<text transform="translate(827.84,529.20) scale(1.000,1)" font-size="4.52" fill="#555">7/22/2021</text>
<text transform="translate(853.95,529.20) scale(1.000,1)" font-size="4.52" fill="#555">7/5/2021</text>
<text transform="translate(878.81,529.20) scale(1.000,1)" font-size="4.52" fill="#555">7/6/2021</text>
<text transform="translate(903.66,529.20) scale(1.000,1)" font-size="4.52" fill="#555">7/7/2021</text>
<text transform="translate(928.52,529.20) scale(1.000,1)" font-size="4.52" fill="#555">7/8/2021</text>
<text transform="translate(953.37,529.20) scale(1.000,1)" font-size="4.52" fill="#555">7/9/2021</text>
</svg>
</body></html>
